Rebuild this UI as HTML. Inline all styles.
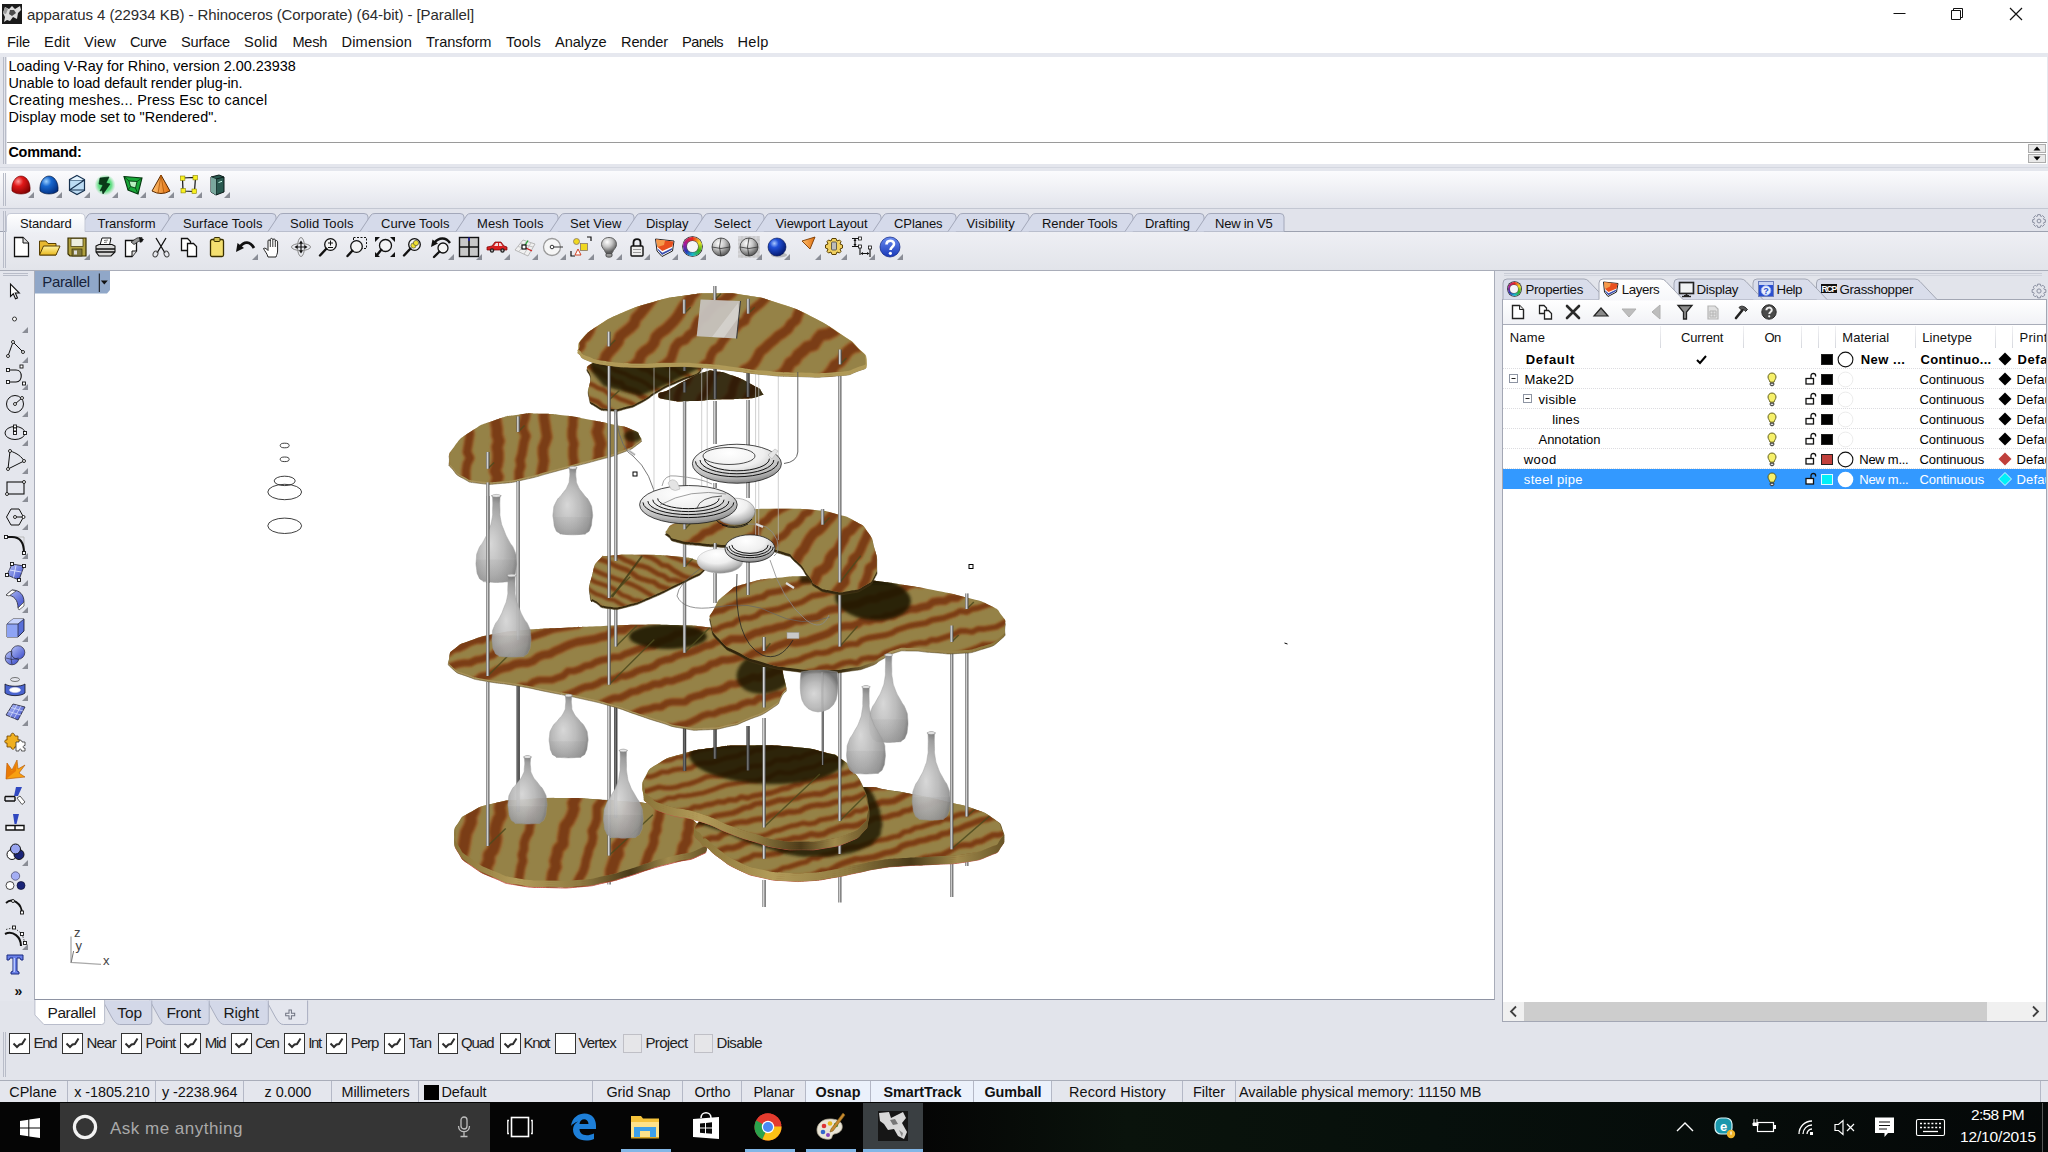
<!DOCTYPE html>
<html><head><meta charset="utf-8"><title>Rhino</title>
<style>
html,body{margin:0;padding:0;}
body{width:2048px;height:1152px;overflow:hidden;position:relative;background:#fff;font-family:"Liberation Sans",sans-serif;color:#000;}
.t{position:absolute;white-space:nowrap;}
.b{position:absolute;}
svg{position:absolute;overflow:visible;}
</style></head><body>
<div class="b" style="left:0px;top:53px;width:2048px;height:1050px;background:#e2e4eb;"></div>
<svg style="left:2px;top:4px" width="20" height="20" viewBox="0 0 20 20"><rect width="20" height="20" fill="#1a1a1a"/><path d="M1 9L3 3L7 5L10 2L13 5L18 2L19 6L16 9L15 15L11 13L8 17L5 16L2 18L3 13Z" fill="#dcdcdc"/><path d="M8 6L12 6L14 9L10 12L7 10Z" fill="#4a4a4a"/><path d="M1 9L3 3L6 5L4 10Z" fill="#9a9a9a"/></svg>
<div class="t" style="left:27.0px;top:6.48px;font-size:15.00px;line-height:17.23px;letter-spacing:-0.082px;color:#2c2c2c;">apparatus 4 (22934 KB) - Rhinoceros (Corporate) (64-bit) - [Parallel]</div>
<svg style="left:1880px;top:0" width="168" height="28"><path d="M13.5 13.5H25.5" stroke="#111" stroke-width="1" fill="none"/><path d="M71.5 10.5h9v9h-9z M73.5 10.5v-2h9v9h-2" stroke="#111" stroke-width="1" fill="none"/><path d="M130 8l12 12M142 8l-12 12" stroke="#111" stroke-width="1.2" fill="none"/></svg>
<div class="t" style="left:7.0px;top:33.85px;font-size:14.60px;line-height:16.78px;letter-spacing:-0.131px;color:#111;">File</div>
<div class="t" style="left:44.0px;top:33.85px;font-size:14.60px;line-height:16.78px;letter-spacing:0.211px;color:#111;">Edit</div>
<div class="t" style="left:84.0px;top:33.85px;font-size:14.60px;line-height:16.78px;letter-spacing:0.155px;color:#111;">View</div>
<div class="t" style="left:130.0px;top:33.85px;font-size:14.60px;line-height:16.78px;letter-spacing:-0.489px;color:#111;">Curve</div>
<div class="t" style="left:181.0px;top:33.85px;font-size:14.60px;line-height:16.78px;letter-spacing:-0.188px;color:#111;">Surface</div>
<div class="t" style="left:244.0px;top:33.85px;font-size:14.60px;line-height:16.78px;letter-spacing:0.207px;color:#111;">Solid</div>
<div class="t" style="left:292.5px;top:33.85px;font-size:14.60px;line-height:16.78px;letter-spacing:-0.300px;color:#111;">Mesh</div>
<div class="t" style="left:341.5px;top:33.85px;font-size:14.60px;line-height:16.78px;letter-spacing:0.170px;color:#111;">Dimension</div>
<div class="t" style="left:426.0px;top:33.85px;font-size:14.60px;line-height:16.78px;letter-spacing:-0.053px;color:#111;">Transform</div>
<div class="t" style="left:506.0px;top:33.85px;font-size:14.60px;line-height:16.78px;letter-spacing:0.184px;color:#111;">Tools</div>
<div class="t" style="left:555.0px;top:33.85px;font-size:14.60px;line-height:16.78px;letter-spacing:-0.063px;color:#111;">Analyze</div>
<div class="t" style="left:621.0px;top:33.85px;font-size:14.60px;line-height:16.78px;letter-spacing:-0.147px;color:#111;">Render</div>
<div class="t" style="left:682.0px;top:33.85px;font-size:14.60px;line-height:16.78px;letter-spacing:-0.607px;color:#111;">Panels</div>
<div class="t" style="left:737.5px;top:33.85px;font-size:14.60px;line-height:16.78px;letter-spacing:0.244px;color:#111;">Help</div>
<div class="b" style="left:0px;top:53px;width:2048px;height:4px;background:#e6e8ef;"></div>
<div class="b" style="left:7px;top:57px;width:2040px;height:85px;background:#fff;"></div>
<div class="b" style="left:3px;top:57px;width:1px;height:108px;background:#b8bcc8;"></div>
<div class="b" style="left:5px;top:57px;width:1px;height:108px;background:#b8bcc8;"></div>
<div class="b" style="left:7px;top:142px;width:2040px;height:1px;background:#9a9a9a;"></div>
<div class="b" style="left:7px;top:143px;width:2040px;height:21px;background:#fff;"></div>
<div class="b" style="left:2047px;top:57px;width:1px;height:108px;background:#e6e8ef;"></div>
<div class="t" style="left:8.5px;top:58.04px;font-size:14.40px;line-height:16.55px;letter-spacing:0.003px;">Loading V-Ray for Rhino, version 2.00.23938</div>
<div class="t" style="left:8.5px;top:75.04px;font-size:14.40px;line-height:16.55px;letter-spacing:-0.077px;">Unable to load default render plug-in.</div>
<div class="t" style="left:8.5px;top:92.04px;font-size:14.40px;line-height:16.55px;letter-spacing:0.203px;">Creating meshes... Press Esc to cancel</div>
<div class="t" style="left:8.5px;top:109.04px;font-size:14.40px;line-height:16.55px;letter-spacing:0.035px;">Display mode set to "Rendered".</div>
<div class="t" style="left:8.5px;top:144.04px;font-size:14.40px;line-height:16.55px;letter-spacing:-0.275px;font-weight:bold;">Command:</div>
<svg style="left:2028px;top:143px" width="18" height="21"><rect x="0.5" y="1.5" width="17" height="8" fill="#e9e9e9" stroke="#adadad"/><rect x="0.5" y="11.5" width="17" height="8" fill="#e9e9e9" stroke="#adadad"/><path d="M5.500 7.500h7l-3.500-4z M5.500 13.500h7l-3.500 4z" fill="#000"/></svg>
<div class="b" style="left:0px;top:164px;width:2048px;height:7px;background:#e4e6ed;"></div>
<div class="b" style="left:0px;top:167px;width:2048px;height:1px;background:#d4d7e0;"></div>
<div class="b" style="left:0px;top:171px;width:2048px;height:37px;background:linear-gradient(#fbfbfd,#e3e5ec);"></div>
<div class="b" style="left:3px;top:173px;width:1px;height:33px;background:#b8bcc8;"></div>
<div class="b" style="left:5px;top:173px;width:1px;height:33px;background:#b8bcc8;"></div>
<div class="b" style="left:0px;top:208px;width:2048px;height:1px;background:#c3c7d2;"></div>
<div class="b" style="left:0px;top:209px;width:2048px;height:23px;background:#e1e3eb;"></div>
<div class="b" style="left:0px;top:231px;width:2048px;height:1px;background:#9da2b0;"></div>
<div class="b" style="left:0px;top:232px;width:2048px;height:38px;background:linear-gradient(#eeeff4,#e2e4ea);"></div>
<div class="b" style="left:0px;top:270px;width:2048px;height:1px;background:#a9adb9;"></div>
<div class="b" style="left:3px;top:211px;width:1px;height:57px;background:#b8bcc8;"></div>
<div class="b" style="left:5px;top:211px;width:1px;height:57px;background:#b8bcc8;"></div>
<svg style="left:0;top:209px" width="1300" height="24"><path d="M77 22.5 L88 6 Q89 4.5 92 4.5 L165 4.5 Q169 4.5 169 8 L169 22.5" fill="#d5daea" stroke="#a3a8ba" stroke-width="1"/><path d="M161 22.5 L172 6 Q173 4.5 176 4.5 L272 4.5 Q276 4.5 276 8 L276 22.5" fill="#d5daea" stroke="#a3a8ba" stroke-width="1"/><path d="M268 22.5 L279 6 Q280 4.5 283 4.5 L364 4.5 Q368 4.5 368 8 L368 22.5" fill="#d5daea" stroke="#a3a8ba" stroke-width="1"/><path d="M360 22.5 L371 6 Q372 4.5 375 4.5 L460 4.5 Q464 4.5 464 8 L464 22.5" fill="#d5daea" stroke="#a3a8ba" stroke-width="1"/><path d="M456 22.5 L467 6 Q468 4.5 471 4.5 L554 4.5 Q558 4.5 558 8 L558 22.5" fill="#d5daea" stroke="#a3a8ba" stroke-width="1"/><path d="M550 22.5 L561 6 Q562 4.5 565 4.5 L630 4.5 Q634 4.5 634 8 L634 22.5" fill="#d5daea" stroke="#a3a8ba" stroke-width="1"/><path d="M626 22.5 L637 6 Q638 4.5 641 4.5 L698 4.5 Q702 4.5 702 8 L702 22.5" fill="#d5daea" stroke="#a3a8ba" stroke-width="1"/><path d="M694 22.5 L705 6 Q706 4.5 709 4.5 L760 4.5 Q764 4.5 764 8 L764 22.5" fill="#d5daea" stroke="#a3a8ba" stroke-width="1"/><path d="M756 22.5 L767 6 Q768 4.5 771 4.5 L877 4.5 Q881 4.5 881 8 L881 22.5" fill="#d5daea" stroke="#a3a8ba" stroke-width="1"/><path d="M873 22.5 L884 6 Q885 4.5 888 4.5 L952 4.5 Q956 4.5 956 8 L956 22.5" fill="#d5daea" stroke="#a3a8ba" stroke-width="1"/><path d="M948 22.5 L959 6 Q960 4.5 963 4.5 L1025 4.5 Q1029 4.5 1029 8 L1029 22.5" fill="#d5daea" stroke="#a3a8ba" stroke-width="1"/><path d="M1021 22.5 L1032 6 Q1033 4.5 1036 4.5 L1129 4.5 Q1133 4.5 1133 8 L1133 22.5" fill="#d5daea" stroke="#a3a8ba" stroke-width="1"/><path d="M1125 22.5 L1136 6 Q1137 4.5 1140 4.5 L1200 4.5 Q1204 4.5 1204 8 L1204 22.5" fill="#d5daea" stroke="#a3a8ba" stroke-width="1"/><path d="M1196 22.5 L1207 6 Q1208 4.5 1211 4.5 L1280 4.5 Q1284 4.5 1284 8 L1284 22.5" fill="#d5daea" stroke="#a3a8ba" stroke-width="1"/><defs><linearGradient id="tg" x1="0" y1="0" x2="0" y2="1"><stop offset="0" stop-color="#fff"/><stop offset="1" stop-color="#eef0f5"/></linearGradient></defs><path d="M6.5 23.5 L6.5 9 Q6.5 4.5 11 4.5 L80.5 4.5 Q85 4.5 85 9 L85 23.5 Z" fill="url(#tg)" stroke="none"/><path d="M6.5 22.5 L6.5 9 Q6.5 4.5 11 4.5 L80.5 4.5 Q85 4.5 85 9 L85 22.5" fill="none" stroke="#c5c9d6"/></svg>
<div class="t" style="left:20.0px;top:217.13px;font-size:13.00px;line-height:14.94px;letter-spacing:-0.157px;color:#111;">Standard</div>
<div class="t" style="left:97.5px;top:217.13px;font-size:13.00px;line-height:14.94px;letter-spacing:-0.083px;color:#111;">Transform</div>
<div class="t" style="left:183.0px;top:217.13px;font-size:13.00px;line-height:14.94px;letter-spacing:0.075px;color:#111;">Surface Tools</div>
<div class="t" style="left:290.0px;top:217.13px;font-size:13.00px;line-height:14.94px;letter-spacing:0.079px;color:#111;">Solid Tools</div>
<div class="t" style="left:381.0px;top:217.13px;font-size:13.00px;line-height:14.94px;letter-spacing:0.009px;color:#111;">Curve Tools</div>
<div class="t" style="left:477.0px;top:217.13px;font-size:13.00px;line-height:14.94px;letter-spacing:0.099px;color:#111;">Mesh Tools</div>
<div class="t" style="left:570.0px;top:217.13px;font-size:13.00px;line-height:14.94px;letter-spacing:0.054px;color:#111;">Set View</div>
<div class="t" style="left:646.0px;top:217.13px;font-size:13.00px;line-height:14.94px;letter-spacing:-0.018px;color:#111;">Display</div>
<div class="t" style="left:714.0px;top:217.13px;font-size:13.00px;line-height:14.94px;letter-spacing:0.145px;color:#111;">Select</div>
<div class="t" style="left:775.5px;top:217.13px;font-size:13.00px;line-height:14.94px;letter-spacing:-0.065px;color:#111;">Viewport Layout</div>
<div class="t" style="left:894.0px;top:217.13px;font-size:13.00px;line-height:14.94px;letter-spacing:-0.091px;color:#111;">CPlanes</div>
<div class="t" style="left:966.5px;top:217.13px;font-size:13.00px;line-height:14.94px;letter-spacing:0.178px;color:#111;">Visibility</div>
<div class="t" style="left:1042.0px;top:217.13px;font-size:13.00px;line-height:14.94px;letter-spacing:-0.071px;color:#111;">Render Tools</div>
<div class="t" style="left:1145.0px;top:217.13px;font-size:13.00px;line-height:14.94px;letter-spacing:-0.065px;color:#111;">Drafting</div>
<div class="t" style="left:1215.0px;top:217.13px;font-size:13.00px;line-height:14.94px;letter-spacing:-0.194px;color:#111;">New in V5</div>
<svg style="left:2030.5px;top:212.5px" width="16" height="16" viewBox="0 0 16 16"><path d="M12.84 6.50L14.37 6.71L14.37 9.29L12.84 9.50L12.48 10.37L13.42 11.59L11.59 13.42L10.37 12.48L9.50 12.84L9.29 14.37L6.71 14.37L6.50 12.84L5.63 12.48L4.41 13.42L2.58 11.59L3.52 10.37L3.16 9.50L1.63 9.29L1.63 6.71L3.16 6.50L3.52 5.63L2.58 4.41L4.41 2.58L5.63 3.52L6.50 3.16L6.71 1.63L9.29 1.63L9.50 3.16L10.37 3.52L11.59 2.58L13.42 4.41L12.48 5.63Z" fill="none" stroke="#8a8fa0" stroke-width="1" stroke-linejoin="round"/><circle cx="8" cy="8" r="1.9" fill="none" stroke="#8a8fa0" stroke-width="1"/></svg>
<div class="b" style="left:0px;top:271px;width:34px;height:730px;background:#e4e6ed;"></div>
<div class="b" style="left:3px;top:273px;width:25px;height:1px;background:#b8bcc8;"></div>
<div class="b" style="left:3px;top:275px;width:25px;height:1px;background:#b8bcc8;"></div>
<div class="b" style="left:34px;top:271px;width:1461px;height:729px;background:#fff;border-left:1px solid #a9adb9;border-right:1px solid #a9adb9;border-bottom:1px solid #8e93a3;box-sizing:border-box;"></div>
<svg style="left:35px;top:271px" width="76" height="23"><path d="M0 0H75V19L72 22.600H0Z" fill="#90a7c8"/><path d="M64.300 2.500V21" stroke="#111" stroke-width="1"/><path d="M65.800 9.500h7l-3.500 4z" fill="#111"/></svg>
<div class="t" style="left:42.2px;top:272.79px;font-size:15.00px;line-height:17.23px;letter-spacing:-0.303px;color:#16223a;">Parallel</div>
<svg width="0" height="0" style="left:0;top:0"><defs>
<radialGradient id="gR" cx=".35" cy=".3" r=".8"><stop offset="0" stop-color="#ff9a9a"/><stop offset=".35" stop-color="#e01818"/><stop offset="1" stop-color="#7a0000"/></radialGradient>
<radialGradient id="gB" cx=".35" cy=".3" r=".8"><stop offset="0" stop-color="#9ad0ff"/><stop offset=".35" stop-color="#1868d0"/><stop offset="1" stop-color="#002a7a"/></radialGradient>
<radialGradient id="gG" cx=".38" cy=".3" r=".75"><stop offset="0" stop-color="#fff"/><stop offset=".45" stop-color="#c4c4c4"/><stop offset="1" stop-color="#4a4a4a"/></radialGradient>
<radialGradient id="gBl" cx=".35" cy=".3" r=".8"><stop offset="0" stop-color="#a8c8ff"/><stop offset=".3" stop-color="#2050d8"/><stop offset="1" stop-color="#001060"/></radialGradient>
<radialGradient id="gGl" cx=".5" cy=".5" r=".5"><stop offset="0" stop-color="#30e060"/><stop offset=".6" stop-color="#40d868" stop-opacity=".8"/><stop offset="1" stop-color="#60e080" stop-opacity="0"/></radialGradient>
<linearGradient id="gY" x1="0" y1="0" x2="0" y2="1"><stop offset="0" stop-color="#fff3a0"/><stop offset="1" stop-color="#e8b820"/></linearGradient>
<linearGradient id="gO" x1="0" y1="0" x2="1" y2="0"><stop offset="0" stop-color="#ffc070"/><stop offset="1" stop-color="#e07010"/></linearGradient>
<linearGradient id="gS" x1="0" y1="0" x2="1" y2="1"><stop offset="0" stop-color="#b8c4f8"/><stop offset="1" stop-color="#3848c8"/></linearGradient>
<linearGradient id="gQ" x1="0" y1="0" x2="0" y2="1"><stop offset="0" stop-color="#6a8cf0"/><stop offset="1" stop-color="#1838b8"/></linearGradient>
</defs></svg>
<svg style="left:10px;top:174px" width="22" height="22" viewBox="0 0 22 22"><path d="M2 17C1 8 6 2 11 2C16 2 21 8 20 17C16 21 6 21 2 17Z" fill="url(#gR)" stroke="#600" stroke-width=".6"/></svg>
<svg style="left:28px;top:192px" width="6" height="6"><path d="M6 0V6H0Z" fill="#8a8d96"/></svg>
<svg style="left:38px;top:174px" width="22" height="22" viewBox="0 0 22 22"><path d="M2 17C1 8 6 2 11 2C16 2 21 8 20 17C16 21 6 21 2 17Z" fill="url(#gB)" stroke="#013" stroke-width=".6"/></svg>
<svg style="left:56px;top:192px" width="6" height="6"><path d="M6 0V6H0Z" fill="#8a8d96"/></svg>
<svg style="left:66px;top:174px" width="22" height="22" viewBox="0 0 22 22"><path d="M11 1.500L18.500 5.500V16.500L11 20.500L3.500 16.500V5.500Z" fill="#bcdcf4" stroke="#16304e" stroke-width="1.200"/><path d="M3.500 6H18.500M3.500 16H18.500M3.500 16L18.500 6" fill="none" stroke="#16304e" stroke-width="1.100"/><path d="M4.500 6L11 2.500L17.500 6Z" fill="#e4f2fc"/></svg>
<svg style="left:84px;top:192px" width="6" height="6"><path d="M6 0V6H0Z" fill="#8a8d96"/></svg>
<svg style="left:94px;top:174px" width="22" height="22" viewBox="0 0 22 22"><circle cx="11" cy="11" r="10.500" fill="url(#gGl)"/><path d="M6 4L15 3L12 9L16 10L9 20L8 16L6 17L9 11L5 10Z" fill="#0a3a18" stroke="#021" stroke-width=".6"/></svg>
<svg style="left:112px;top:192px" width="6" height="6"><path d="M6 0V6H0Z" fill="#8a8d96"/></svg>
<svg style="left:122px;top:174px" width="22" height="22" viewBox="0 0 22 22"><path d="M2 2.500L20 4L16 20L6 16Z" fill="#18a838" stroke="#053a10" stroke-width="1.100"/><path d="M7 7L15 7.500L13.500 14L8.500 12.500Z" fill="#b8f0c0" stroke="#053a10" stroke-width=".9"/><path d="M2 2.500L7 7M20 4L15 7.500M16 20L13.500 14M6 16L8.500 12.500" stroke="#053a10" stroke-width=".8"/></svg>
<svg style="left:140px;top:192px" width="6" height="6"><path d="M6 0V6H0Z" fill="#8a8d96"/></svg>
<svg style="left:150px;top:174px" width="22" height="22" viewBox="0 0 22 22"><path d="M11 1L20 17Q11 22 2 17Z" fill="url(#gO)" stroke="#5a2a00" stroke-width="1"/><path d="M11 1L8 19.500M11 1L14 19.500" stroke="#a85000" stroke-width=".7"/></svg>
<svg style="left:168px;top:192px" width="6" height="6"><path d="M6 0V6H0Z" fill="#8a8d96"/></svg>
<svg style="left:178px;top:174px" width="22" height="22" viewBox="0 0 22 22"><path d="M4.500 4L17.500 3.500L16.500 17.500L5 17Z" fill="none" stroke="#111" stroke-width="1.200"/><g fill="#f8f020" stroke="#8a8400" stroke-width=".6"><rect x="2.500" y="2" width="4.400" height="4.400"/><rect x="15" y="1.500" width="4.400" height="4.400"/><rect x="14" y="15" width="4.400" height="4.400"/><rect x="3" y="14.500" width="4.400" height="4.400"/></g></svg>
<svg style="left:196px;top:192px" width="6" height="6"><path d="M6 0V6H0Z" fill="#8a8d96"/></svg>
<svg style="left:205.5px;top:174px" width="22" height="22" viewBox="0 0 22 22"><path d="M5 3L13 1L18 3V18L10 21L5 18Z" fill="#2a5a50" stroke="#0a1a18" stroke-width="1"/><path d="M5 3L10 5V21M10 5L18 3" fill="none" stroke="#0a1a18" stroke-width=".9"/><path d="M5 3L10 5V21L5 18Z" fill="#7aa89e"/><path d="M12.500 8.500L16 7.300" stroke="#cfe" stroke-width="1"/></svg>
<svg style="left:223.5px;top:192px" width="6" height="6"><path d="M6 0V6H0Z" fill="#8a8d96"/></svg>
<svg style="left:9.5px;top:236px" width="22" height="22" viewBox="0 0 22 22"><path d="M4.500 1.500H13L18.500 7V20.500H4.500Z" fill="#fff" stroke="#111" stroke-width="1.300"/><path d="M13 1.500V7H18.500" fill="#ddd" stroke="#111" stroke-width="1"/></svg>
<svg style="left:37.5px;top:236px" width="22" height="22" viewBox="0 0 22 22"><path d="M1.500 5H8L10 7.500H18V19H1.500Z" fill="#e8b830" stroke="#5a4000" stroke-width="1"/><path d="M1.500 19L5.500 10H22L18 19Z" fill="url(#gY)" stroke="#5a4000" stroke-width="1"/></svg>
<svg style="left:65.5px;top:236px" width="22" height="22" viewBox="0 0 22 22"><path d="M2 2H20V20H4L2 18Z" fill="#b0a040" stroke="#3a3000" stroke-width="1.200"/><rect x="5" y="2.500" width="12" height="8" fill="#ededdd" stroke="#3a3000" stroke-width=".7"/><rect x="6" y="13" width="10" height="7" fill="#807840" stroke="#3a3000" stroke-width=".7"/><rect x="8" y="14.500" width="3" height="4" fill="#ddd"/></svg>
<svg style="left:83.5px;top:254px" width="6" height="6"><path d="M6 0V6H0Z" fill="#8a8d96"/></svg>
<svg style="left:93.5px;top:236px" width="22" height="22" viewBox="0 0 22 22"><path d="M6 9L8 2H17L15.500 9Z" fill="#fff" stroke="#111" stroke-width="1"/><path d="M2 10L5 8.500H18L21 10V16L17 20H5L2 16Z" fill="#d8d8d8" stroke="#111" stroke-width="1.100"/><path d="M2 13H21M2 16H21" stroke="#111" stroke-width="1.300"/><path d="M10 4.500L14 4M10 6.500L13 6" stroke="#555" stroke-width=".8"/></svg>
<svg style="left:122px;top:236px" width="22" height="22" viewBox="0 0 22 22"><path d="M3.500 4.500H14.500V15L10 20.500H3.500Z" fill="#fff" stroke="#111" stroke-width="1.300"/><path d="M14.500 15H10V20.500" fill="#ddd" stroke="#111" stroke-width="1"/><path d="M9 6L15 2L20 1.500V6L17 5L12 8.500Z" fill="#999" stroke="#222" stroke-width=".8"/><path d="M17 1L22 3.500L18 7Z" fill="#111"/></svg>
<svg style="left:150px;top:236px" width="22" height="22" viewBox="0 0 22 22"><path d="M6 2L15 17M16 2L7 17" stroke="#111" stroke-width="1.300"/><ellipse cx="5.500" cy="18" rx="2.300" ry="3" fill="none" stroke="#444" stroke-width="1" transform="rotate(25 5.500 18)"/><ellipse cx="16.500" cy="18" rx="2.300" ry="3" fill="none" stroke="#444" stroke-width="1" transform="rotate(-25 16.500 18)"/></svg>
<svg style="left:178px;top:236px" width="22" height="22" viewBox="0 0 22 22"><path d="M3.500 2.500H9.500L12.500 5.500V14.500H3.500Z" fill="#fff" stroke="#111" stroke-width="1.300"/><path d="M9.500 7.500H15.500L18.500 10.500V20.500H9.500Z" fill="#fff" stroke="#111" stroke-width="1.300"/></svg>
<svg style="left:206px;top:236px" width="22" height="22" viewBox="0 0 22 22"><rect x="4.500" y="3.500" width="13" height="17" rx="1.500" fill="#f4e070" stroke="#3a3000" stroke-width="1.300"/><rect x="8" y="1.500" width="6" height="4" rx="1" fill="#d0c050" stroke="#3a3000" stroke-width="1"/></svg>
<svg style="left:234px;top:236px" width="22" height="22" viewBox="0 0 22 22"><path d="M2 16L3.500 7L10 12Z" fill="#111"/><path d="M6 11C10 5 16 5 20 12" fill="none" stroke="#111" stroke-width="2.800"/></svg>
<svg style="left:252px;top:254px" width="6" height="6"><path d="M6 0V6H0Z" fill="#8a8d96"/></svg>
<svg style="left:261.5px;top:236px" width="22" height="22" viewBox="0 0 22 22"><path d="M6 21C5 17 2.500 15 1.500 12.500C3 11.500 5 13 6 14.500V5C6 3.500 8 3.500 8.300 5V3.500C8.500 2 10.500 2 10.800 3.500V4C11 2.500 13 2.500 13.300 4V5.500C13.500 4 15.500 4.200 15.600 5.800V15C15.500 18 14.500 19 14 21Z" fill="#fff" stroke="#222" stroke-width="1"/><path d="M8.300 5V11M10.800 4V11M13.300 5.500V11" stroke="#222" stroke-width=".9"/></svg>
<svg style="left:290px;top:236px" width="22" height="22" viewBox="0 0 22 22"><ellipse cx="11" cy="11" rx="9.500" ry="3.500" fill="none" stroke="#888" stroke-width="1"/><ellipse cx="11" cy="11" rx="3.500" ry="9.500" fill="none" stroke="#888" stroke-width="1"/><path d="M11 6V16M6 11H16" stroke="#111" stroke-width="1.200"/><path d="M11 4.500L9 7.500H13ZM11 17.500L9 14.500H13ZM4.500 11L7.500 9V13ZM17.500 11L14.500 9V13Z" fill="#111"/></svg>
<svg style="left:318px;top:236px" width="22" height="22" viewBox="0 0 22 22"><circle cx="12.500" cy="8.500" r="5.800" fill="#f4f4f4" stroke="#111" stroke-width="1.300"/><path d="M8.300 12.800L2 19.500" stroke="#111" stroke-width="2.400" stroke-linecap="round"/><path d="M10 7H15M12.500 4.500V9.500M10 11.500H15" stroke="#111" stroke-width="1"/></svg>
<svg style="left:346px;top:236px" width="22" height="22" viewBox="0 0 22 22"><rect x="7.500" y="1.500" width="13" height="11" fill="none" stroke="#111" stroke-width="1" stroke-dasharray="2 1.500"/><circle cx="10.500" cy="10.500" r="5.800" fill="#f4f4f4" stroke="#111" stroke-width="1.300"/><path d="M6.300 14.800L1.500 20" stroke="#111" stroke-width="2.400" stroke-linecap="round"/></svg>
<svg style="left:374px;top:236px" width="22" height="22" viewBox="0 0 22 22"><circle cx="11.500" cy="9.500" r="6" fill="#f4f4f4" stroke="#111" stroke-width="1.300"/><path d="M7.300 13.800L3 19" stroke="#111" stroke-width="2.400" stroke-linecap="round"/><path d="M1 1H6L1 6ZM21 1V6L16 1ZM1 21V16L6 21ZM21 21H16L21 16Z" fill="#111"/></svg>
<svg style="left:402px;top:236px" width="22" height="22" viewBox="0 0 22 22"><circle cx="12.500" cy="8.500" r="5.800" fill="#f4f4f4" stroke="#111" stroke-width="1.300"/><path d="M8.300 12.800L2 19.500" stroke="#111" stroke-width="2.400" stroke-linecap="round"/><circle cx="11.500" cy="9.500" r="2.600" fill="#f0e030" stroke="#554" stroke-width=".7"/><circle cx="14" cy="7" r="2.600" fill="#f0e030" stroke="#554" stroke-width=".7"/></svg>
<svg style="left:430px;top:236px" width="22" height="22" viewBox="0 0 22 22"><circle cx="13" cy="12" r="5" fill="#f4f4f4" stroke="#111" stroke-width="1.300"/><path d="M9.300 15.800L4 21" stroke="#111" stroke-width="2.300" stroke-linecap="round"/><path d="M1 11L2.500 3.500L8 7.500Z" fill="#111"/><path d="M4.500 6.500C9 1 16 1 20 7" fill="none" stroke="#111" stroke-width="2.400"/></svg>
<svg style="left:448px;top:254px" width="6" height="6"><path d="M6 0V6H0Z" fill="#8a8d96"/></svg>
<svg style="left:458px;top:236px" width="22" height="22" viewBox="0 0 22 22"><rect x="1.500" y="1.500" width="19" height="19" fill="#c8c8c8" stroke="#111" stroke-width="1.400"/><path d="M11 1.500V20.500M1.500 11H20.500" stroke="#111" stroke-width="1.600"/><path d="M11 1.500V5" stroke="#22a" stroke-width="1.600"/></svg>
<svg style="left:476px;top:254px" width="6" height="6"><path d="M6 0V6H0Z" fill="#8a8d96"/></svg>
<svg style="left:486px;top:236px" width="22" height="22" viewBox="0 0 22 22"><path d="M1 14V11L6 10L9 6H15L18 10L21 11V14Z" fill="#d82020" stroke="#700" stroke-width=".7"/><path d="M8 10L10 7H12V10ZM13 7H14.500L16.500 10H13Z" fill="#f4dada"/><circle cx="6" cy="14.500" r="2.200" fill="#222"/><circle cx="16.500" cy="14.500" r="2.200" fill="#222"/><circle cx="6" cy="14.500" r=".9" fill="#bbb"/><circle cx="16.500" cy="14.500" r=".9" fill="#bbb"/></svg>
<svg style="left:504px;top:254px" width="6" height="6"><path d="M6 0V6H0Z" fill="#8a8d96"/></svg>
<svg style="left:514px;top:236px" width="22" height="22" viewBox="0 0 22 22"><path d="M1 14L9 4L21 8L14 20Z" fill="#f0f0f0" stroke="#aaa" stroke-width=".8"/><path d="M4 10.500L17 14M6.500 7.500L19 11M5 15.500L12 6M10 18L17 7" stroke="#b8b8b8" stroke-width=".8"/><path d="M10 11L18 15" stroke="#d02020" stroke-width="1.300"/><path d="M10 11L14 4.500" stroke="#20a030" stroke-width="1.300"/><rect x="8" y="9" width="4" height="4" fill="#fff" stroke="#111" stroke-width="1.200"/></svg>
<svg style="left:532px;top:254px" width="6" height="6"><path d="M6 0V6H0Z" fill="#8a8d96"/></svg>
<svg style="left:542px;top:236px" width="22" height="22" viewBox="0 0 22 22"><circle cx="10" cy="11" r="8.500" fill="#f6f6f6" stroke="#9a9a9a" stroke-width="1.300"/><path d="M10 11H21" stroke="#555" stroke-width="1.200"/><circle cx="10" cy="11" r="1.800" fill="#fff" stroke="#333" stroke-width="1"/></svg>
<svg style="left:560px;top:254px" width="6" height="6"><path d="M6 0V6H0Z" fill="#8a8d96"/></svg>
<svg style="left:570px;top:236px" width="22" height="22" viewBox="0 0 22 22"><path d="M1 15V20H5M17 1H21V5" fill="none" stroke="#111" stroke-width="1.200"/><circle cx="6.500" cy="5.500" r="3" fill="#f0d820" stroke="#876" stroke-width=".8"/><rect x="10.500" y="7.500" width="7" height="7" fill="#f0d820" stroke="#876" stroke-width=".8"/><path d="M8 13L11 19H5Z" fill="#fff" stroke="#d04020" stroke-width="1"/></svg>
<svg style="left:588px;top:254px" width="6" height="6"><path d="M6 0V6H0Z" fill="#8a8d96"/></svg>
<svg style="left:598px;top:236px" width="22" height="22" viewBox="0 0 22 22"><path d="M11 1.500C6 1.500 3.500 5 3.500 8.500C3.500 12 6.500 13 7.500 16.500H14.500C15.500 13 18.500 12 18.500 8.500C18.500 5 16 1.500 11 1.500Z" fill="url(#gG)" stroke="#555" stroke-width=".9"/><path d="M8 17.500H14V20C14 21.500 8 21.500 8 20Z" fill="#999" stroke="#333" stroke-width=".8"/></svg>
<svg style="left:616px;top:254px" width="6" height="6"><path d="M6 0V6H0Z" fill="#8a8d96"/></svg>
<svg style="left:626px;top:236px" width="22" height="22" viewBox="0 0 22 22"><rect x="5" y="10" width="12" height="10" rx="1" fill="#eee" stroke="#111" stroke-width="1.400"/><path d="M7.500 10V6.500C7.500 2 14.500 2 14.500 6.500V10" fill="none" stroke="#111" stroke-width="1.800"/><path d="M7 13.500H15M7 16.500H15" stroke="#999" stroke-width="1"/></svg>
<svg style="left:644px;top:254px" width="6" height="6"><path d="M6 0V6H0Z" fill="#8a8d96"/></svg>
<svg style="left:654px;top:236px" width="22" height="22" viewBox="0 0 22 22"><path d="M1.500 3L20 5L18.500 15L8 20.500L3 15Z" fill="#fff" stroke="#222" stroke-width="1"/><path d="M2.200 3.500L19.400 5.500L18.400 10.500L8.300 15L3.500 11Z" fill="#e8501e"/><path d="M2.200 3.500L11 4.500L10 9L3.500 11Z" fill="#f59a4a"/><path d="M3.800 14L8 19L17.800 14L18.200 12L8.400 16.800L3.500 12.500Z" fill="#3a4fae"/></svg>
<svg style="left:672px;top:254px" width="6" height="6"><path d="M6 0V6H0Z" fill="#8a8d96"/></svg>
<svg style="left:682px;top:236px" width="22" height="22" viewBox="0 0 22 22"></svg>
<svg style="left:700px;top:254px" width="6" height="6"><path d="M6 0V6H0Z" fill="#8a8d96"/></svg>
<svg style="left:710px;top:236px" width="22" height="22" viewBox="0 0 22 22"><circle cx="11" cy="11" r="9" fill="url(#gG)" stroke="#333" stroke-width=".8"/><path d="M2 11Q11 14 20 11M11 2Q8 11 11 20" fill="none" stroke="#333" stroke-width=".8"/></svg>
<svg style="left:738px;top:236px" width="22" height="22" viewBox="0 0 22 22"><rect x="0" y="0" width="22" height="22" fill="#d4d4d8"/><path d="M0 4H22M0 8H22M0 12H22M0 16H22M0 20H22M4 0V22M8 0V22M12 0V22M16 0V22M20 0V22" stroke="#bbb" stroke-width=".6"/><circle cx="11" cy="11" r="9" fill="url(#gG)" stroke="#333" stroke-width=".8"/><path d="M2 11Q11 14 20 11M11 2Q8 11 11 20" fill="none" stroke="#333" stroke-width=".8"/></svg>
<svg style="left:756px;top:254px" width="6" height="6"><path d="M6 0V6H0Z" fill="#8a8d96"/></svg>
<svg style="left:766px;top:236px" width="22" height="22" viewBox="0 0 22 22"><ellipse cx="13" cy="19" rx="8" ry="2.500" fill="#999" opacity=".6"/><circle cx="11" cy="11" r="9" fill="url(#gBl)" stroke="#001050" stroke-width=".6"/></svg>
<svg style="left:784px;top:254px" width="6" height="6"><path d="M6 0V6H0Z" fill="#8a8d96"/></svg>
<svg style="left:797px;top:236px" width="22" height="22" viewBox="0 0 22 22"><path d="M5 5L18 1L13 13Z" fill="url(#gO)" stroke="#7a3a00" stroke-width=".9"/></svg>
<svg style="left:815px;top:254px" width="6" height="6"><path d="M6 0V6H0Z" fill="#8a8d96"/></svg>
<svg style="left:823px;top:236px" width="22" height="22" viewBox="0 0 22 22"><path d="M11 2.500L13 2.500L14 5L16.500 4L18 5.500L17 8L19.500 9V12L17 13L18 15.500L16.500 17L14 16L13 18.500H9L8 16L5.500 17L4 15.500L5 13L2.500 12V9L5 8L4 5.500L5.500 4L8 5L9 2.500Z" fill="#f0d060" stroke="#5a4000" stroke-width="1"/><rect x="8.500" y="6" width="5" height="8" rx="1" fill="#bbb" stroke="#444" stroke-width=".8"/></svg>
<svg style="left:841px;top:254px" width="6" height="6"><path d="M6 0V6H0Z" fill="#8a8d96"/></svg>
<svg style="left:851px;top:236px" width="22" height="22" viewBox="0 0 22 22"><path d="M1 2.500H9M1 10.500H9M4 3.500V9.500M9 10.500V19M19 12V21M10.500 17.500H17.500" fill="none" stroke="#111" stroke-width="1.100"/><path d="M4 2.500L2.500 5H5.500ZM4 10.500L2.500 8H5.500ZM9.500 17.500L12 16V19ZM18.500 17.500L16 16V19Z" fill="#111"/><rect x="7.500" y="1" width="3" height="3" fill="#fff" stroke="#111" stroke-width=".8"/><rect x="7.500" y="9" width="3" height="3" fill="#fff" stroke="#111" stroke-width=".8"/><rect x="17.500" y="10" width="3" height="3" fill="#fff" stroke="#111" stroke-width=".8"/></svg>
<svg style="left:869px;top:254px" width="6" height="6"><path d="M6 0V6H0Z" fill="#8a8d96"/></svg>
<svg style="left:879px;top:236px" width="22" height="22" viewBox="0 0 22 22"><circle cx="11" cy="11" r="10" fill="url(#gQ)" stroke="#0a2080" stroke-width=".7"/><path d="M7.500 8.500C7.500 3.500 15 3.500 15 8C15 11 11.500 11 11.500 14" fill="none" stroke="#fff" stroke-width="2.600"/><circle cx="11.400" cy="17.300" r="1.600" fill="#fff"/></svg>
<svg style="left:897px;top:254px" width="6" height="6"><path d="M6 0V6H0Z" fill="#8a8d96"/></svg>
<svg style="left:4px;top:280px" width="22" height="22" viewBox="0 0 22 22"><path d="M6.500 4V16.500L9.300 13.800L11.500 18.800L13.500 18L11.300 13H15.300Z" fill="#fff" stroke="#111" stroke-width="1.100"/></svg>
<svg style="left:4px;top:308px" width="22" height="22" viewBox="0 0 22 22"><circle cx="10.500" cy="11" r="2" fill="#fff" stroke="#333" stroke-width="1"/></svg>
<svg style="left:22px;top:327px" width="6" height="6"><path d="M6 0V6H0Z" fill="#8a8d96"/></svg>
<svg style="left:4px;top:337.5px" width="22" height="22" viewBox="0 0 22 22"><path d="M4 18L9 4L19 14" fill="none" stroke="#111" stroke-width="1"/><circle cx="4" cy="18" r="1.500" fill="#fff" stroke="#111" stroke-width=".9"/><circle cx="9" cy="4" r="1.500" fill="#fff" stroke="#111" stroke-width=".9"/><circle cx="19" cy="14" r="1.500" fill="#fff" stroke="#111" stroke-width=".9"/></svg>
<svg style="left:22px;top:356.5px" width="6" height="6"><path d="M6 0V6H0Z" fill="#8a8d96"/></svg>
<svg style="left:4px;top:365px" width="22" height="22" viewBox="0 0 22 22"><path d="M4 5H12C19 5 19 17 12 17H4" fill="none" stroke="#111" stroke-width="1.100"/><rect x="2.5" y="3.5" width="3" height="3" fill="#fff" stroke="#111" stroke-width=".9"/><rect x="2.5" y="15.5" width="3" height="3" fill="#fff" stroke="#111" stroke-width=".9"/><rect x="16" y="0" width="3" height="3" fill="#fff" stroke="#111" stroke-width=".9"/><rect x="18.5" y="17" width="3" height="3" fill="#fff" stroke="#111" stroke-width=".9"/></svg>
<svg style="left:22px;top:384px" width="6" height="6"><path d="M6 0V6H0Z" fill="#8a8d96"/></svg>
<svg style="left:4px;top:392px" width="22" height="22" viewBox="0 0 22 22"><circle cx="11" cy="12" r="8.500" fill="none" stroke="#111" stroke-width="1"/><path d="M11 12L18 6" stroke="#111" stroke-width="1"/><circle cx="11" cy="12" r="1.500" fill="#fff" stroke="#111" stroke-width=".9"/><circle cx="18" cy="6" r="1.500" fill="#fff" stroke="#111" stroke-width=".9"/></svg>
<svg style="left:22px;top:411px" width="6" height="6"><path d="M6 0V6H0Z" fill="#8a8d96"/></svg>
<svg style="left:4px;top:420.5px" width="22" height="22" viewBox="0 0 22 22"><ellipse cx="11" cy="12" rx="10" ry="6.500" fill="none" stroke="#111" stroke-width="1"/><rect x="9.5" y="4" width="3" height="3" fill="#fff" stroke="#111" stroke-width=".9"/><rect x="9.5" y="10.5" width="3" height="3" fill="#fff" stroke="#111" stroke-width=".9"/><rect x="19.5" y="10.5" width="3" height="3" fill="#fff" stroke="#111" stroke-width=".9"/><rect x="9.5" y="7" width="3" height="3" fill="#fff" stroke="#111" stroke-width=".9"/></svg>
<svg style="left:22px;top:439.5px" width="6" height="6"><path d="M6 0V6H0Z" fill="#8a8d96"/></svg>
<svg style="left:4px;top:448.5px" width="22" height="22" viewBox="0 0 22 22"><path d="M4 20L6 2C13 4 18 8 20 12Z" fill="none" stroke="#111" stroke-width="1"/><circle cx="4" cy="20" r="1.500" fill="#fff" stroke="#111" stroke-width=".9"/><circle cx="6" cy="2" r="1.500" fill="#fff" stroke="#111" stroke-width=".9"/><circle cx="20" cy="12" r="1.500" fill="#fff" stroke="#111" stroke-width=".9"/></svg>
<svg style="left:22px;top:467.5px" width="6" height="6"><path d="M6 0V6H0Z" fill="#8a8d96"/></svg>
<svg style="left:4px;top:477px" width="22" height="22" viewBox="0 0 22 22"><rect x="3" y="5" width="17" height="12" fill="none" stroke="#111" stroke-width="1.100"/><circle cx="3" cy="17" r="1.500" fill="#fff" stroke="#111" stroke-width=".9"/><circle cx="20" cy="5" r="1.500" fill="#fff" stroke="#111" stroke-width=".9"/></svg>
<svg style="left:22px;top:496px" width="6" height="6"><path d="M6 0V6H0Z" fill="#8a8d96"/></svg>
<svg style="left:4px;top:505px" width="22" height="22" viewBox="0 0 22 22"><path d="M7 4H15L19.500 12L15 20H7L2.500 12Z" fill="none" stroke="#111" stroke-width="1"/><path d="M11 12H19.500" stroke="#111" stroke-width="1"/><circle cx="11" cy="12" r="1.500" fill="#fff" stroke="#111" stroke-width=".9"/><circle cx="19.5" cy="12" r="1.500" fill="#fff" stroke="#111" stroke-width=".9"/></svg>
<svg style="left:22px;top:524px" width="6" height="6"><path d="M6 0V6H0Z" fill="#8a8d96"/></svg>
<svg style="left:4px;top:533.5px" width="22" height="22" viewBox="0 0 22 22"><path d="M12 3H20V20" fill="none" stroke="#bbb" stroke-width="1"/><path d="M2 3H8C16 3 20 8 20 19" fill="none" stroke="#111" stroke-width="2"/><rect x="0.5" y="1.5" width="3" height="3" fill="#fff" stroke="#111" stroke-width=".9"/><rect x="18.5" y="17.5" width="3" height="3" fill="#fff" stroke="#111" stroke-width=".9"/></svg>
<svg style="left:22px;top:552.5px" width="6" height="6"><path d="M6 0V6H0Z" fill="#8a8d96"/></svg>
<svg style="left:4px;top:561px" width="22" height="22" viewBox="0 0 22 22"><path d="M3 14L8 3L20 5L15 19Z" fill="url(#gS)" stroke="#223" stroke-width=".8"/><path d="M5.500 9L17.500 11M12 4.500L9.500 16.500" stroke="#e8ecff" stroke-width=".8"/><rect x="1.5" y="12.5" width="3" height="3" fill="#fff" stroke="#111" stroke-width=".9"/><rect x="6.5" y="1.5" width="3" height="3" fill="#fff" stroke="#111" stroke-width=".9"/><rect x="18.5" y="3.5" width="3" height="3" fill="#fff" stroke="#111" stroke-width=".9"/><rect x="13.5" y="17.5" width="3" height="3" fill="#fff" stroke="#111" stroke-width=".9"/></svg>
<svg style="left:22px;top:580px" width="6" height="6"><path d="M6 0V6H0Z" fill="#8a8d96"/></svg>
<svg style="left:4px;top:588px" width="22" height="22" viewBox="0 0 22 22"><path d="M2 7L8 2C16 2 20 7 20 14L14 20C14 12 10 7 2 7Z" fill="url(#gS)" stroke="#223" stroke-width=".8"/><path d="M2 7L8 2L12 3L5 8ZM14 20L20 14V18L15 22Z" fill="#fff" stroke="#444" stroke-width=".7"/></svg>
<svg style="left:22px;top:607px" width="6" height="6"><path d="M6 0V6H0Z" fill="#8a8d96"/></svg>
<svg style="left:4px;top:617px" width="22" height="22" viewBox="0 0 22 22"><path d="M3 7L9 2H20V14L14 20H3Z" fill="#5a70d8" stroke="#112" stroke-width=".8"/><path d="M3 7H14V20H3Z" fill="#8ea4f4"/><path d="M3 7L9 2H20L14 7Z" fill="#c8d4fc"/><path d="M3 7H14V20M14 7L20 2" fill="none" stroke="#223" stroke-width=".7"/></svg>
<svg style="left:22px;top:636px" width="6" height="6"><path d="M6 0V6H0Z" fill="#8a8d96"/></svg>
<svg style="left:4px;top:643.5px" width="22" height="22" viewBox="0 0 22 22"><circle cx="8" cy="14" r="6.800" fill="url(#gS)" stroke="#223" stroke-width=".7"/><circle cx="14" cy="8.500" r="6.800" fill="url(#gS)" stroke="#223" stroke-width=".7"/><path d="M2 14Q8 17 14.500 14M8 7.500Q6 14 8 20.500" fill="none" stroke="#223" stroke-width=".6"/></svg>
<svg style="left:22px;top:662.5px" width="6" height="6"><path d="M6 0V6H0Z" fill="#8a8d96"/></svg>
<svg style="left:4px;top:675.5px" width="22" height="22" viewBox="0 0 22 22"><ellipse cx="11" cy="3.500" rx="4.500" ry="2" fill="none" stroke="#555" stroke-width=".8"/><path d="M1 8C5 11 17 11 21 8V17C17 20.500 5 20.500 1 17Z" fill="#4a64d0" stroke="#112" stroke-width=".8"/><ellipse cx="11" cy="14" rx="5.500" ry="2.600" fill="#fff" stroke="#dde" stroke-width=".6"/></svg>
<svg style="left:22px;top:694.5px" width="6" height="6"><path d="M6 0V6H0Z" fill="#8a8d96"/></svg>
<svg style="left:4px;top:701px" width="22" height="22" viewBox="0 0 22 22"><path d="M2 14L9 3L21 6L14 19Z" fill="url(#gS)" stroke="#223" stroke-width=".8"/><path d="M4.500 10.500L17 14M7 6.500L19 10M6 16L13 4M10 17.500L17 5" stroke="#dfe6ff" stroke-width=".7"/></svg>
<svg style="left:22px;top:720px" width="6" height="6"><path d="M6 0V6H0Z" fill="#8a8d96"/></svg>
<svg style="left:4px;top:730px" width="22" height="22" viewBox="0 0 22 22"><path d="M3 6H7C6 3 10 2 10.500 5L11 6H14V10C17 8.500 18 13 14.500 13L14 17H10.500C11 20 7 20 7 17H3V13C0 14 0 9 3 10Z" fill="#f0b020" stroke="#6a4000" stroke-width=".8"/><path d="M12 12H15C14.500 9.500 18 9.500 18 12H21V15.500C18.500 15 18.500 19 21 18V21H17.500C18 18.500 14.500 18.500 15 21H12Z" fill="#fff" stroke="#333" stroke-width=".8"/></svg>
<svg style="left:4px;top:759px" width="22" height="22" viewBox="0 0 22 22"><path d="M2 20L3 4L8 11L13 1L14 10L21 6L15 14L21 18Z" fill="#f8a010" stroke="#b05000" stroke-width=".6"/><path d="M2 20L3 4L8 12L13 3L12 12Z" fill="#e06000" opacity=".6"/></svg>
<svg style="left:4px;top:785px" width="22" height="22" viewBox="0 0 22 22"><path d="M1 11.500H11M1 16H11M1 11.500V16M11 11.500V16" fill="none" stroke="#111" stroke-width="1.400"/><path d="M12 2H18L14 11H10Z" fill="#3048c0"/><path d="M13 13L16 11L21 17L18 19.500Z" fill="#fff" stroke="#333" stroke-width=".8"/></svg>
<svg style="left:4px;top:812px" width="22" height="22" viewBox="0 0 22 22"><path d="M2 13.500H20V18H2Z" fill="#fff" stroke="#111" stroke-width="1.400"/><path d="M11 13V18" stroke="#111" stroke-width="1.400"/><path d="M9 2H15L12.500 12H10.500Z" fill="#3048c0"/></svg>
<svg style="left:4px;top:841px" width="22" height="22" viewBox="0 0 22 22"><circle cx="8" cy="13.500" r="5" fill="#fff" stroke="#111" stroke-width="1"/><circle cx="15" cy="13.500" r="5" fill="#1a2478" stroke="#111" stroke-width="1"/><circle cx="11.500" cy="8" r="5" fill="#98a4f0" stroke="#111" stroke-width="1"/></svg>
<svg style="left:22px;top:860px" width="6" height="6"><path d="M6 0V6H0Z" fill="#8a8d96"/></svg>
<svg style="left:4px;top:870px" width="22" height="22" viewBox="0 0 22 22"><circle cx="6" cy="15.500" r="4" fill="#fff" stroke="#333" stroke-width=".9"/><circle cx="17" cy="15.500" r="4" fill="#1a2478" stroke="#113" stroke-width=".7"/><circle cx="11.500" cy="6" r="4.200" fill="#a4aef4" stroke="#446" stroke-width=".7"/></svg>
<svg style="left:4px;top:895px" width="22" height="22" viewBox="0 0 22 22"><path d="M2 8C8 2 18 8 18 19" fill="none" stroke="#111" stroke-width="1.800"/><circle cx="9" cy="6" r="1.500" fill="#fff" stroke="#111" stroke-width=".9"/><rect x="16.5" y="16" width="3" height="3" fill="#fff" stroke="#111" stroke-width=".9"/></svg>
<svg style="left:4px;top:924.5px" width="22" height="22" viewBox="0 0 22 22"><path d="M1 9C9 5 17 12 17 21" fill="none" stroke="#111" stroke-width="2"/><path d="M2 4.500L10 2.500L18 9L21 18" fill="none" stroke="#333" stroke-width=".9" stroke-dasharray="1.500 1.500"/><rect x="8.5" y="1" width="3" height="3" fill="#fff" stroke="#111" stroke-width=".9"/><rect x="16.5" y="7.5" width="3" height="3" fill="#fff" stroke="#111" stroke-width=".9"/><rect x="19.5" y="16.5" width="3" height="3" fill="#fff" stroke="#111" stroke-width=".9"/></svg>
<svg style="left:22px;top:943.5px" width="6" height="6"><path d="M6 0V6H0Z" fill="#8a8d96"/></svg>
<svg style="left:4px;top:953px" width="22" height="22" viewBox="0 0 22 22"><path d="M3 2H19V7H17L16 5H13V18L15 19V21H7V19L9 18V5H6L5 7H3Z" fill="#6a80e8" stroke="#1a2a80" stroke-width="1"/><path d="M9.500 5H11V19H9.500Z" fill="#b8c8ff"/></svg>
<div class="t" style="left:14.5px;top:983.41px;font-size:14.00px;line-height:16.09px;font-weight:bold;color:#111;">»</div>
<div class="b" style="left:683.2px;top:237.2px;width:18.4px;height:18.4px;border-radius:50%;background:conic-gradient(#e8281e,#f0e020 17%,#38b018 33%,#18b8c8 50%,#2838b8 64%,#a018a0 80%,#e8281e);box-shadow:0 0 0 .8px #2a2a2a;"></div><div class="b" style="left:687.2px;top:241.2px;width:10.4px;height:10.4px;border-radius:50%;background:#f6f6f8;box-shadow:0 0 0 .6px #555;"></div>
<svg style="left:35px;top:271px;overflow:hidden" width="1459" height="727" viewBox="35 271 1459 727"><defs><filter id="bl" x="-5%" y="-5%" width="110%" height="110%"><feGaussianBlur stdDeviation="0.9"/></filter><filter id="bs" x="-20%" y="-20%" width="140%" height="140%"><feGaussianBlur stdDeviation="1.5"/></filter><linearGradient id="pole" x1="0" y1="0" x2="1" y2="0"><stop offset="0" stop-color="#5e5e5e"/><stop offset=".36" stop-color="#dcdcdc"/><stop offset=".66" stop-color="#989898"/><stop offset="1" stop-color="#3e3e3e"/></linearGradient><linearGradient id="poled" x1="0" y1="0" x2="1" y2="0"><stop offset="0" stop-color="#333"/><stop offset=".4" stop-color="#777"/><stop offset="1" stop-color="#222"/></linearGradient><radialGradient id="vase" cx=".42" cy=".64" r=".66" fx=".36" fy=".56"><stop offset="0" stop-color="#d6d6d6"/><stop offset=".45" stop-color="#b8b8b8"/><stop offset=".8" stop-color="#999"/><stop offset="1" stop-color="#6c6c6c"/></radialGradient><linearGradient id="vsh" x1="0" y1="0" x2="0" y2="1"><stop offset="0" stop-color="#fff" stop-opacity="0"/><stop offset=".72" stop-color="#fff" stop-opacity="0"/><stop offset=".745" stop-color="#777" stop-opacity=".1"/><stop offset="1" stop-color="#555" stop-opacity=".2"/></linearGradient><radialGradient id="ufo" cx=".42" cy=".22" r=".85"><stop offset="0" stop-color="#ffffff"/><stop offset=".45" stop-color="#efefef"/><stop offset=".75" stop-color="#bababa"/><stop offset="1" stop-color="#6e6e6e"/></radialGradient><linearGradient id="side" x1="0" y1="0" x2="1" y2="0"><stop offset="0" stop-color="#8a7438"/><stop offset=".25" stop-color="#b39c5a"/><stop offset=".5" stop-color="#8f7a40"/><stop offset=".7" stop-color="#4a3a18"/><stop offset=".85" stop-color="#a08a4c"/><stop offset="1" stop-color="#6a5628"/></linearGradient><linearGradient id="sideG" x1="0" y1="0" x2="1" y2="0"><stop offset="0" stop-color="#2e220b"/><stop offset=".45" stop-color="#3a2c10"/><stop offset=".6" stop-color="#a8925a"/><stop offset="1" stop-color="#8a7438"/></linearGradient><clipPath id="cA"><path d="M579.5 347.2C580.5 342.8 576.9 345.1 583.4 337.8C589.9 330.5 586.0 333.6 599.0 325.3C612.0 317.0 604.2 320.6 622.5 312.8C640.8 305.0 633.0 307.6 653.8 301.9C674.6 296.2 664.2 298.5 685.0 295.6C705.8 292.7 695.5 293.3 716.3 293.3C737.1 293.3 726.7 292.2 747.5 295.6C768.3 299.0 758.0 296.6 778.8 303.4C799.6 310.2 789.2 305.5 810.0 315.9C830.8 326.3 825.7 324.3 841.3 334.7C856.9 345.1 848.8 338.9 856.9 347.2C865.0 355.5 865.5 352.9 865.5 359.7C865.5 366.5 867.6 363.3 856.9 367.5C846.2 371.7 854.2 370.5 833.4 372.2C812.6 373.9 817.8 373.0 794.4 372.5C771.0 372.0 783.9 372.5 763.1 370.6C742.3 368.7 752.7 369.0 731.9 366.7C711.1 364.4 721.4 364.9 700.6 363.6C679.8 362.3 690.2 362.8 669.4 362.8C648.6 362.8 658.9 364.1 638.1 363.6C617.3 363.1 623.6 363.6 606.9 361.3C590.2 359.0 597.0 360.0 588.1 356.6C579.2 353.2 583.2 354.2 580.3 351.1C577.4 348.0 578.5 351.6 579.5 347.2Z"/></clipPath><clipPath id="cB"><path d="M595.0 362.0C578.5 369.3 592.5 368.8 590.5 380.0C588.5 391.2 587.2 387.3 589.0 395.6C590.8 403.9 589.0 400.5 596.0 405.0C603.0 409.5 600.1 408.3 610.0 409.0C619.9 409.7 615.3 409.7 625.6 407.0C635.9 404.3 629.5 407.0 641.0 401.0C652.5 395.0 647.4 396.0 660.0 389.0C672.6 382.0 665.3 386.4 678.8 380.0C692.3 373.6 696.9 376.5 700.6 369.8C704.3 363.1 710.2 363.9 690.0 360.0C669.8 356.1 671.7 357.3 640.0 358.0C608.3 358.7 611.5 354.7 595.0 362.0Z"/></clipPath><clipPath id="cC"><path d="M658.4 394.8C658.4 398.4 657.9 398.2 669.4 400.3C680.9 402.4 677.2 401.3 692.8 401.0C708.4 400.7 700.7 400.2 716.3 399.5C731.9 398.8 725.7 399.8 739.7 398.8C753.7 397.8 751.1 398.8 758.4 396.4C765.7 394.0 763.7 395.6 761.6 391.7C759.5 387.8 762.1 390.2 752.2 384.7C742.3 379.2 743.9 379.7 731.9 375.3C719.9 370.9 725.7 372.4 716.3 371.4C706.9 370.4 714.2 369.1 703.8 372.2C693.4 375.3 696.5 375.1 685.0 380.8C673.5 386.5 678.3 384.7 669.4 389.4C660.5 394.1 658.4 391.2 658.4 394.8Z"/></clipPath><clipPath id="cD"><path d="M449.4 459.4C449.9 452.6 446.7 456.3 454.0 446.9C461.3 437.5 457.7 440.2 471.3 431.3C484.9 422.4 479.1 425.8 494.7 420.3C510.3 414.8 502.5 417.0 518.1 414.8C533.7 412.6 526.0 413.5 541.6 413.8C557.2 414.1 549.4 413.7 565.0 415.6C580.6 417.5 572.8 416.6 588.4 419.5C604.0 422.4 597.8 421.1 611.9 424.2C626.0 427.3 621.3 425.0 630.6 428.9C639.9 432.8 637.6 431.2 639.7 435.9C641.8 440.6 643.6 437.8 636.9 443.0C630.2 448.2 633.2 446.4 619.7 451.6C606.2 456.8 611.9 454.2 596.3 458.6C580.7 463.0 588.4 460.6 572.8 464.8C557.2 469.0 565.0 466.9 549.4 471.1C533.8 475.3 541.5 473.9 525.9 477.3C510.3 480.7 518.1 480.0 502.5 481.3C486.9 482.6 492.0 482.9 479.0 481.3C466.0 479.7 472.2 481.3 463.4 476.6C454.6 471.9 457.2 472.9 452.5 467.2C447.8 461.5 448.9 466.2 449.4 459.4Z"/></clipPath><clipPath id="cE"><path d="M667.3 529.4C670.7 525.0 667.3 526.8 679.0 521.6C690.7 516.4 684.2 517.7 702.5 513.8C720.8 509.9 716.4 511.4 733.8 509.8C751.2 508.2 739.2 509.3 754.8 509.0C770.4 508.7 761.6 508.5 780.6 508.8C799.6 509.1 793.7 508.1 811.9 509.8C830.1 511.5 820.7 509.9 835.3 513.8C849.9 517.7 844.7 515.4 855.6 521.6C866.5 527.8 861.8 523.7 868.1 532.5C874.4 541.3 871.5 537.6 874.4 548.0C877.3 558.4 876.7 554.4 876.7 563.8C876.7 573.2 878.3 569.0 874.4 576.3C870.5 583.6 873.3 580.7 865.0 585.6C856.7 590.5 860.3 589.2 849.4 591.0C838.5 592.8 843.1 592.8 832.2 591.0C821.3 589.2 824.4 590.5 816.6 585.6C808.8 580.7 815.6 584.6 808.8 576.3C802.0 568.0 805.7 568.9 796.3 560.6C786.9 552.3 795.4 556.0 780.6 551.3C765.8 546.6 770.7 548.6 752.0 546.5C733.3 544.4 740.9 546.0 724.4 545.0C707.9 544.0 717.6 545.0 702.5 543.4C687.4 541.8 690.2 543.2 679.0 540.3C667.8 537.4 672.8 538.4 668.9 534.8C665.0 531.2 663.9 533.8 667.3 529.4Z"/></clipPath><clipPath id="cF"><path d="M590.0 593.4C588.7 584.5 589.2 586.0 592.3 574.7C595.4 563.4 592.9 565.8 599.4 559.4C605.9 553.0 597.4 557.1 611.9 555.5C626.4 553.9 622.2 554.4 643.0 554.7C663.8 555.0 656.6 554.5 674.4 556.3C692.2 558.1 686.9 556.9 696.3 560.0C705.7 563.1 700.4 561.9 702.5 565.5C704.6 569.1 706.7 566.7 702.5 570.8C698.3 574.9 699.4 572.9 690.0 577.8C680.6 582.7 687.4 579.3 674.4 585.6C661.4 591.9 666.6 590.1 651.0 596.6C635.4 603.1 641.6 601.6 627.5 605.0C613.4 608.4 619.2 607.9 608.8 606.7C598.4 605.5 602.6 605.7 596.3 601.3C590.0 596.9 591.3 602.3 590.0 593.4Z"/></clipPath><clipPath id="cG"><path d="M711.0 623.0C708.9 612.6 708.8 618.9 714.0 609.0C719.2 599.1 715.6 602.0 726.6 593.4C737.6 584.8 729.8 588.5 746.9 583.3C764.0 578.1 757.2 580.1 778.0 577.8C798.8 575.5 787.1 576.4 809.4 576.3C831.7 576.2 822.6 575.9 845.0 577.5C867.4 579.1 857.3 578.6 876.6 581.0C895.9 583.4 883.7 581.7 903.0 584.8C922.3 587.9 913.5 586.1 934.4 590.3C955.3 594.5 947.4 592.4 965.6 597.3C983.8 602.2 977.0 599.0 989.0 605.0C1001.0 611.0 996.4 608.2 1001.6 615.3C1006.8 622.4 1005.2 619.0 1004.7 626.3C1004.2 633.6 1007.8 630.4 1000.0 637.2C992.2 644.0 995.4 642.2 981.3 646.6C967.2 651.0 973.4 649.5 957.8 650.5C942.2 651.5 950.0 650.5 934.4 649.7C918.8 648.9 924.0 648.0 911.0 648.0C898.0 648.0 904.7 647.0 895.3 649.7C885.9 652.4 891.6 651.3 882.8 656.0C874.0 660.7 880.3 659.7 868.8 663.8C857.3 667.9 863.0 666.3 848.4 668.4C833.8 670.5 843.2 670.0 825.0 670.0C806.8 670.0 814.6 671.0 793.8 668.4C773.0 665.8 780.8 667.4 762.5 662.2C744.2 657.0 753.1 660.1 739.0 652.8C724.9 645.5 729.6 650.2 720.3 640.3C711.0 630.4 713.1 633.4 711.0 623.0Z"/></clipPath><clipPath id="cH"><path d="M449.4 657.5C450.4 651.2 448.3 653.7 455.6 648.0C462.9 642.3 458.3 645.0 471.3 640.3C484.3 635.6 476.5 637.4 494.7 634.0C512.9 630.6 502.5 632.1 525.9 630.0C549.3 627.9 541.5 629.0 565.0 627.8C588.5 626.6 572.9 627.3 596.3 626.3C619.7 625.3 609.3 625.1 635.3 624.7C661.3 624.3 651.0 624.2 674.4 625.0C697.8 625.8 683.7 624.0 705.6 627.0C727.5 630.0 718.5 626.3 740.0 634.0C761.5 641.7 755.2 634.9 770.0 650.0C784.8 665.1 780.6 664.4 784.4 679.4C788.2 694.4 786.0 685.6 781.3 695.0C776.6 704.4 781.8 699.7 770.3 707.5C758.8 715.3 760.7 712.7 746.9 718.4C733.1 724.1 742.8 721.4 729.0 724.5C715.2 727.6 721.2 727.2 705.6 727.8C690.0 728.4 697.8 728.9 682.2 726.3C666.6 723.7 674.4 724.7 658.8 720.0C643.2 715.3 650.9 717.4 635.3 712.2C619.7 707.0 630.1 709.6 611.9 704.4C593.7 699.2 601.4 701.3 580.6 696.6C559.8 691.9 570.3 694.5 549.4 690.3C528.5 686.1 538.8 687.6 518.0 684.0C497.2 680.4 503.6 682.5 486.9 679.4C470.2 676.3 479.5 678.9 468.0 674.7C456.5 670.5 458.7 672.6 452.5 666.9C446.3 661.2 448.4 663.8 449.4 657.5Z"/></clipPath><clipPath id="cI"><path d="M644.7 788.4C643.7 781.6 641.6 784.3 646.3 776.0C651.0 767.7 646.8 770.7 658.8 763.4C670.8 756.1 664.0 759.2 682.2 754.0C700.4 748.8 691.8 750.6 713.4 747.8C735.0 745.0 720.1 745.8 746.9 745.5C773.7 745.2 767.8 744.7 793.8 747.0C819.8 749.3 809.4 748.6 825.0 752.5C840.6 756.4 831.3 752.5 840.6 758.8C849.9 765.1 845.7 761.9 853.0 771.3C860.3 780.7 857.8 776.5 862.5 786.9C867.2 797.3 865.6 793.1 867.2 802.5C868.8 811.9 868.8 807.7 867.2 815.0C865.6 822.3 868.8 818.1 862.5 824.4C856.2 830.7 860.9 828.6 848.4 833.8C835.9 839.0 840.6 837.4 825.0 840.0C809.4 842.6 817.3 841.6 801.6 841.6C785.9 841.6 793.6 842.6 778.0 840.0C762.4 837.4 770.3 838.5 754.7 833.8C739.1 829.1 749.5 832.8 731.3 826.0C713.1 819.2 721.6 820.2 700.0 813.4C678.4 806.6 683.5 811.3 666.6 805.6C649.7 799.9 656.7 802.0 649.4 796.3C642.1 790.6 645.7 795.2 644.7 788.4Z"/></clipPath><clipPath id="cJ"><path d="M455.6 833.8C455.6 826.0 453.6 830.1 458.8 822.8C464.0 815.5 459.3 818.4 471.3 811.9C483.3 805.4 476.5 807.5 494.7 803.3C512.9 799.1 502.5 801.2 525.9 799.4C549.3 797.6 541.5 798.0 565.0 798.0C588.5 798.0 575.5 798.2 596.3 799.4C617.1 800.6 609.3 800.2 627.5 801.7C645.7 803.2 635.2 801.2 651.0 804.0C666.8 806.8 659.3 803.0 675.0 810.0C690.7 817.0 687.8 815.0 698.0 825.0C708.2 835.0 705.7 831.9 705.6 840.0C705.5 848.1 708.2 844.2 697.8 849.4C687.4 854.6 690.0 851.4 674.4 855.6C658.8 859.8 666.6 857.2 651.0 861.9C635.4 866.6 643.2 865.0 627.5 869.7C611.8 874.4 619.6 872.5 604.0 875.9C588.4 879.3 598.8 878.2 580.6 879.8C562.4 881.4 570.3 881.1 549.4 880.6C528.5 880.1 536.2 881.4 518.0 878.3C499.8 875.2 510.3 877.8 494.7 871.3C479.1 864.8 483.3 867.1 471.3 858.8C459.3 850.5 464.0 854.6 458.8 846.3C453.6 838.0 455.6 841.6 455.6 833.8Z"/></clipPath><clipPath id="cK"><path d="M702.0 836.0C699.1 830.0 689.7 831.3 699.0 822.0C708.3 812.7 703.0 815.3 730.0 808.0C757.0 800.7 746.7 806.0 780.0 800.0C813.3 794.0 802.0 794.3 830.0 790.0C858.0 785.7 844.8 787.0 864.0 787.0C883.2 787.0 869.2 787.2 887.5 790.0C905.8 792.8 898.0 791.3 918.8 795.5C939.6 799.7 931.8 798.1 950.0 802.5C968.2 806.9 959.3 803.6 973.4 808.8C987.5 814.0 982.8 811.3 992.2 818.0C1001.6 824.7 999.0 821.7 1001.6 829.0C1004.2 836.3 1004.2 833.7 1000.0 840.0C995.8 846.3 1000.5 843.1 989.0 847.8C977.5 852.5 983.8 851.1 965.6 854.0C947.4 856.9 955.3 855.1 934.4 856.4C913.5 857.7 921.2 856.7 903.0 858.0C884.8 859.3 895.3 858.0 879.7 860.3C864.1 862.6 871.9 861.9 856.3 865.0C840.7 868.1 848.4 867.1 832.8 869.7C817.2 872.3 825.0 871.8 809.4 872.8C793.8 873.8 801.6 873.8 786.0 872.8C770.4 871.8 778.2 873.3 762.5 869.7C746.8 866.1 753.6 868.7 739.0 861.9C724.4 855.1 729.2 856.7 718.8 849.4C708.4 842.1 713.4 844.5 707.8 840.0C702.2 835.5 704.9 842.0 702.0 836.0Z"/></clipPath></defs><rect x="607.4" y="879.0" width="3.3" height="5.5" fill="url(#pole)"/><rect x="838.1" y="876.0" width="3.3" height="26.5" fill="url(#pole)"/><rect x="762.4" y="880.0" width="3.3" height="27.0" fill="url(#pole)"/><rect x="950.0" y="864.0" width="3.3" height="33.0" fill="url(#pole)"/><rect x="965.1" y="858.0" width="3.3" height="8.0" fill="url(#pole)"/><path d="M455.6 833.8C455.6 826.0 453.6 830.1 458.8 822.8C464.0 815.5 459.3 818.4 471.3 811.9C483.3 805.4 476.5 807.5 494.7 803.3C512.9 799.1 502.5 801.2 525.9 799.4C549.3 797.6 541.5 798.0 565.0 798.0C588.5 798.0 575.5 798.2 596.3 799.4C617.1 800.6 609.3 800.2 627.5 801.7C645.7 803.2 635.2 801.2 651.0 804.0C666.8 806.8 659.3 803.0 675.0 810.0C690.7 817.0 687.8 815.0 698.0 825.0C708.2 835.0 705.7 831.9 705.6 840.0C705.5 848.1 708.2 844.2 697.8 849.4C687.4 854.6 690.0 851.4 674.4 855.6C658.8 859.8 666.6 857.2 651.0 861.9C635.4 866.6 643.2 865.0 627.5 869.7C611.8 874.4 619.6 872.5 604.0 875.9C588.4 879.3 598.8 878.2 580.6 879.8C562.4 881.4 570.3 881.1 549.4 880.6C528.5 880.1 536.2 881.4 518.0 878.3C499.8 875.2 510.3 877.8 494.7 871.3C479.1 864.8 483.3 867.1 471.3 858.8C459.3 850.5 464.0 854.6 458.8 846.3C453.6 838.0 455.6 841.6 455.6 833.8Z" transform="translate(0,7)" fill="url(#side)" stroke="#c8504a" stroke-width="0.9"/><g clip-path="url(#cJ)" transform="translate(0,7)"><g filter="url(#bl)" opacity=".75"><g fill="none" stroke-linejoin="round" stroke="#a26a32"><path d="M455 886L457 880L459 874L457 868L461 862L461 856L463 851L464 845L465 839L466 833L469 827L471 822L471 816L474 810L474 804L477 798L478 792" stroke-width="14.5"/><path d="M481 890L483 885L484 879L486 873L486 867L489 861L489 855L493 850L495 844L496 838L495 832L496 826L498 820L501 815L500 808L501 802L506 797L505 791" stroke-width="14.6"/><path d="M514 890L517 885L519 879L520 873L521 867L523 861L522 855L524 849L524 843L526 837L529 832L530 826L531 820L531 814L536 809L538 803L540 797L542 791" stroke-width="10.6"/><path d="M550 890L552 885L552 879L553 873L556 867L555 861L557 855L558 849L563 844L563 838L564 832L565 826L569 821L572 815L574 809L573 803L576 798L577 792" stroke-width="13.6"/><path d="M577 889L577 883L580 877L583 872L585 866L586 860L588 854L589 849L592 843L593 837L592 831L595 825L597 819L597 813L597 807L601 802L604 796L607 791" stroke-width="10.7"/><path d="M607 888L610 883L611 877L611 871L613 865L615 859L618 854L617 847L621 842L624 836L626 831L626 825L629 819L629 813L632 807L634 802L633 795L634 789" stroke-width="14.5"/><path d="M640 888L640 882L641 876L644 870L645 865L647 859L649 853L652 848L654 842L654 836L657 830L657 824L659 818L660 812L662 807L666 801L669 796L670 790" stroke-width="11.0"/><path d="M671 887L674 882L678 876L678 870L678 864L680 859L682 853L683 847L687 841L687 835L689 830L689 824L691 818L691 812L695 806L699 801L701 795L700 789" stroke-width="12.7"/><path d="M705 887L706 881L710 876L711 870L714 864L714 858L714 852" stroke-width="14.7"/></g><g fill="none" stroke-linejoin="round" stroke="#8d5020"><path d="M455 886L457 880L459 874L457 868L461 862L461 856L463 851L464 845L465 839L466 833L469 827L471 822L471 816L474 810L474 804L477 798L478 792" stroke-width="12.4"/><path d="M481 890L483 885L484 879L486 873L486 867L489 861L489 855L493 850L495 844L496 838L495 832L496 826L498 820L501 815L500 808L501 802L506 797L505 791" stroke-width="12.4"/><path d="M514 890L517 885L519 879L520 873L521 867L523 861L522 855L524 849L524 843L526 837L529 832L530 826L531 820L531 814L536 809L538 803L540 797L542 791" stroke-width="9.1"/><path d="M550 890L552 885L552 879L553 873L556 867L555 861L557 855L558 849L563 844L563 838L564 832L565 826L569 821L572 815L574 809L573 803L576 798L577 792" stroke-width="11.6"/><path d="M577 889L577 883L580 877L583 872L585 866L586 860L588 854L589 849L592 843L593 837L592 831L595 825L597 819L597 813L597 807L601 802L604 796L607 791" stroke-width="9.1"/><path d="M607 888L610 883L611 877L611 871L613 865L615 859L618 854L617 847L621 842L624 836L626 831L626 825L629 819L629 813L632 807L634 802L633 795L634 789" stroke-width="12.4"/><path d="M640 888L640 882L641 876L644 870L645 865L647 859L649 853L652 848L654 842L654 836L657 830L657 824L659 818L660 812L662 807L666 801L669 796L670 790" stroke-width="9.4"/><path d="M671 887L674 882L678 876L678 870L678 864L680 859L682 853L683 847L687 841L687 835L689 830L689 824L691 818L691 812L695 806L699 801L701 795L700 789" stroke-width="10.8"/><path d="M705 887L706 881L710 876L711 870L714 864L714 858L714 852" stroke-width="12.5"/></g><g fill="none" stroke-linejoin="round" stroke="#7a3e14"><path d="M455 886L457 880L459 874L457 868L461 862L461 856L463 851L464 845L465 839L466 833L469 827L471 822L471 816L474 810L474 804L477 798L478 792" stroke-width="10.2"/><path d="M481 890L483 885L484 879L486 873L486 867L489 861L489 855L493 850L495 844L496 838L495 832L496 826L498 820L501 815L500 808L501 802L506 797L505 791" stroke-width="10.2"/><path d="M514 890L517 885L519 879L520 873L521 867L523 861L522 855L524 849L524 843L526 837L529 832L530 826L531 820L531 814L536 809L538 803L540 797L542 791" stroke-width="7.4"/><path d="M550 890L552 885L552 879L553 873L556 867L555 861L557 855L558 849L563 844L563 838L564 832L565 826L569 821L572 815L574 809L573 803L576 798L577 792" stroke-width="9.5"/><path d="M577 889L577 883L580 877L583 872L585 866L586 860L588 854L589 849L592 843L593 837L592 831L595 825L597 819L597 813L597 807L601 802L604 796L607 791" stroke-width="7.5"/><path d="M607 888L610 883L611 877L611 871L613 865L615 859L618 854L617 847L621 842L624 836L626 831L626 825L629 819L629 813L632 807L634 802L633 795L634 789" stroke-width="10.1"/><path d="M640 888L640 882L641 876L644 870L645 865L647 859L649 853L652 848L654 842L654 836L657 830L657 824L659 818L660 812L662 807L666 801L669 796L670 790" stroke-width="7.7"/><path d="M671 887L674 882L678 876L678 870L678 864L680 859L682 853L683 847L687 841L687 835L689 830L689 824L691 818L691 812L695 806L699 801L701 795L700 789" stroke-width="8.8"/><path d="M705 887L706 881L710 876L711 870L714 864L714 858L714 852" stroke-width="10.3"/></g></g></g><path d="M455.6 833.8C455.6 826.0 453.6 830.1 458.8 822.8C464.0 815.5 459.3 818.4 471.3 811.9C483.3 805.4 476.5 807.5 494.7 803.3C512.9 799.1 502.5 801.2 525.9 799.4C549.3 797.6 541.5 798.0 565.0 798.0C588.5 798.0 575.5 798.2 596.3 799.4C617.1 800.6 609.3 800.2 627.5 801.7C645.7 803.2 635.2 801.2 651.0 804.0C666.8 806.8 659.3 803.0 675.0 810.0C690.7 817.0 687.8 815.0 698.0 825.0C708.2 835.0 705.7 831.9 705.6 840.0C705.5 848.1 708.2 844.2 697.8 849.4C687.4 854.6 690.0 851.4 674.4 855.6C658.8 859.8 666.6 857.2 651.0 861.9C635.4 866.6 643.2 865.0 627.5 869.7C611.8 874.4 619.6 872.5 604.0 875.9C588.4 879.3 598.8 878.2 580.6 879.8C562.4 881.4 570.3 881.1 549.4 880.6C528.5 880.1 536.2 881.4 518.0 878.3C499.8 875.2 510.3 877.8 494.7 871.3C479.1 864.8 483.3 867.1 471.3 858.8C459.3 850.5 464.0 854.6 458.8 846.3C453.6 838.0 455.6 841.6 455.6 833.8Z" transform="translate(0,1)" fill="none" stroke="url(#side)" stroke-width="2.2"/><path d="M455.6 833.8C455.6 826.0 453.6 830.1 458.8 822.8C464.0 815.5 459.3 818.4 471.3 811.9C483.3 805.4 476.5 807.5 494.7 803.3C512.9 799.1 502.5 801.2 525.9 799.4C549.3 797.6 541.5 798.0 565.0 798.0C588.5 798.0 575.5 798.2 596.3 799.4C617.1 800.6 609.3 800.2 627.5 801.7C645.7 803.2 635.2 801.2 651.0 804.0C666.8 806.8 659.3 803.0 675.0 810.0C690.7 817.0 687.8 815.0 698.0 825.0C708.2 835.0 705.7 831.9 705.6 840.0C705.5 848.1 708.2 844.2 697.8 849.4C687.4 854.6 690.0 851.4 674.4 855.6C658.8 859.8 666.6 857.2 651.0 861.9C635.4 866.6 643.2 865.0 627.5 869.7C611.8 874.4 619.6 872.5 604.0 875.9C588.4 879.3 598.8 878.2 580.6 879.8C562.4 881.4 570.3 881.1 549.4 880.6C528.5 880.1 536.2 881.4 518.0 878.3C499.8 875.2 510.3 877.8 494.7 871.3C479.1 864.8 483.3 867.1 471.3 858.8C459.3 850.5 464.0 854.6 458.8 846.3C453.6 838.0 455.6 841.6 455.6 833.8Z" transform="translate(0,3)" fill="none" stroke="url(#side)" stroke-width="2.2"/><path d="M455.6 833.8C455.6 826.0 453.6 830.1 458.8 822.8C464.0 815.5 459.3 818.4 471.3 811.9C483.3 805.4 476.5 807.5 494.7 803.3C512.9 799.1 502.5 801.2 525.9 799.4C549.3 797.6 541.5 798.0 565.0 798.0C588.5 798.0 575.5 798.2 596.3 799.4C617.1 800.6 609.3 800.2 627.5 801.7C645.7 803.2 635.2 801.2 651.0 804.0C666.8 806.8 659.3 803.0 675.0 810.0C690.7 817.0 687.8 815.0 698.0 825.0C708.2 835.0 705.7 831.9 705.6 840.0C705.5 848.1 708.2 844.2 697.8 849.4C687.4 854.6 690.0 851.4 674.4 855.6C658.8 859.8 666.6 857.2 651.0 861.9C635.4 866.6 643.2 865.0 627.5 869.7C611.8 874.4 619.6 872.5 604.0 875.9C588.4 879.3 598.8 878.2 580.6 879.8C562.4 881.4 570.3 881.1 549.4 880.6C528.5 880.1 536.2 881.4 518.0 878.3C499.8 875.2 510.3 877.8 494.7 871.3C479.1 864.8 483.3 867.1 471.3 858.8C459.3 850.5 464.0 854.6 458.8 846.3C453.6 838.0 455.6 841.6 455.6 833.8Z" transform="translate(0,5)" fill="none" stroke="url(#side)" stroke-width="2.2"/><path d="M455.6 833.8C455.6 826.0 453.6 830.1 458.8 822.8C464.0 815.5 459.3 818.4 471.3 811.9C483.3 805.4 476.5 807.5 494.7 803.3C512.9 799.1 502.5 801.2 525.9 799.4C549.3 797.6 541.5 798.0 565.0 798.0C588.5 798.0 575.5 798.2 596.3 799.4C617.1 800.6 609.3 800.2 627.5 801.7C645.7 803.2 635.2 801.2 651.0 804.0C666.8 806.8 659.3 803.0 675.0 810.0C690.7 817.0 687.8 815.0 698.0 825.0C708.2 835.0 705.7 831.9 705.6 840.0C705.5 848.1 708.2 844.2 697.8 849.4C687.4 854.6 690.0 851.4 674.4 855.6C658.8 859.8 666.6 857.2 651.0 861.9C635.4 866.6 643.2 865.0 627.5 869.7C611.8 874.4 619.6 872.5 604.0 875.9C588.4 879.3 598.8 878.2 580.6 879.8C562.4 881.4 570.3 881.1 549.4 880.6C528.5 880.1 536.2 881.4 518.0 878.3C499.8 875.2 510.3 877.8 494.7 871.3C479.1 864.8 483.3 867.1 471.3 858.8C459.3 850.5 464.0 854.6 458.8 846.3C453.6 838.0 455.6 841.6 455.6 833.8Z" fill="#958247"/><g clip-path="url(#cJ)"><g filter="url(#bl)"><g fill="none" stroke-linejoin="round" stroke="#a26a32"><path d="M455 886L457 880L459 874L457 868L461 862L461 856L463 851L464 845L465 839L466 833L469 827L471 822L471 816L474 810L474 804L477 798L478 792" stroke-width="14.5"/><path d="M481 890L483 885L484 879L486 873L486 867L489 861L489 855L493 850L495 844L496 838L495 832L496 826L498 820L501 815L500 808L501 802L506 797L505 791" stroke-width="14.6"/><path d="M514 890L517 885L519 879L520 873L521 867L523 861L522 855L524 849L524 843L526 837L529 832L530 826L531 820L531 814L536 809L538 803L540 797L542 791" stroke-width="10.6"/><path d="M550 890L552 885L552 879L553 873L556 867L555 861L557 855L558 849L563 844L563 838L564 832L565 826L569 821L572 815L574 809L573 803L576 798L577 792" stroke-width="13.6"/><path d="M577 889L577 883L580 877L583 872L585 866L586 860L588 854L589 849L592 843L593 837L592 831L595 825L597 819L597 813L597 807L601 802L604 796L607 791" stroke-width="10.7"/><path d="M607 888L610 883L611 877L611 871L613 865L615 859L618 854L617 847L621 842L624 836L626 831L626 825L629 819L629 813L632 807L634 802L633 795L634 789" stroke-width="14.5"/><path d="M640 888L640 882L641 876L644 870L645 865L647 859L649 853L652 848L654 842L654 836L657 830L657 824L659 818L660 812L662 807L666 801L669 796L670 790" stroke-width="11.0"/><path d="M671 887L674 882L678 876L678 870L678 864L680 859L682 853L683 847L687 841L687 835L689 830L689 824L691 818L691 812L695 806L699 801L701 795L700 789" stroke-width="12.7"/><path d="M705 887L706 881L710 876L711 870L714 864L714 858L714 852" stroke-width="14.7"/></g><g fill="none" stroke-linejoin="round" stroke="#8d5020"><path d="M455 886L457 880L459 874L457 868L461 862L461 856L463 851L464 845L465 839L466 833L469 827L471 822L471 816L474 810L474 804L477 798L478 792" stroke-width="12.4"/><path d="M481 890L483 885L484 879L486 873L486 867L489 861L489 855L493 850L495 844L496 838L495 832L496 826L498 820L501 815L500 808L501 802L506 797L505 791" stroke-width="12.4"/><path d="M514 890L517 885L519 879L520 873L521 867L523 861L522 855L524 849L524 843L526 837L529 832L530 826L531 820L531 814L536 809L538 803L540 797L542 791" stroke-width="9.1"/><path d="M550 890L552 885L552 879L553 873L556 867L555 861L557 855L558 849L563 844L563 838L564 832L565 826L569 821L572 815L574 809L573 803L576 798L577 792" stroke-width="11.6"/><path d="M577 889L577 883L580 877L583 872L585 866L586 860L588 854L589 849L592 843L593 837L592 831L595 825L597 819L597 813L597 807L601 802L604 796L607 791" stroke-width="9.1"/><path d="M607 888L610 883L611 877L611 871L613 865L615 859L618 854L617 847L621 842L624 836L626 831L626 825L629 819L629 813L632 807L634 802L633 795L634 789" stroke-width="12.4"/><path d="M640 888L640 882L641 876L644 870L645 865L647 859L649 853L652 848L654 842L654 836L657 830L657 824L659 818L660 812L662 807L666 801L669 796L670 790" stroke-width="9.4"/><path d="M671 887L674 882L678 876L678 870L678 864L680 859L682 853L683 847L687 841L687 835L689 830L689 824L691 818L691 812L695 806L699 801L701 795L700 789" stroke-width="10.8"/><path d="M705 887L706 881L710 876L711 870L714 864L714 858L714 852" stroke-width="12.5"/></g><g fill="none" stroke-linejoin="round" stroke="#7a3e14"><path d="M455 886L457 880L459 874L457 868L461 862L461 856L463 851L464 845L465 839L466 833L469 827L471 822L471 816L474 810L474 804L477 798L478 792" stroke-width="10.2"/><path d="M481 890L483 885L484 879L486 873L486 867L489 861L489 855L493 850L495 844L496 838L495 832L496 826L498 820L501 815L500 808L501 802L506 797L505 791" stroke-width="10.2"/><path d="M514 890L517 885L519 879L520 873L521 867L523 861L522 855L524 849L524 843L526 837L529 832L530 826L531 820L531 814L536 809L538 803L540 797L542 791" stroke-width="7.4"/><path d="M550 890L552 885L552 879L553 873L556 867L555 861L557 855L558 849L563 844L563 838L564 832L565 826L569 821L572 815L574 809L573 803L576 798L577 792" stroke-width="9.5"/><path d="M577 889L577 883L580 877L583 872L585 866L586 860L588 854L589 849L592 843L593 837L592 831L595 825L597 819L597 813L597 807L601 802L604 796L607 791" stroke-width="7.5"/><path d="M607 888L610 883L611 877L611 871L613 865L615 859L618 854L617 847L621 842L624 836L626 831L626 825L629 819L629 813L632 807L634 802L633 795L634 789" stroke-width="10.1"/><path d="M640 888L640 882L641 876L644 870L645 865L647 859L649 853L652 848L654 842L654 836L657 830L657 824L659 818L660 812L662 807L666 801L669 796L670 790" stroke-width="7.7"/><path d="M671 887L674 882L678 876L678 870L678 864L680 859L682 853L683 847L687 841L687 835L689 830L689 824L691 818L691 812L695 806L699 801L701 795L700 789" stroke-width="8.8"/><path d="M705 887L706 881L710 876L711 870L714 864L714 858L714 852" stroke-width="10.3"/></g></g><path d="M487.7 846.0L505.7 828.6" stroke="#4d4a1e" stroke-width="1.4" opacity=".85"/><path d="M609.0 855.6L652.9 814.7" stroke="#4d4a1e" stroke-width="1.4" opacity=".85"/></g><path d="M702.0 836.0C699.1 830.0 689.7 831.3 699.0 822.0C708.3 812.7 703.0 815.3 730.0 808.0C757.0 800.7 746.7 806.0 780.0 800.0C813.3 794.0 802.0 794.3 830.0 790.0C858.0 785.7 844.8 787.0 864.0 787.0C883.2 787.0 869.2 787.2 887.5 790.0C905.8 792.8 898.0 791.3 918.8 795.5C939.6 799.7 931.8 798.1 950.0 802.5C968.2 806.9 959.3 803.6 973.4 808.8C987.5 814.0 982.8 811.3 992.2 818.0C1001.6 824.7 999.0 821.7 1001.6 829.0C1004.2 836.3 1004.2 833.7 1000.0 840.0C995.8 846.3 1000.5 843.1 989.0 847.8C977.5 852.5 983.8 851.1 965.6 854.0C947.4 856.9 955.3 855.1 934.4 856.4C913.5 857.7 921.2 856.7 903.0 858.0C884.8 859.3 895.3 858.0 879.7 860.3C864.1 862.6 871.9 861.9 856.3 865.0C840.7 868.1 848.4 867.1 832.8 869.7C817.2 872.3 825.0 871.8 809.4 872.8C793.8 873.8 801.6 873.8 786.0 872.8C770.4 871.8 778.2 873.3 762.5 869.7C746.8 866.1 753.6 868.7 739.0 861.9C724.4 855.1 729.2 856.7 718.8 849.4C708.4 842.1 713.4 844.5 707.8 840.0C702.2 835.5 704.9 842.0 702.0 836.0Z" transform="translate(0,8)" fill="url(#side)" stroke="#c8504a" stroke-width="0.9"/><g clip-path="url(#cK)" transform="translate(0,8)"><g filter="url(#bl)" opacity=".75"><g fill="none" stroke-linejoin="round" stroke="#a26a32"><path d="M691 791L697 790L703 790L708 788L714 785L720 783L726 783L732 783L738 782L744 779L749 777" stroke-width="6.4"/><path d="M690 809L696 807L702 806L708 806L713 802L719 801L724 798L730 796L736 796L742 793L748 793L753 791L759 789L765 787L770 784L776 783L781 780L787 779L793 777" stroke-width="5.9"/><path d="M689 827L695 825L701 823L706 820L712 818L717 817L724 817L729 814L735 812L740 809L746 808L752 807L758 805L764 804L769 801L775 799L780 795L786 794L792 794L798 793L804 793L810 791L815 788L821 785L827 784L832 783L838 780L844 780L850 777" stroke-width="7.7"/><path d="M694 842L700 842L706 840L711 838L718 838L723 834L728 832L734 831L740 828L746 827L752 826L758 825L763 822L769 821L775 820L781 818L787 817L792 814L798 812L803 810L809 810L815 807L820 805L827 805L832 803L838 802L844 800L849 797L855 794L860 792L866 791L872 788L878 787L884 787L890 785L895 783L901 780L906 778L912 777L919 777" stroke-width="7.3"/><path d="M693 860L699 858L704 856L710 855L716 854L721 850L727 848L733 848L739 846L744 843L750 841L756 839L762 838L767 836L773 835L779 834L785 831L790 828L796 827L802 825L808 825L813 822L819 821L825 820L831 820L837 817L843 816L848 814L854 811L859 809L866 809L871 806L877 804L882 802L888 802L894 801L900 798L905 795L911 792L917 792L923 790L928 788L934 787L940 786L946 784L951 781L957 778" stroke-width="7.6"/><path d="M692 878L697 875L703 872L709 870L714 867L720 866L726 865L731 863L738 863L743 860L749 858L754 855L761 855L767 855L773 854L779 853L784 850L790 849L796 847L801 844L806 841L812 841L818 839L824 836L830 835L835 832L840 829L846 827L852 825L858 826L864 824L869 821L875 818L881 818L887 817L893 815L899 814L904 811L910 810L915 807L921 807L927 805L933 803L938 800L944 799L950 799L956 796L961 793L967 791L973 792L978 788L984 787L990 784L996 783L1001 781L1007 779" stroke-width="6.7"/><path d="M743 880L749 878L755 877L760 876L766 874L772 873L778 871L783 868L789 867L795 865L801 863L806 862L812 858L818 858L823 855L829 854L835 852L841 850L846 848L852 847L858 847L864 845L870 843L875 841L881 840L887 839L893 837L899 836L904 832L910 831L915 828L921 827L927 825L933 823L939 822L944 819L950 819L955 816L961 814L968 814L973 811L979 809L985 808L990 806L996 803L1001 801L1007 800" stroke-width="6.2"/><path d="M787 881L793 878L799 878L805 877L811 876L816 874L822 871L828 871L834 868L839 865L844 863L850 861L856 859L862 859L868 858L874 857L880 855L885 853L891 852L897 850L902 846L908 844L914 843L919 841L925 840L931 838L937 837L942 834L948 833L954 830L959 829L965 826L971 824L976 822L982 820L988 819L993 817L1000 817L1005 814L1011 812" stroke-width="7.2"/><path d="M856 880L862 880L868 879L874 877L880 875L885 874L891 873L897 870L902 867L908 866L913 863L919 860L924 858L931 857L936 856L942 855L948 852L953 849L958 846L964 845L971 845L976 842L982 841L987 838L993 835L999 835L1005 833L1011 832" stroke-width="7.1"/><path d="M894 882L900 881L906 881L912 879L918 878L924 876L929 874L935 872L941 872L947 870L952 867L958 866L963 862L969 860L975 858L980 856L986 855L992 854L998 853L1004 852L1009 848" stroke-width="6.5"/><path d="M963 882L969 880L974 876L980 875L985 873L992 872L997 870L1003 869L1009 867" stroke-width="7.1"/></g><g fill="none" stroke-linejoin="round" stroke="#8d5020"><path d="M691 791L697 790L703 790L708 788L714 785L720 783L726 783L732 783L738 782L744 779L749 777" stroke-width="5.5"/><path d="M690 809L696 807L702 806L708 806L713 802L719 801L724 798L730 796L736 796L742 793L748 793L753 791L759 789L765 787L770 784L776 783L781 780L787 779L793 777" stroke-width="5.1"/><path d="M689 827L695 825L701 823L706 820L712 818L717 817L724 817L729 814L735 812L740 809L746 808L752 807L758 805L764 804L769 801L775 799L780 795L786 794L792 794L798 793L804 793L810 791L815 788L821 785L827 784L832 783L838 780L844 780L850 777" stroke-width="6.6"/><path d="M694 842L700 842L706 840L711 838L718 838L723 834L728 832L734 831L740 828L746 827L752 826L758 825L763 822L769 821L775 820L781 818L787 817L792 814L798 812L803 810L809 810L815 807L820 805L827 805L832 803L838 802L844 800L849 797L855 794L860 792L866 791L872 788L878 787L884 787L890 785L895 783L901 780L906 778L912 777L919 777" stroke-width="6.2"/><path d="M693 860L699 858L704 856L710 855L716 854L721 850L727 848L733 848L739 846L744 843L750 841L756 839L762 838L767 836L773 835L779 834L785 831L790 828L796 827L802 825L808 825L813 822L819 821L825 820L831 820L837 817L843 816L848 814L854 811L859 809L866 809L871 806L877 804L882 802L888 802L894 801L900 798L905 795L911 792L917 792L923 790L928 788L934 787L940 786L946 784L951 781L957 778" stroke-width="6.5"/><path d="M692 878L697 875L703 872L709 870L714 867L720 866L726 865L731 863L738 863L743 860L749 858L754 855L761 855L767 855L773 854L779 853L784 850L790 849L796 847L801 844L806 841L812 841L818 839L824 836L830 835L835 832L840 829L846 827L852 825L858 826L864 824L869 821L875 818L881 818L887 817L893 815L899 814L904 811L910 810L915 807L921 807L927 805L933 803L938 800L944 799L950 799L956 796L961 793L967 791L973 792L978 788L984 787L990 784L996 783L1001 781L1007 779" stroke-width="5.7"/><path d="M743 880L749 878L755 877L760 876L766 874L772 873L778 871L783 868L789 867L795 865L801 863L806 862L812 858L818 858L823 855L829 854L835 852L841 850L846 848L852 847L858 847L864 845L870 843L875 841L881 840L887 839L893 837L899 836L904 832L910 831L915 828L921 827L927 825L933 823L939 822L944 819L950 819L955 816L961 814L968 814L973 811L979 809L985 808L990 806L996 803L1001 801L1007 800" stroke-width="5.3"/><path d="M787 881L793 878L799 878L805 877L811 876L816 874L822 871L828 871L834 868L839 865L844 863L850 861L856 859L862 859L868 858L874 857L880 855L885 853L891 852L897 850L902 846L908 844L914 843L919 841L925 840L931 838L937 837L942 834L948 833L954 830L959 829L965 826L971 824L976 822L982 820L988 819L993 817L1000 817L1005 814L1011 812" stroke-width="6.2"/><path d="M856 880L862 880L868 879L874 877L880 875L885 874L891 873L897 870L902 867L908 866L913 863L919 860L924 858L931 857L936 856L942 855L948 852L953 849L958 846L964 845L971 845L976 842L982 841L987 838L993 835L999 835L1005 833L1011 832" stroke-width="6.0"/><path d="M894 882L900 881L906 881L912 879L918 878L924 876L929 874L935 872L941 872L947 870L952 867L958 866L963 862L969 860L975 858L980 856L986 855L992 854L998 853L1004 852L1009 848" stroke-width="5.5"/><path d="M963 882L969 880L974 876L980 875L985 873L992 872L997 870L1003 869L1009 867" stroke-width="6.1"/></g><g fill="none" stroke-linejoin="round" stroke="#7a3e14"><path d="M691 791L697 790L703 790L708 788L714 785L720 783L726 783L732 783L738 782L744 779L749 777" stroke-width="4.5"/><path d="M690 809L696 807L702 806L708 806L713 802L719 801L724 798L730 796L736 796L742 793L748 793L753 791L759 789L765 787L770 784L776 783L781 780L787 779L793 777" stroke-width="4.1"/><path d="M689 827L695 825L701 823L706 820L712 818L717 817L724 817L729 814L735 812L740 809L746 808L752 807L758 805L764 804L769 801L775 799L780 795L786 794L792 794L798 793L804 793L810 791L815 788L821 785L827 784L832 783L838 780L844 780L850 777" stroke-width="5.4"/><path d="M694 842L700 842L706 840L711 838L718 838L723 834L728 832L734 831L740 828L746 827L752 826L758 825L763 822L769 821L775 820L781 818L787 817L792 814L798 812L803 810L809 810L815 807L820 805L827 805L832 803L838 802L844 800L849 797L855 794L860 792L866 791L872 788L878 787L884 787L890 785L895 783L901 780L906 778L912 777L919 777" stroke-width="5.1"/><path d="M693 860L699 858L704 856L710 855L716 854L721 850L727 848L733 848L739 846L744 843L750 841L756 839L762 838L767 836L773 835L779 834L785 831L790 828L796 827L802 825L808 825L813 822L819 821L825 820L831 820L837 817L843 816L848 814L854 811L859 809L866 809L871 806L877 804L882 802L888 802L894 801L900 798L905 795L911 792L917 792L923 790L928 788L934 787L940 786L946 784L951 781L957 778" stroke-width="5.3"/><path d="M692 878L697 875L703 872L709 870L714 867L720 866L726 865L731 863L738 863L743 860L749 858L754 855L761 855L767 855L773 854L779 853L784 850L790 849L796 847L801 844L806 841L812 841L818 839L824 836L830 835L835 832L840 829L846 827L852 825L858 826L864 824L869 821L875 818L881 818L887 817L893 815L899 814L904 811L910 810L915 807L921 807L927 805L933 803L938 800L944 799L950 799L956 796L961 793L967 791L973 792L978 788L984 787L990 784L996 783L1001 781L1007 779" stroke-width="4.7"/><path d="M743 880L749 878L755 877L760 876L766 874L772 873L778 871L783 868L789 867L795 865L801 863L806 862L812 858L818 858L823 855L829 854L835 852L841 850L846 848L852 847L858 847L864 845L870 843L875 841L881 840L887 839L893 837L899 836L904 832L910 831L915 828L921 827L927 825L933 823L939 822L944 819L950 819L955 816L961 814L968 814L973 811L979 809L985 808L990 806L996 803L1001 801L1007 800" stroke-width="4.3"/><path d="M787 881L793 878L799 878L805 877L811 876L816 874L822 871L828 871L834 868L839 865L844 863L850 861L856 859L862 859L868 858L874 857L880 855L885 853L891 852L897 850L902 846L908 844L914 843L919 841L925 840L931 838L937 837L942 834L948 833L954 830L959 829L965 826L971 824L976 822L982 820L988 819L993 817L1000 817L1005 814L1011 812" stroke-width="5.1"/><path d="M856 880L862 880L868 879L874 877L880 875L885 874L891 873L897 870L902 867L908 866L913 863L919 860L924 858L931 857L936 856L942 855L948 852L953 849L958 846L964 845L971 845L976 842L982 841L987 838L993 835L999 835L1005 833L1011 832" stroke-width="4.9"/><path d="M894 882L900 881L906 881L912 879L918 878L924 876L929 874L935 872L941 872L947 870L952 867L958 866L963 862L969 860L975 858L980 856L986 855L992 854L998 853L1004 852L1009 848" stroke-width="4.5"/><path d="M963 882L969 880L974 876L980 875L985 873L992 872L997 870L1003 869L1009 867" stroke-width="5.0"/></g></g></g><path d="M702.0 836.0C699.1 830.0 689.7 831.3 699.0 822.0C708.3 812.7 703.0 815.3 730.0 808.0C757.0 800.7 746.7 806.0 780.0 800.0C813.3 794.0 802.0 794.3 830.0 790.0C858.0 785.7 844.8 787.0 864.0 787.0C883.2 787.0 869.2 787.2 887.5 790.0C905.8 792.8 898.0 791.3 918.8 795.5C939.6 799.7 931.8 798.1 950.0 802.5C968.2 806.9 959.3 803.6 973.4 808.8C987.5 814.0 982.8 811.3 992.2 818.0C1001.6 824.7 999.0 821.7 1001.6 829.0C1004.2 836.3 1004.2 833.7 1000.0 840.0C995.8 846.3 1000.5 843.1 989.0 847.8C977.5 852.5 983.8 851.1 965.6 854.0C947.4 856.9 955.3 855.1 934.4 856.4C913.5 857.7 921.2 856.7 903.0 858.0C884.8 859.3 895.3 858.0 879.7 860.3C864.1 862.6 871.9 861.9 856.3 865.0C840.7 868.1 848.4 867.1 832.8 869.7C817.2 872.3 825.0 871.8 809.4 872.8C793.8 873.8 801.6 873.8 786.0 872.8C770.4 871.8 778.2 873.3 762.5 869.7C746.8 866.1 753.6 868.7 739.0 861.9C724.4 855.1 729.2 856.7 718.8 849.4C708.4 842.1 713.4 844.5 707.8 840.0C702.2 835.5 704.9 842.0 702.0 836.0Z" transform="translate(0,1)" fill="none" stroke="url(#side)" stroke-width="2.2"/><path d="M702.0 836.0C699.1 830.0 689.7 831.3 699.0 822.0C708.3 812.7 703.0 815.3 730.0 808.0C757.0 800.7 746.7 806.0 780.0 800.0C813.3 794.0 802.0 794.3 830.0 790.0C858.0 785.7 844.8 787.0 864.0 787.0C883.2 787.0 869.2 787.2 887.5 790.0C905.8 792.8 898.0 791.3 918.8 795.5C939.6 799.7 931.8 798.1 950.0 802.5C968.2 806.9 959.3 803.6 973.4 808.8C987.5 814.0 982.8 811.3 992.2 818.0C1001.6 824.7 999.0 821.7 1001.6 829.0C1004.2 836.3 1004.2 833.7 1000.0 840.0C995.8 846.3 1000.5 843.1 989.0 847.8C977.5 852.5 983.8 851.1 965.6 854.0C947.4 856.9 955.3 855.1 934.4 856.4C913.5 857.7 921.2 856.7 903.0 858.0C884.8 859.3 895.3 858.0 879.7 860.3C864.1 862.6 871.9 861.9 856.3 865.0C840.7 868.1 848.4 867.1 832.8 869.7C817.2 872.3 825.0 871.8 809.4 872.8C793.8 873.8 801.6 873.8 786.0 872.8C770.4 871.8 778.2 873.3 762.5 869.7C746.8 866.1 753.6 868.7 739.0 861.9C724.4 855.1 729.2 856.7 718.8 849.4C708.4 842.1 713.4 844.5 707.8 840.0C702.2 835.5 704.9 842.0 702.0 836.0Z" transform="translate(0,3)" fill="none" stroke="url(#side)" stroke-width="2.2"/><path d="M702.0 836.0C699.1 830.0 689.7 831.3 699.0 822.0C708.3 812.7 703.0 815.3 730.0 808.0C757.0 800.7 746.7 806.0 780.0 800.0C813.3 794.0 802.0 794.3 830.0 790.0C858.0 785.7 844.8 787.0 864.0 787.0C883.2 787.0 869.2 787.2 887.5 790.0C905.8 792.8 898.0 791.3 918.8 795.5C939.6 799.7 931.8 798.1 950.0 802.5C968.2 806.9 959.3 803.6 973.4 808.8C987.5 814.0 982.8 811.3 992.2 818.0C1001.6 824.7 999.0 821.7 1001.6 829.0C1004.2 836.3 1004.2 833.7 1000.0 840.0C995.8 846.3 1000.5 843.1 989.0 847.8C977.5 852.5 983.8 851.1 965.6 854.0C947.4 856.9 955.3 855.1 934.4 856.4C913.5 857.7 921.2 856.7 903.0 858.0C884.8 859.3 895.3 858.0 879.7 860.3C864.1 862.6 871.9 861.9 856.3 865.0C840.7 868.1 848.4 867.1 832.8 869.7C817.2 872.3 825.0 871.8 809.4 872.8C793.8 873.8 801.6 873.8 786.0 872.8C770.4 871.8 778.2 873.3 762.5 869.7C746.8 866.1 753.6 868.7 739.0 861.9C724.4 855.1 729.2 856.7 718.8 849.4C708.4 842.1 713.4 844.5 707.8 840.0C702.2 835.5 704.9 842.0 702.0 836.0Z" transform="translate(0,5)" fill="none" stroke="url(#side)" stroke-width="2.2"/><path d="M702.0 836.0C699.1 830.0 689.7 831.3 699.0 822.0C708.3 812.7 703.0 815.3 730.0 808.0C757.0 800.7 746.7 806.0 780.0 800.0C813.3 794.0 802.0 794.3 830.0 790.0C858.0 785.7 844.8 787.0 864.0 787.0C883.2 787.0 869.2 787.2 887.5 790.0C905.8 792.8 898.0 791.3 918.8 795.5C939.6 799.7 931.8 798.1 950.0 802.5C968.2 806.9 959.3 803.6 973.4 808.8C987.5 814.0 982.8 811.3 992.2 818.0C1001.6 824.7 999.0 821.7 1001.6 829.0C1004.2 836.3 1004.2 833.7 1000.0 840.0C995.8 846.3 1000.5 843.1 989.0 847.8C977.5 852.5 983.8 851.1 965.6 854.0C947.4 856.9 955.3 855.1 934.4 856.4C913.5 857.7 921.2 856.7 903.0 858.0C884.8 859.3 895.3 858.0 879.7 860.3C864.1 862.6 871.9 861.9 856.3 865.0C840.7 868.1 848.4 867.1 832.8 869.7C817.2 872.3 825.0 871.8 809.4 872.8C793.8 873.8 801.6 873.8 786.0 872.8C770.4 871.8 778.2 873.3 762.5 869.7C746.8 866.1 753.6 868.7 739.0 861.9C724.4 855.1 729.2 856.7 718.8 849.4C708.4 842.1 713.4 844.5 707.8 840.0C702.2 835.5 704.9 842.0 702.0 836.0Z" transform="translate(0,7)" fill="none" stroke="url(#side)" stroke-width="2.2"/><path d="M702.0 836.0C699.1 830.0 689.7 831.3 699.0 822.0C708.3 812.7 703.0 815.3 730.0 808.0C757.0 800.7 746.7 806.0 780.0 800.0C813.3 794.0 802.0 794.3 830.0 790.0C858.0 785.7 844.8 787.0 864.0 787.0C883.2 787.0 869.2 787.2 887.5 790.0C905.8 792.8 898.0 791.3 918.8 795.5C939.6 799.7 931.8 798.1 950.0 802.5C968.2 806.9 959.3 803.6 973.4 808.8C987.5 814.0 982.8 811.3 992.2 818.0C1001.6 824.7 999.0 821.7 1001.6 829.0C1004.2 836.3 1004.2 833.7 1000.0 840.0C995.8 846.3 1000.5 843.1 989.0 847.8C977.5 852.5 983.8 851.1 965.6 854.0C947.4 856.9 955.3 855.1 934.4 856.4C913.5 857.7 921.2 856.7 903.0 858.0C884.8 859.3 895.3 858.0 879.7 860.3C864.1 862.6 871.9 861.9 856.3 865.0C840.7 868.1 848.4 867.1 832.8 869.7C817.2 872.3 825.0 871.8 809.4 872.8C793.8 873.8 801.6 873.8 786.0 872.8C770.4 871.8 778.2 873.3 762.5 869.7C746.8 866.1 753.6 868.7 739.0 861.9C724.4 855.1 729.2 856.7 718.8 849.4C708.4 842.1 713.4 844.5 707.8 840.0C702.2 835.5 704.9 842.0 702.0 836.0Z" fill="#958247"/><g clip-path="url(#cK)"><g filter="url(#bl)"><g fill="none" stroke-linejoin="round" stroke="#a26a32"><path d="M691 791L697 790L703 790L708 788L714 785L720 783L726 783L732 783L738 782L744 779L749 777" stroke-width="6.4"/><path d="M690 809L696 807L702 806L708 806L713 802L719 801L724 798L730 796L736 796L742 793L748 793L753 791L759 789L765 787L770 784L776 783L781 780L787 779L793 777" stroke-width="5.9"/><path d="M689 827L695 825L701 823L706 820L712 818L717 817L724 817L729 814L735 812L740 809L746 808L752 807L758 805L764 804L769 801L775 799L780 795L786 794L792 794L798 793L804 793L810 791L815 788L821 785L827 784L832 783L838 780L844 780L850 777" stroke-width="7.7"/><path d="M694 842L700 842L706 840L711 838L718 838L723 834L728 832L734 831L740 828L746 827L752 826L758 825L763 822L769 821L775 820L781 818L787 817L792 814L798 812L803 810L809 810L815 807L820 805L827 805L832 803L838 802L844 800L849 797L855 794L860 792L866 791L872 788L878 787L884 787L890 785L895 783L901 780L906 778L912 777L919 777" stroke-width="7.3"/><path d="M693 860L699 858L704 856L710 855L716 854L721 850L727 848L733 848L739 846L744 843L750 841L756 839L762 838L767 836L773 835L779 834L785 831L790 828L796 827L802 825L808 825L813 822L819 821L825 820L831 820L837 817L843 816L848 814L854 811L859 809L866 809L871 806L877 804L882 802L888 802L894 801L900 798L905 795L911 792L917 792L923 790L928 788L934 787L940 786L946 784L951 781L957 778" stroke-width="7.6"/><path d="M692 878L697 875L703 872L709 870L714 867L720 866L726 865L731 863L738 863L743 860L749 858L754 855L761 855L767 855L773 854L779 853L784 850L790 849L796 847L801 844L806 841L812 841L818 839L824 836L830 835L835 832L840 829L846 827L852 825L858 826L864 824L869 821L875 818L881 818L887 817L893 815L899 814L904 811L910 810L915 807L921 807L927 805L933 803L938 800L944 799L950 799L956 796L961 793L967 791L973 792L978 788L984 787L990 784L996 783L1001 781L1007 779" stroke-width="6.7"/><path d="M743 880L749 878L755 877L760 876L766 874L772 873L778 871L783 868L789 867L795 865L801 863L806 862L812 858L818 858L823 855L829 854L835 852L841 850L846 848L852 847L858 847L864 845L870 843L875 841L881 840L887 839L893 837L899 836L904 832L910 831L915 828L921 827L927 825L933 823L939 822L944 819L950 819L955 816L961 814L968 814L973 811L979 809L985 808L990 806L996 803L1001 801L1007 800" stroke-width="6.2"/><path d="M787 881L793 878L799 878L805 877L811 876L816 874L822 871L828 871L834 868L839 865L844 863L850 861L856 859L862 859L868 858L874 857L880 855L885 853L891 852L897 850L902 846L908 844L914 843L919 841L925 840L931 838L937 837L942 834L948 833L954 830L959 829L965 826L971 824L976 822L982 820L988 819L993 817L1000 817L1005 814L1011 812" stroke-width="7.2"/><path d="M856 880L862 880L868 879L874 877L880 875L885 874L891 873L897 870L902 867L908 866L913 863L919 860L924 858L931 857L936 856L942 855L948 852L953 849L958 846L964 845L971 845L976 842L982 841L987 838L993 835L999 835L1005 833L1011 832" stroke-width="7.1"/><path d="M894 882L900 881L906 881L912 879L918 878L924 876L929 874L935 872L941 872L947 870L952 867L958 866L963 862L969 860L975 858L980 856L986 855L992 854L998 853L1004 852L1009 848" stroke-width="6.5"/><path d="M963 882L969 880L974 876L980 875L985 873L992 872L997 870L1003 869L1009 867" stroke-width="7.1"/></g><g fill="none" stroke-linejoin="round" stroke="#8d5020"><path d="M691 791L697 790L703 790L708 788L714 785L720 783L726 783L732 783L738 782L744 779L749 777" stroke-width="5.5"/><path d="M690 809L696 807L702 806L708 806L713 802L719 801L724 798L730 796L736 796L742 793L748 793L753 791L759 789L765 787L770 784L776 783L781 780L787 779L793 777" stroke-width="5.1"/><path d="M689 827L695 825L701 823L706 820L712 818L717 817L724 817L729 814L735 812L740 809L746 808L752 807L758 805L764 804L769 801L775 799L780 795L786 794L792 794L798 793L804 793L810 791L815 788L821 785L827 784L832 783L838 780L844 780L850 777" stroke-width="6.6"/><path d="M694 842L700 842L706 840L711 838L718 838L723 834L728 832L734 831L740 828L746 827L752 826L758 825L763 822L769 821L775 820L781 818L787 817L792 814L798 812L803 810L809 810L815 807L820 805L827 805L832 803L838 802L844 800L849 797L855 794L860 792L866 791L872 788L878 787L884 787L890 785L895 783L901 780L906 778L912 777L919 777" stroke-width="6.2"/><path d="M693 860L699 858L704 856L710 855L716 854L721 850L727 848L733 848L739 846L744 843L750 841L756 839L762 838L767 836L773 835L779 834L785 831L790 828L796 827L802 825L808 825L813 822L819 821L825 820L831 820L837 817L843 816L848 814L854 811L859 809L866 809L871 806L877 804L882 802L888 802L894 801L900 798L905 795L911 792L917 792L923 790L928 788L934 787L940 786L946 784L951 781L957 778" stroke-width="6.5"/><path d="M692 878L697 875L703 872L709 870L714 867L720 866L726 865L731 863L738 863L743 860L749 858L754 855L761 855L767 855L773 854L779 853L784 850L790 849L796 847L801 844L806 841L812 841L818 839L824 836L830 835L835 832L840 829L846 827L852 825L858 826L864 824L869 821L875 818L881 818L887 817L893 815L899 814L904 811L910 810L915 807L921 807L927 805L933 803L938 800L944 799L950 799L956 796L961 793L967 791L973 792L978 788L984 787L990 784L996 783L1001 781L1007 779" stroke-width="5.7"/><path d="M743 880L749 878L755 877L760 876L766 874L772 873L778 871L783 868L789 867L795 865L801 863L806 862L812 858L818 858L823 855L829 854L835 852L841 850L846 848L852 847L858 847L864 845L870 843L875 841L881 840L887 839L893 837L899 836L904 832L910 831L915 828L921 827L927 825L933 823L939 822L944 819L950 819L955 816L961 814L968 814L973 811L979 809L985 808L990 806L996 803L1001 801L1007 800" stroke-width="5.3"/><path d="M787 881L793 878L799 878L805 877L811 876L816 874L822 871L828 871L834 868L839 865L844 863L850 861L856 859L862 859L868 858L874 857L880 855L885 853L891 852L897 850L902 846L908 844L914 843L919 841L925 840L931 838L937 837L942 834L948 833L954 830L959 829L965 826L971 824L976 822L982 820L988 819L993 817L1000 817L1005 814L1011 812" stroke-width="6.2"/><path d="M856 880L862 880L868 879L874 877L880 875L885 874L891 873L897 870L902 867L908 866L913 863L919 860L924 858L931 857L936 856L942 855L948 852L953 849L958 846L964 845L971 845L976 842L982 841L987 838L993 835L999 835L1005 833L1011 832" stroke-width="6.0"/><path d="M894 882L900 881L906 881L912 879L918 878L924 876L929 874L935 872L941 872L947 870L952 867L958 866L963 862L969 860L975 858L980 856L986 855L992 854L998 853L1004 852L1009 848" stroke-width="5.5"/><path d="M963 882L969 880L974 876L980 875L985 873L992 872L997 870L1003 869L1009 867" stroke-width="6.1"/></g><g fill="none" stroke-linejoin="round" stroke="#7a3e14"><path d="M691 791L697 790L703 790L708 788L714 785L720 783L726 783L732 783L738 782L744 779L749 777" stroke-width="4.5"/><path d="M690 809L696 807L702 806L708 806L713 802L719 801L724 798L730 796L736 796L742 793L748 793L753 791L759 789L765 787L770 784L776 783L781 780L787 779L793 777" stroke-width="4.1"/><path d="M689 827L695 825L701 823L706 820L712 818L717 817L724 817L729 814L735 812L740 809L746 808L752 807L758 805L764 804L769 801L775 799L780 795L786 794L792 794L798 793L804 793L810 791L815 788L821 785L827 784L832 783L838 780L844 780L850 777" stroke-width="5.4"/><path d="M694 842L700 842L706 840L711 838L718 838L723 834L728 832L734 831L740 828L746 827L752 826L758 825L763 822L769 821L775 820L781 818L787 817L792 814L798 812L803 810L809 810L815 807L820 805L827 805L832 803L838 802L844 800L849 797L855 794L860 792L866 791L872 788L878 787L884 787L890 785L895 783L901 780L906 778L912 777L919 777" stroke-width="5.1"/><path d="M693 860L699 858L704 856L710 855L716 854L721 850L727 848L733 848L739 846L744 843L750 841L756 839L762 838L767 836L773 835L779 834L785 831L790 828L796 827L802 825L808 825L813 822L819 821L825 820L831 820L837 817L843 816L848 814L854 811L859 809L866 809L871 806L877 804L882 802L888 802L894 801L900 798L905 795L911 792L917 792L923 790L928 788L934 787L940 786L946 784L951 781L957 778" stroke-width="5.3"/><path d="M692 878L697 875L703 872L709 870L714 867L720 866L726 865L731 863L738 863L743 860L749 858L754 855L761 855L767 855L773 854L779 853L784 850L790 849L796 847L801 844L806 841L812 841L818 839L824 836L830 835L835 832L840 829L846 827L852 825L858 826L864 824L869 821L875 818L881 818L887 817L893 815L899 814L904 811L910 810L915 807L921 807L927 805L933 803L938 800L944 799L950 799L956 796L961 793L967 791L973 792L978 788L984 787L990 784L996 783L1001 781L1007 779" stroke-width="4.7"/><path d="M743 880L749 878L755 877L760 876L766 874L772 873L778 871L783 868L789 867L795 865L801 863L806 862L812 858L818 858L823 855L829 854L835 852L841 850L846 848L852 847L858 847L864 845L870 843L875 841L881 840L887 839L893 837L899 836L904 832L910 831L915 828L921 827L927 825L933 823L939 822L944 819L950 819L955 816L961 814L968 814L973 811L979 809L985 808L990 806L996 803L1001 801L1007 800" stroke-width="4.3"/><path d="M787 881L793 878L799 878L805 877L811 876L816 874L822 871L828 871L834 868L839 865L844 863L850 861L856 859L862 859L868 858L874 857L880 855L885 853L891 852L897 850L902 846L908 844L914 843L919 841L925 840L931 838L937 837L942 834L948 833L954 830L959 829L965 826L971 824L976 822L982 820L988 819L993 817L1000 817L1005 814L1011 812" stroke-width="5.1"/><path d="M856 880L862 880L868 879L874 877L880 875L885 874L891 873L897 870L902 867L908 866L913 863L919 860L924 858L931 857L936 856L942 855L948 852L953 849L958 846L964 845L971 845L976 842L982 841L987 838L993 835L999 835L1005 833L1011 832" stroke-width="4.9"/><path d="M894 882L900 881L906 881L912 879L918 878L924 876L929 874L935 872L941 872L947 870L952 867L958 866L963 862L969 860L975 858L980 856L986 855L992 854L998 853L1004 852L1009 848" stroke-width="4.5"/><path d="M963 882L969 880L974 876L980 875L985 873L992 872L997 870L1003 869L1009 867" stroke-width="5.0"/></g></g><path d="M644.7 788.4C643.7 781.6 641.6 784.3 646.3 776.0C651.0 767.7 646.8 770.7 658.8 763.4C670.8 756.1 664.0 759.2 682.2 754.0C700.4 748.8 691.8 750.6 713.4 747.8C735.0 745.0 720.1 745.8 746.9 745.5C773.7 745.2 767.8 744.7 793.8 747.0C819.8 749.3 809.4 748.6 825.0 752.5C840.6 756.4 831.3 752.5 840.6 758.8C849.9 765.1 845.7 761.9 853.0 771.3C860.3 780.7 857.8 776.5 862.5 786.9C867.2 797.3 865.6 793.1 867.2 802.5C868.8 811.9 868.8 807.7 867.2 815.0C865.6 822.3 868.8 818.1 862.5 824.4C856.2 830.7 860.9 828.6 848.4 833.8C835.9 839.0 840.6 837.4 825.0 840.0C809.4 842.6 817.3 841.6 801.6 841.6C785.9 841.6 793.6 842.6 778.0 840.0C762.4 837.4 770.3 838.5 754.7 833.8C739.1 829.1 749.5 832.8 731.3 826.0C713.1 819.2 721.6 820.2 700.0 813.4C678.4 806.6 683.5 811.3 666.6 805.6C649.7 799.9 656.7 802.0 649.4 796.3C642.1 790.6 645.7 795.2 644.7 788.4Z" transform="translate(14,15)" fill="#1c1505" opacity=".82" filter="url(#bs)"/><path d="M951.6 849.0L995.4 810.9" stroke="#4d4a1e" stroke-width="1.4" opacity=".85"/><path d="M966.7 816.6L985.3 799.9" stroke="#4d4a1e" stroke-width="1.4" opacity=".85"/></g><rect x="838.1" y="845.0" width="3.3" height="9.0" fill="url(#pole)"/><rect x="762.4" y="845.0" width="3.3" height="13.8" fill="url(#pole)"/><path d="M644.7 788.4C643.7 781.6 641.6 784.3 646.3 776.0C651.0 767.7 646.8 770.7 658.8 763.4C670.8 756.1 664.0 759.2 682.2 754.0C700.4 748.8 691.8 750.6 713.4 747.8C735.0 745.0 720.1 745.8 746.9 745.5C773.7 745.2 767.8 744.7 793.8 747.0C819.8 749.3 809.4 748.6 825.0 752.5C840.6 756.4 831.3 752.5 840.6 758.8C849.9 765.1 845.7 761.9 853.0 771.3C860.3 780.7 857.8 776.5 862.5 786.9C867.2 797.3 865.6 793.1 867.2 802.5C868.8 811.9 868.8 807.7 867.2 815.0C865.6 822.3 868.8 818.1 862.5 824.4C856.2 830.7 860.9 828.6 848.4 833.8C835.9 839.0 840.6 837.4 825.0 840.0C809.4 842.6 817.3 841.6 801.6 841.6C785.9 841.6 793.6 842.6 778.0 840.0C762.4 837.4 770.3 838.5 754.7 833.8C739.1 829.1 749.5 832.8 731.3 826.0C713.1 819.2 721.6 820.2 700.0 813.4C678.4 806.6 683.5 811.3 666.6 805.6C649.7 799.9 656.7 802.0 649.4 796.3C642.1 790.6 645.7 795.2 644.7 788.4Z" transform="translate(0,8)" fill="url(#side)" stroke="#c8504a" stroke-width="0.9"/><g clip-path="url(#cI)" transform="translate(0,8)"><g filter="url(#bl)" opacity=".75"><g fill="none" stroke-linejoin="round" stroke="#a26a32"><path d="M638 751L644 750L650 750L656 749L662 748L667 744L673 742L679 740L685 740L691 740L697 737L703 737" stroke-width="7.4"/><path d="M635 765L641 763L647 762L653 761L659 761L665 761L671 760L677 757L683 757L688 755L694 752L700 750L706 749L711 748L717 747L723 746L729 746L735 745L741 745L747 743L753 741L759 740L764 737L770 736" stroke-width="5.3"/><path d="M638 778L644 776L650 777L656 775L662 772L668 772L673 770L679 769L685 769L691 768L697 764L703 763L709 763L715 762L720 760L726 758L732 757L738 756L743 753L750 753L755 750L761 750L767 748L773 747L778 745L785 745L791 745L796 741L802 742L808 739L814 737L819 736" stroke-width="5.9"/><path d="M636 795L642 792L647 791L653 789L659 787L665 788L671 788L677 787L683 785L689 784L695 782L700 780L706 777L712 776L718 776L724 775L729 773L735 772L741 769L747 768L753 766L759 766L765 765L770 764L776 760L782 760L788 760L794 757L800 758L805 755L811 753L817 751L823 752L829 751L835 748L841 749L846 746L852 745L858 744L864 743L870 742L876 740" stroke-width="6.0"/><path d="M638 805L644 803L650 802L656 803L662 801L668 798L674 798L679 796L685 796L692 795L697 794L703 793L709 791L715 789L720 787L726 785L732 784L738 783L744 782L750 781L756 781L762 779L768 778L773 775L779 772L785 773L791 773L797 771L802 769L808 768L814 767L820 764L825 761L831 760L837 760L843 757L849 757L855 755L861 755L866 751L872 750" stroke-width="5.6"/><path d="M636 821L642 820L648 818L654 819L659 817L665 816L671 813L677 812L683 811L689 810L694 807L700 807L706 805L712 804L718 802L724 802L729 800L736 800L741 797L748 798L753 796L759 795L765 794L771 793L777 791L782 789L788 788L794 785L800 784L805 781L811 781L817 779L823 778L829 777L835 776L841 774L846 773L852 771L858 770L864 767L870 766L876 767" stroke-width="6.4"/><path d="M638 832L644 831L650 830L656 829L662 827L668 826L674 825L680 825L686 824L691 821L697 821L703 820L709 819L715 816L721 815L727 814L733 813L738 811L744 808L750 807L755 804L761 803L767 804L773 802L779 800L785 800L791 799L797 798L802 796L808 795L814 794L821 794L826 792L832 789L838 788L844 787L849 786L855 785L861 782L866 779L872 778" stroke-width="6.8"/><path d="M636 846L641 844L647 843L653 843L659 842L665 840L671 838L676 836L683 837L688 835L694 833L700 832L706 831L712 832L718 829L723 827L729 825L735 823L741 822L747 822L753 820L759 819L765 819L770 816L776 814L782 814L788 812L794 812L800 811L805 808L811 806L817 805L823 805L829 804L835 802L841 801L846 799L852 799L858 797L864 794L870 794L876 793" stroke-width="6.8"/><path d="M686 851L692 850L697 847L704 847L710 847L715 844L721 844L727 844L733 841L739 842L745 839L750 836L756 837L762 836L768 834L774 831L780 830L785 828L791 826L797 825L803 823L809 824L815 823L820 820L826 819L832 818L838 816L844 816L850 815L855 811L861 811L867 808L873 808" stroke-width="5.9"/><path d="M741 851L747 851L753 848L759 848L765 845L771 845L776 842L782 841L788 840L794 838L800 838L806 836L811 834L818 835L824 834L829 831L835 829L840 827L846 826L853 826L858 825L864 822L870 821L876 821" stroke-width="7.1"/><path d="M809 851L815 851L821 849L827 847L832 845L839 845L844 844L850 842L856 841L862 841L868 839L874 837" stroke-width="5.1"/></g><g fill="none" stroke-linejoin="round" stroke="#8d5020"><path d="M638 751L644 750L650 750L656 749L662 748L667 744L673 742L679 740L685 740L691 740L697 737L703 737" stroke-width="6.3"/><path d="M635 765L641 763L647 762L653 761L659 761L665 761L671 760L677 757L683 757L688 755L694 752L700 750L706 749L711 748L717 747L723 746L729 746L735 745L741 745L747 743L753 741L759 740L764 737L770 736" stroke-width="4.5"/><path d="M638 778L644 776L650 777L656 775L662 772L668 772L673 770L679 769L685 769L691 768L697 764L703 763L709 763L715 762L720 760L726 758L732 757L738 756L743 753L750 753L755 750L761 750L767 748L773 747L778 745L785 745L791 745L796 741L802 742L808 739L814 737L819 736" stroke-width="5.0"/><path d="M636 795L642 792L647 791L653 789L659 787L665 788L671 788L677 787L683 785L689 784L695 782L700 780L706 777L712 776L718 776L724 775L729 773L735 772L741 769L747 768L753 766L759 766L765 765L770 764L776 760L782 760L788 760L794 757L800 758L805 755L811 753L817 751L823 752L829 751L835 748L841 749L846 746L852 745L858 744L864 743L870 742L876 740" stroke-width="5.1"/><path d="M638 805L644 803L650 802L656 803L662 801L668 798L674 798L679 796L685 796L692 795L697 794L703 793L709 791L715 789L720 787L726 785L732 784L738 783L744 782L750 781L756 781L762 779L768 778L773 775L779 772L785 773L791 773L797 771L802 769L808 768L814 767L820 764L825 761L831 760L837 760L843 757L849 757L855 755L861 755L866 751L872 750" stroke-width="4.7"/><path d="M636 821L642 820L648 818L654 819L659 817L665 816L671 813L677 812L683 811L689 810L694 807L700 807L706 805L712 804L718 802L724 802L729 800L736 800L741 797L748 798L753 796L759 795L765 794L771 793L777 791L782 789L788 788L794 785L800 784L805 781L811 781L817 779L823 778L829 777L835 776L841 774L846 773L852 771L858 770L864 767L870 766L876 767" stroke-width="5.4"/><path d="M638 832L644 831L650 830L656 829L662 827L668 826L674 825L680 825L686 824L691 821L697 821L703 820L709 819L715 816L721 815L727 814L733 813L738 811L744 808L750 807L755 804L761 803L767 804L773 802L779 800L785 800L791 799L797 798L802 796L808 795L814 794L821 794L826 792L832 789L838 788L844 787L849 786L855 785L861 782L866 779L872 778" stroke-width="5.8"/><path d="M636 846L641 844L647 843L653 843L659 842L665 840L671 838L676 836L683 837L688 835L694 833L700 832L706 831L712 832L718 829L723 827L729 825L735 823L741 822L747 822L753 820L759 819L765 819L770 816L776 814L782 814L788 812L794 812L800 811L805 808L811 806L817 805L823 805L829 804L835 802L841 801L846 799L852 799L858 797L864 794L870 794L876 793" stroke-width="5.8"/><path d="M686 851L692 850L697 847L704 847L710 847L715 844L721 844L727 844L733 841L739 842L745 839L750 836L756 837L762 836L768 834L774 831L780 830L785 828L791 826L797 825L803 823L809 824L815 823L820 820L826 819L832 818L838 816L844 816L850 815L855 811L861 811L867 808L873 808" stroke-width="5.0"/><path d="M741 851L747 851L753 848L759 848L765 845L771 845L776 842L782 841L788 840L794 838L800 838L806 836L811 834L818 835L824 834L829 831L835 829L840 827L846 826L853 826L858 825L864 822L870 821L876 821" stroke-width="6.1"/><path d="M809 851L815 851L821 849L827 847L832 845L839 845L844 844L850 842L856 841L862 841L868 839L874 837" stroke-width="4.4"/></g><g fill="none" stroke-linejoin="round" stroke="#7a3e14"><path d="M638 751L644 750L650 750L656 749L662 748L667 744L673 742L679 740L685 740L691 740L697 737L703 737" stroke-width="5.2"/><path d="M635 765L641 763L647 762L653 761L659 761L665 761L671 760L677 757L683 757L688 755L694 752L700 750L706 749L711 748L717 747L723 746L729 746L735 745L741 745L747 743L753 741L759 740L764 737L770 736" stroke-width="3.7"/><path d="M638 778L644 776L650 777L656 775L662 772L668 772L673 770L679 769L685 769L691 768L697 764L703 763L709 763L715 762L720 760L726 758L732 757L738 756L743 753L750 753L755 750L761 750L767 748L773 747L778 745L785 745L791 745L796 741L802 742L808 739L814 737L819 736" stroke-width="4.1"/><path d="M636 795L642 792L647 791L653 789L659 787L665 788L671 788L677 787L683 785L689 784L695 782L700 780L706 777L712 776L718 776L724 775L729 773L735 772L741 769L747 768L753 766L759 766L765 765L770 764L776 760L782 760L788 760L794 757L800 758L805 755L811 753L817 751L823 752L829 751L835 748L841 749L846 746L852 745L858 744L864 743L870 742L876 740" stroke-width="4.2"/><path d="M638 805L644 803L650 802L656 803L662 801L668 798L674 798L679 796L685 796L692 795L697 794L703 793L709 791L715 789L720 787L726 785L732 784L738 783L744 782L750 781L756 781L762 779L768 778L773 775L779 772L785 773L791 773L797 771L802 769L808 768L814 767L820 764L825 761L831 760L837 760L843 757L849 757L855 755L861 755L866 751L872 750" stroke-width="3.9"/><path d="M636 821L642 820L648 818L654 819L659 817L665 816L671 813L677 812L683 811L689 810L694 807L700 807L706 805L712 804L718 802L724 802L729 800L736 800L741 797L748 798L753 796L759 795L765 794L771 793L777 791L782 789L788 788L794 785L800 784L805 781L811 781L817 779L823 778L829 777L835 776L841 774L846 773L852 771L858 770L864 767L870 766L876 767" stroke-width="4.4"/><path d="M638 832L644 831L650 830L656 829L662 827L668 826L674 825L680 825L686 824L691 821L697 821L703 820L709 819L715 816L721 815L727 814L733 813L738 811L744 808L750 807L755 804L761 803L767 804L773 802L779 800L785 800L791 799L797 798L802 796L808 795L814 794L821 794L826 792L832 789L838 788L844 787L849 786L855 785L861 782L866 779L872 778" stroke-width="4.8"/><path d="M636 846L641 844L647 843L653 843L659 842L665 840L671 838L676 836L683 837L688 835L694 833L700 832L706 831L712 832L718 829L723 827L729 825L735 823L741 822L747 822L753 820L759 819L765 819L770 816L776 814L782 814L788 812L794 812L800 811L805 808L811 806L817 805L823 805L829 804L835 802L841 801L846 799L852 799L858 797L864 794L870 794L876 793" stroke-width="4.7"/><path d="M686 851L692 850L697 847L704 847L710 847L715 844L721 844L727 844L733 841L739 842L745 839L750 836L756 837L762 836L768 834L774 831L780 830L785 828L791 826L797 825L803 823L809 824L815 823L820 820L826 819L832 818L838 816L844 816L850 815L855 811L861 811L867 808L873 808" stroke-width="4.1"/><path d="M741 851L747 851L753 848L759 848L765 845L771 845L776 842L782 841L788 840L794 838L800 838L806 836L811 834L818 835L824 834L829 831L835 829L840 827L846 826L853 826L858 825L864 822L870 821L876 821" stroke-width="5.0"/><path d="M809 851L815 851L821 849L827 847L832 845L839 845L844 844L850 842L856 841L862 841L868 839L874 837" stroke-width="3.6"/></g></g></g><path d="M644.7 788.4C643.7 781.6 641.6 784.3 646.3 776.0C651.0 767.7 646.8 770.7 658.8 763.4C670.8 756.1 664.0 759.2 682.2 754.0C700.4 748.8 691.8 750.6 713.4 747.8C735.0 745.0 720.1 745.8 746.9 745.5C773.7 745.2 767.8 744.7 793.8 747.0C819.8 749.3 809.4 748.6 825.0 752.5C840.6 756.4 831.3 752.5 840.6 758.8C849.9 765.1 845.7 761.9 853.0 771.3C860.3 780.7 857.8 776.5 862.5 786.9C867.2 797.3 865.6 793.1 867.2 802.5C868.8 811.9 868.8 807.7 867.2 815.0C865.6 822.3 868.8 818.1 862.5 824.4C856.2 830.7 860.9 828.6 848.4 833.8C835.9 839.0 840.6 837.4 825.0 840.0C809.4 842.6 817.3 841.6 801.6 841.6C785.9 841.6 793.6 842.6 778.0 840.0C762.4 837.4 770.3 838.5 754.7 833.8C739.1 829.1 749.5 832.8 731.3 826.0C713.1 819.2 721.6 820.2 700.0 813.4C678.4 806.6 683.5 811.3 666.6 805.6C649.7 799.9 656.7 802.0 649.4 796.3C642.1 790.6 645.7 795.2 644.7 788.4Z" transform="translate(0,1)" fill="none" stroke="url(#side)" stroke-width="2.2"/><path d="M644.7 788.4C643.7 781.6 641.6 784.3 646.3 776.0C651.0 767.7 646.8 770.7 658.8 763.4C670.8 756.1 664.0 759.2 682.2 754.0C700.4 748.8 691.8 750.6 713.4 747.8C735.0 745.0 720.1 745.8 746.9 745.5C773.7 745.2 767.8 744.7 793.8 747.0C819.8 749.3 809.4 748.6 825.0 752.5C840.6 756.4 831.3 752.5 840.6 758.8C849.9 765.1 845.7 761.9 853.0 771.3C860.3 780.7 857.8 776.5 862.5 786.9C867.2 797.3 865.6 793.1 867.2 802.5C868.8 811.9 868.8 807.7 867.2 815.0C865.6 822.3 868.8 818.1 862.5 824.4C856.2 830.7 860.9 828.6 848.4 833.8C835.9 839.0 840.6 837.4 825.0 840.0C809.4 842.6 817.3 841.6 801.6 841.6C785.9 841.6 793.6 842.6 778.0 840.0C762.4 837.4 770.3 838.5 754.7 833.8C739.1 829.1 749.5 832.8 731.3 826.0C713.1 819.2 721.6 820.2 700.0 813.4C678.4 806.6 683.5 811.3 666.6 805.6C649.7 799.9 656.7 802.0 649.4 796.3C642.1 790.6 645.7 795.2 644.7 788.4Z" transform="translate(0,3)" fill="none" stroke="url(#side)" stroke-width="2.2"/><path d="M644.7 788.4C643.7 781.6 641.6 784.3 646.3 776.0C651.0 767.7 646.8 770.7 658.8 763.4C670.8 756.1 664.0 759.2 682.2 754.0C700.4 748.8 691.8 750.6 713.4 747.8C735.0 745.0 720.1 745.8 746.9 745.5C773.7 745.2 767.8 744.7 793.8 747.0C819.8 749.3 809.4 748.6 825.0 752.5C840.6 756.4 831.3 752.5 840.6 758.8C849.9 765.1 845.7 761.9 853.0 771.3C860.3 780.7 857.8 776.5 862.5 786.9C867.2 797.3 865.6 793.1 867.2 802.5C868.8 811.9 868.8 807.7 867.2 815.0C865.6 822.3 868.8 818.1 862.5 824.4C856.2 830.7 860.9 828.6 848.4 833.8C835.9 839.0 840.6 837.4 825.0 840.0C809.4 842.6 817.3 841.6 801.6 841.6C785.9 841.6 793.6 842.6 778.0 840.0C762.4 837.4 770.3 838.5 754.7 833.8C739.1 829.1 749.5 832.8 731.3 826.0C713.1 819.2 721.6 820.2 700.0 813.4C678.4 806.6 683.5 811.3 666.6 805.6C649.7 799.9 656.7 802.0 649.4 796.3C642.1 790.6 645.7 795.2 644.7 788.4Z" transform="translate(0,5)" fill="none" stroke="url(#side)" stroke-width="2.2"/><path d="M644.7 788.4C643.7 781.6 641.6 784.3 646.3 776.0C651.0 767.7 646.8 770.7 658.8 763.4C670.8 756.1 664.0 759.2 682.2 754.0C700.4 748.8 691.8 750.6 713.4 747.8C735.0 745.0 720.1 745.8 746.9 745.5C773.7 745.2 767.8 744.7 793.8 747.0C819.8 749.3 809.4 748.6 825.0 752.5C840.6 756.4 831.3 752.5 840.6 758.8C849.9 765.1 845.7 761.9 853.0 771.3C860.3 780.7 857.8 776.5 862.5 786.9C867.2 797.3 865.6 793.1 867.2 802.5C868.8 811.9 868.8 807.7 867.2 815.0C865.6 822.3 868.8 818.1 862.5 824.4C856.2 830.7 860.9 828.6 848.4 833.8C835.9 839.0 840.6 837.4 825.0 840.0C809.4 842.6 817.3 841.6 801.6 841.6C785.9 841.6 793.6 842.6 778.0 840.0C762.4 837.4 770.3 838.5 754.7 833.8C739.1 829.1 749.5 832.8 731.3 826.0C713.1 819.2 721.6 820.2 700.0 813.4C678.4 806.6 683.5 811.3 666.6 805.6C649.7 799.9 656.7 802.0 649.4 796.3C642.1 790.6 645.7 795.2 644.7 788.4Z" transform="translate(0,7)" fill="none" stroke="url(#side)" stroke-width="2.2"/><path d="M644.7 788.4C643.7 781.6 641.6 784.3 646.3 776.0C651.0 767.7 646.8 770.7 658.8 763.4C670.8 756.1 664.0 759.2 682.2 754.0C700.4 748.8 691.8 750.6 713.4 747.8C735.0 745.0 720.1 745.8 746.9 745.5C773.7 745.2 767.8 744.7 793.8 747.0C819.8 749.3 809.4 748.6 825.0 752.5C840.6 756.4 831.3 752.5 840.6 758.8C849.9 765.1 845.7 761.9 853.0 771.3C860.3 780.7 857.8 776.5 862.5 786.9C867.2 797.3 865.6 793.1 867.2 802.5C868.8 811.9 868.8 807.7 867.2 815.0C865.6 822.3 868.8 818.1 862.5 824.4C856.2 830.7 860.9 828.6 848.4 833.8C835.9 839.0 840.6 837.4 825.0 840.0C809.4 842.6 817.3 841.6 801.6 841.6C785.9 841.6 793.6 842.6 778.0 840.0C762.4 837.4 770.3 838.5 754.7 833.8C739.1 829.1 749.5 832.8 731.3 826.0C713.1 819.2 721.6 820.2 700.0 813.4C678.4 806.6 683.5 811.3 666.6 805.6C649.7 799.9 656.7 802.0 649.4 796.3C642.1 790.6 645.7 795.2 644.7 788.4Z" fill="#958247"/><g clip-path="url(#cI)"><g filter="url(#bl)"><g fill="none" stroke-linejoin="round" stroke="#a26a32"><path d="M638 751L644 750L650 750L656 749L662 748L667 744L673 742L679 740L685 740L691 740L697 737L703 737" stroke-width="7.4"/><path d="M635 765L641 763L647 762L653 761L659 761L665 761L671 760L677 757L683 757L688 755L694 752L700 750L706 749L711 748L717 747L723 746L729 746L735 745L741 745L747 743L753 741L759 740L764 737L770 736" stroke-width="5.3"/><path d="M638 778L644 776L650 777L656 775L662 772L668 772L673 770L679 769L685 769L691 768L697 764L703 763L709 763L715 762L720 760L726 758L732 757L738 756L743 753L750 753L755 750L761 750L767 748L773 747L778 745L785 745L791 745L796 741L802 742L808 739L814 737L819 736" stroke-width="5.9"/><path d="M636 795L642 792L647 791L653 789L659 787L665 788L671 788L677 787L683 785L689 784L695 782L700 780L706 777L712 776L718 776L724 775L729 773L735 772L741 769L747 768L753 766L759 766L765 765L770 764L776 760L782 760L788 760L794 757L800 758L805 755L811 753L817 751L823 752L829 751L835 748L841 749L846 746L852 745L858 744L864 743L870 742L876 740" stroke-width="6.0"/><path d="M638 805L644 803L650 802L656 803L662 801L668 798L674 798L679 796L685 796L692 795L697 794L703 793L709 791L715 789L720 787L726 785L732 784L738 783L744 782L750 781L756 781L762 779L768 778L773 775L779 772L785 773L791 773L797 771L802 769L808 768L814 767L820 764L825 761L831 760L837 760L843 757L849 757L855 755L861 755L866 751L872 750" stroke-width="5.6"/><path d="M636 821L642 820L648 818L654 819L659 817L665 816L671 813L677 812L683 811L689 810L694 807L700 807L706 805L712 804L718 802L724 802L729 800L736 800L741 797L748 798L753 796L759 795L765 794L771 793L777 791L782 789L788 788L794 785L800 784L805 781L811 781L817 779L823 778L829 777L835 776L841 774L846 773L852 771L858 770L864 767L870 766L876 767" stroke-width="6.4"/><path d="M638 832L644 831L650 830L656 829L662 827L668 826L674 825L680 825L686 824L691 821L697 821L703 820L709 819L715 816L721 815L727 814L733 813L738 811L744 808L750 807L755 804L761 803L767 804L773 802L779 800L785 800L791 799L797 798L802 796L808 795L814 794L821 794L826 792L832 789L838 788L844 787L849 786L855 785L861 782L866 779L872 778" stroke-width="6.8"/><path d="M636 846L641 844L647 843L653 843L659 842L665 840L671 838L676 836L683 837L688 835L694 833L700 832L706 831L712 832L718 829L723 827L729 825L735 823L741 822L747 822L753 820L759 819L765 819L770 816L776 814L782 814L788 812L794 812L800 811L805 808L811 806L817 805L823 805L829 804L835 802L841 801L846 799L852 799L858 797L864 794L870 794L876 793" stroke-width="6.8"/><path d="M686 851L692 850L697 847L704 847L710 847L715 844L721 844L727 844L733 841L739 842L745 839L750 836L756 837L762 836L768 834L774 831L780 830L785 828L791 826L797 825L803 823L809 824L815 823L820 820L826 819L832 818L838 816L844 816L850 815L855 811L861 811L867 808L873 808" stroke-width="5.9"/><path d="M741 851L747 851L753 848L759 848L765 845L771 845L776 842L782 841L788 840L794 838L800 838L806 836L811 834L818 835L824 834L829 831L835 829L840 827L846 826L853 826L858 825L864 822L870 821L876 821" stroke-width="7.1"/><path d="M809 851L815 851L821 849L827 847L832 845L839 845L844 844L850 842L856 841L862 841L868 839L874 837" stroke-width="5.1"/></g><g fill="none" stroke-linejoin="round" stroke="#8d5020"><path d="M638 751L644 750L650 750L656 749L662 748L667 744L673 742L679 740L685 740L691 740L697 737L703 737" stroke-width="6.3"/><path d="M635 765L641 763L647 762L653 761L659 761L665 761L671 760L677 757L683 757L688 755L694 752L700 750L706 749L711 748L717 747L723 746L729 746L735 745L741 745L747 743L753 741L759 740L764 737L770 736" stroke-width="4.5"/><path d="M638 778L644 776L650 777L656 775L662 772L668 772L673 770L679 769L685 769L691 768L697 764L703 763L709 763L715 762L720 760L726 758L732 757L738 756L743 753L750 753L755 750L761 750L767 748L773 747L778 745L785 745L791 745L796 741L802 742L808 739L814 737L819 736" stroke-width="5.0"/><path d="M636 795L642 792L647 791L653 789L659 787L665 788L671 788L677 787L683 785L689 784L695 782L700 780L706 777L712 776L718 776L724 775L729 773L735 772L741 769L747 768L753 766L759 766L765 765L770 764L776 760L782 760L788 760L794 757L800 758L805 755L811 753L817 751L823 752L829 751L835 748L841 749L846 746L852 745L858 744L864 743L870 742L876 740" stroke-width="5.1"/><path d="M638 805L644 803L650 802L656 803L662 801L668 798L674 798L679 796L685 796L692 795L697 794L703 793L709 791L715 789L720 787L726 785L732 784L738 783L744 782L750 781L756 781L762 779L768 778L773 775L779 772L785 773L791 773L797 771L802 769L808 768L814 767L820 764L825 761L831 760L837 760L843 757L849 757L855 755L861 755L866 751L872 750" stroke-width="4.7"/><path d="M636 821L642 820L648 818L654 819L659 817L665 816L671 813L677 812L683 811L689 810L694 807L700 807L706 805L712 804L718 802L724 802L729 800L736 800L741 797L748 798L753 796L759 795L765 794L771 793L777 791L782 789L788 788L794 785L800 784L805 781L811 781L817 779L823 778L829 777L835 776L841 774L846 773L852 771L858 770L864 767L870 766L876 767" stroke-width="5.4"/><path d="M638 832L644 831L650 830L656 829L662 827L668 826L674 825L680 825L686 824L691 821L697 821L703 820L709 819L715 816L721 815L727 814L733 813L738 811L744 808L750 807L755 804L761 803L767 804L773 802L779 800L785 800L791 799L797 798L802 796L808 795L814 794L821 794L826 792L832 789L838 788L844 787L849 786L855 785L861 782L866 779L872 778" stroke-width="5.8"/><path d="M636 846L641 844L647 843L653 843L659 842L665 840L671 838L676 836L683 837L688 835L694 833L700 832L706 831L712 832L718 829L723 827L729 825L735 823L741 822L747 822L753 820L759 819L765 819L770 816L776 814L782 814L788 812L794 812L800 811L805 808L811 806L817 805L823 805L829 804L835 802L841 801L846 799L852 799L858 797L864 794L870 794L876 793" stroke-width="5.8"/><path d="M686 851L692 850L697 847L704 847L710 847L715 844L721 844L727 844L733 841L739 842L745 839L750 836L756 837L762 836L768 834L774 831L780 830L785 828L791 826L797 825L803 823L809 824L815 823L820 820L826 819L832 818L838 816L844 816L850 815L855 811L861 811L867 808L873 808" stroke-width="5.0"/><path d="M741 851L747 851L753 848L759 848L765 845L771 845L776 842L782 841L788 840L794 838L800 838L806 836L811 834L818 835L824 834L829 831L835 829L840 827L846 826L853 826L858 825L864 822L870 821L876 821" stroke-width="6.1"/><path d="M809 851L815 851L821 849L827 847L832 845L839 845L844 844L850 842L856 841L862 841L868 839L874 837" stroke-width="4.4"/></g><g fill="none" stroke-linejoin="round" stroke="#7a3e14"><path d="M638 751L644 750L650 750L656 749L662 748L667 744L673 742L679 740L685 740L691 740L697 737L703 737" stroke-width="5.2"/><path d="M635 765L641 763L647 762L653 761L659 761L665 761L671 760L677 757L683 757L688 755L694 752L700 750L706 749L711 748L717 747L723 746L729 746L735 745L741 745L747 743L753 741L759 740L764 737L770 736" stroke-width="3.7"/><path d="M638 778L644 776L650 777L656 775L662 772L668 772L673 770L679 769L685 769L691 768L697 764L703 763L709 763L715 762L720 760L726 758L732 757L738 756L743 753L750 753L755 750L761 750L767 748L773 747L778 745L785 745L791 745L796 741L802 742L808 739L814 737L819 736" stroke-width="4.1"/><path d="M636 795L642 792L647 791L653 789L659 787L665 788L671 788L677 787L683 785L689 784L695 782L700 780L706 777L712 776L718 776L724 775L729 773L735 772L741 769L747 768L753 766L759 766L765 765L770 764L776 760L782 760L788 760L794 757L800 758L805 755L811 753L817 751L823 752L829 751L835 748L841 749L846 746L852 745L858 744L864 743L870 742L876 740" stroke-width="4.2"/><path d="M638 805L644 803L650 802L656 803L662 801L668 798L674 798L679 796L685 796L692 795L697 794L703 793L709 791L715 789L720 787L726 785L732 784L738 783L744 782L750 781L756 781L762 779L768 778L773 775L779 772L785 773L791 773L797 771L802 769L808 768L814 767L820 764L825 761L831 760L837 760L843 757L849 757L855 755L861 755L866 751L872 750" stroke-width="3.9"/><path d="M636 821L642 820L648 818L654 819L659 817L665 816L671 813L677 812L683 811L689 810L694 807L700 807L706 805L712 804L718 802L724 802L729 800L736 800L741 797L748 798L753 796L759 795L765 794L771 793L777 791L782 789L788 788L794 785L800 784L805 781L811 781L817 779L823 778L829 777L835 776L841 774L846 773L852 771L858 770L864 767L870 766L876 767" stroke-width="4.4"/><path d="M638 832L644 831L650 830L656 829L662 827L668 826L674 825L680 825L686 824L691 821L697 821L703 820L709 819L715 816L721 815L727 814L733 813L738 811L744 808L750 807L755 804L761 803L767 804L773 802L779 800L785 800L791 799L797 798L802 796L808 795L814 794L821 794L826 792L832 789L838 788L844 787L849 786L855 785L861 782L866 779L872 778" stroke-width="4.8"/><path d="M636 846L641 844L647 843L653 843L659 842L665 840L671 838L676 836L683 837L688 835L694 833L700 832L706 831L712 832L718 829L723 827L729 825L735 823L741 822L747 822L753 820L759 819L765 819L770 816L776 814L782 814L788 812L794 812L800 811L805 808L811 806L817 805L823 805L829 804L835 802L841 801L846 799L852 799L858 797L864 794L870 794L876 793" stroke-width="4.7"/><path d="M686 851L692 850L697 847L704 847L710 847L715 844L721 844L727 844L733 841L739 842L745 839L750 836L756 837L762 836L768 834L774 831L780 830L785 828L791 826L797 825L803 823L809 824L815 823L820 820L826 819L832 818L838 816L844 816L850 815L855 811L861 811L867 808L873 808" stroke-width="4.1"/><path d="M741 851L747 851L753 848L759 848L765 845L771 845L776 842L782 841L788 840L794 838L800 838L806 836L811 834L818 835L824 834L829 831L835 829L840 827L846 826L853 826L858 825L864 822L870 821L876 821" stroke-width="5.0"/><path d="M809 851L815 851L821 849L827 847L832 845L839 845L844 844L850 842L856 841L862 841L868 839L874 837" stroke-width="3.6"/></g></g><ellipse cx="767.0" cy="757.0" rx="78.0" ry="27.0" fill="#1c1505" opacity="0.86" filter="url(#bs)" transform="rotate(2 767.0 757.0)"/><path d="M764.0 827.0L819.9 774.0" stroke="#4d4a1e" stroke-width="1.4" opacity=".85"/><path d="M839.8 821.0L875.2 785.6" stroke="#4d4a1e" stroke-width="1.4" opacity=".85"/></g><rect x="682.9" y="728.0" width="3.3" height="43.0" fill="url(#poled)"/><rect x="713.4" y="728.0" width="3.3" height="30.8" fill="url(#poled)"/><rect x="746.4" y="726.0" width="3.3" height="44.5" fill="url(#poled)"/><rect x="821.7" y="672.0" width="2.0" height="93.0" fill="url(#poled)"/><rect x="762.4" y="718.0" width="3.3" height="109.5" fill="url(#pole)"/><rect x="838.1" y="672.0" width="3.3" height="149.0" fill="url(#pole)"/><rect x="486.1" y="682.0" width="3.3" height="164.0" fill="url(#pole)"/><rect x="516.5" y="686.0" width="3.3" height="126.0" fill="url(#poled)"/><rect x="607.4" y="703.0" width="3.3" height="152.6" fill="url(#pole)"/><rect x="614.1" y="705.0" width="3.3" height="113.0" fill="url(#poled)"/><rect x="950.0" y="653.0" width="3.3" height="196.4" fill="url(#pole)"/><rect x="965.1" y="653.0" width="3.3" height="163.6" fill="url(#pole)"/><path d="M449.4 657.5C450.4 651.2 448.3 653.7 455.6 648.0C462.9 642.3 458.3 645.0 471.3 640.3C484.3 635.6 476.5 637.4 494.7 634.0C512.9 630.6 502.5 632.1 525.9 630.0C549.3 627.9 541.5 629.0 565.0 627.8C588.5 626.6 572.9 627.3 596.3 626.3C619.7 625.3 609.3 625.1 635.3 624.7C661.3 624.3 651.0 624.2 674.4 625.0C697.8 625.8 683.7 624.0 705.6 627.0C727.5 630.0 718.5 626.3 740.0 634.0C761.5 641.7 755.2 634.9 770.0 650.0C784.8 665.1 780.6 664.4 784.4 679.4C788.2 694.4 786.0 685.6 781.3 695.0C776.6 704.4 781.8 699.7 770.3 707.5C758.8 715.3 760.7 712.7 746.9 718.4C733.1 724.1 742.8 721.4 729.0 724.5C715.2 727.6 721.2 727.2 705.6 727.8C690.0 728.4 697.8 728.9 682.2 726.3C666.6 723.7 674.4 724.7 658.8 720.0C643.2 715.3 650.9 717.4 635.3 712.2C619.7 707.0 630.1 709.6 611.9 704.4C593.7 699.2 601.4 701.3 580.6 696.6C559.8 691.9 570.3 694.5 549.4 690.3C528.5 686.1 538.8 687.6 518.0 684.0C497.2 680.4 503.6 682.5 486.9 679.4C470.2 676.3 479.5 678.9 468.0 674.7C456.5 670.5 458.7 672.6 452.5 666.9C446.3 661.2 448.4 663.8 449.4 657.5Z" transform="translate(0,2)" fill="#a8925a" stroke="#4a3c1a" stroke-width="0.5"/><path d="M449.4 657.5C450.4 651.2 448.3 653.7 455.6 648.0C462.9 642.3 458.3 645.0 471.3 640.3C484.3 635.6 476.5 637.4 494.7 634.0C512.9 630.6 502.5 632.1 525.9 630.0C549.3 627.9 541.5 629.0 565.0 627.8C588.5 626.6 572.9 627.3 596.3 626.3C619.7 625.3 609.3 625.1 635.3 624.7C661.3 624.3 651.0 624.2 674.4 625.0C697.8 625.8 683.7 624.0 705.6 627.0C727.5 630.0 718.5 626.3 740.0 634.0C761.5 641.7 755.2 634.9 770.0 650.0C784.8 665.1 780.6 664.4 784.4 679.4C788.2 694.4 786.0 685.6 781.3 695.0C776.6 704.4 781.8 699.7 770.3 707.5C758.8 715.3 760.7 712.7 746.9 718.4C733.1 724.1 742.8 721.4 729.0 724.5C715.2 727.6 721.2 727.2 705.6 727.8C690.0 728.4 697.8 728.9 682.2 726.3C666.6 723.7 674.4 724.7 658.8 720.0C643.2 715.3 650.9 717.4 635.3 712.2C619.7 707.0 630.1 709.6 611.9 704.4C593.7 699.2 601.4 701.3 580.6 696.6C559.8 691.9 570.3 694.5 549.4 690.3C528.5 686.1 538.8 687.6 518.0 684.0C497.2 680.4 503.6 682.5 486.9 679.4C470.2 676.3 479.5 678.9 468.0 674.7C456.5 670.5 458.7 672.6 452.5 666.9C446.3 661.2 448.4 663.8 449.4 657.5Z" fill="#958247"/><g clip-path="url(#cH)"><g filter="url(#bl)"><g fill="none" stroke-linejoin="round" stroke="#a26a32"><path d="M442 632L447 631L452 627L458 625L464 624L469 621L475 620L481 617" stroke-width="8.0"/><path d="M443 656L448 653L453 649L459 648L465 645L470 642L476 640L482 640L487 637L493 635L499 634L505 632L510 630L515 627L521 624L527 625L533 623L538 619L545 619L550 617L556 616" stroke-width="9.6"/><path d="M442 673L447 670L452 666L458 664L464 663L470 663L476 660L482 659L487 657L493 655L498 650L503 648L509 646L515 644L520 641L526 639L531 637L537 635L543 633L548 631L554 629L560 628L566 627L572 626L578 625L583 620L588 618L594 616" stroke-width="8.9"/><path d="M441 689L447 689L453 687L459 685L464 683L470 682L476 681L481 677L487 676L493 673L498 670L504 668L509 667L515 664L521 663L527 663L533 661L538 657L543 655L550 654L555 651L560 649L566 646L571 644L577 642L583 641L589 640L595 639L601 637L607 636L612 632L618 630L624 630L629 626L634 624L640 623L646 620L652 620L658 619L664 617" stroke-width="10.1"/><path d="M443 715L449 713L454 710L460 709L465 705L471 705L477 702L483 702L488 698L494 696L500 696L505 692L511 690L517 689L522 686L528 686L533 682L539 680L545 680L552 680L557 678L563 676L568 671L574 671L580 669L585 666L591 665L596 662L602 660L608 659L613 657L620 657L625 654L631 652L636 650L642 648L648 647L654 646L659 642L665 640L670 638L676 634L682 633L688 633L694 632L699 629L704 626L711 626L717 625L722 622L728 622L733 618L739 616" stroke-width="8.5"/><path d="M443 735L449 733L454 729L459 726L465 725L471 722L477 721L483 720L488 718L494 718L500 716L506 713L511 710L516 707L522 706L528 704L534 704L540 703L546 702L552 700L558 699L563 696L569 694L574 692L580 689L585 687L592 686L597 684L602 681L608 680L615 679L620 676L626 676L632 674L637 671L643 669L649 668L654 666L659 662L665 660L671 659L676 656L682 654L688 653L694 651L699 649L705 646L711 645L716 642L722 640L728 640L734 640L740 639L745 636L751 634L757 632L762 630L769 629L774 626L780 624L786 624L791 621" stroke-width="8.6"/><path d="M488 736L494 736L500 734L506 734L511 731L516 727L523 727L528 724L534 722L539 719L544 716L551 717L557 716L562 713L568 711L574 711L580 708L586 707L592 707L598 706L603 703L609 700L614 698L620 698L626 695L631 692L637 691L643 688L648 687L654 684L660 684L666 681L672 681L677 679L683 677L689 675L694 671L700 670L706 668L711 664L716 663L722 660L728 660L734 659L740 657L746 656L752 655L757 652L763 651L768 648L775 648L780 645L786 643L792 642" stroke-width="9.0"/><path d="M564 737L569 733L575 733L580 729L586 729L592 728L598 726L603 723L609 720L615 720L621 719L627 717L632 715L638 712L643 710L649 709L655 707L661 707L667 703L672 702L679 702L685 702L690 698L696 696L701 695L707 692L713 691L719 690L724 688L730 684L736 684L742 682L747 680L753 677L759 678L765 675L770 674L776 671L782 670L788 670L794 669" stroke-width="8.9"/><path d="M633 737L639 737L646 736L651 734L657 732L663 731L668 727L674 727L680 725L686 724L691 722L697 719L702 716L708 714L714 714L720 711L725 710L731 708L737 707L742 704L748 702L754 702L759 698L766 698L771 696L777 694L783 694L789 691L794 689" stroke-width="8.2"/><path d="M703 737L709 737L714 734L719 731L726 731L731 729L737 726L743 727L749 724L755 723L760 719L766 719L772 719L778 716L783 714L789 711" stroke-width="7.4"/></g><g fill="none" stroke-linejoin="round" stroke="#8d5020"><path d="M442 632L447 631L452 627L458 625L464 624L469 621L475 620L481 617" stroke-width="6.8"/><path d="M443 656L448 653L453 649L459 648L465 645L470 642L476 640L482 640L487 637L493 635L499 634L505 632L510 630L515 627L521 624L527 625L533 623L538 619L545 619L550 617L556 616" stroke-width="8.2"/><path d="M442 673L447 670L452 666L458 664L464 663L470 663L476 660L482 659L487 657L493 655L498 650L503 648L509 646L515 644L520 641L526 639L531 637L537 635L543 633L548 631L554 629L560 628L566 627L572 626L578 625L583 620L588 618L594 616" stroke-width="7.6"/><path d="M441 689L447 689L453 687L459 685L464 683L470 682L476 681L481 677L487 676L493 673L498 670L504 668L509 667L515 664L521 663L527 663L533 661L538 657L543 655L550 654L555 651L560 649L566 646L571 644L577 642L583 641L589 640L595 639L601 637L607 636L612 632L618 630L624 630L629 626L634 624L640 623L646 620L652 620L658 619L664 617" stroke-width="8.6"/><path d="M443 715L449 713L454 710L460 709L465 705L471 705L477 702L483 702L488 698L494 696L500 696L505 692L511 690L517 689L522 686L528 686L533 682L539 680L545 680L552 680L557 678L563 676L568 671L574 671L580 669L585 666L591 665L596 662L602 660L608 659L613 657L620 657L625 654L631 652L636 650L642 648L648 647L654 646L659 642L665 640L670 638L676 634L682 633L688 633L694 632L699 629L704 626L711 626L717 625L722 622L728 622L733 618L739 616" stroke-width="7.2"/><path d="M443 735L449 733L454 729L459 726L465 725L471 722L477 721L483 720L488 718L494 718L500 716L506 713L511 710L516 707L522 706L528 704L534 704L540 703L546 702L552 700L558 699L563 696L569 694L574 692L580 689L585 687L592 686L597 684L602 681L608 680L615 679L620 676L626 676L632 674L637 671L643 669L649 668L654 666L659 662L665 660L671 659L676 656L682 654L688 653L694 651L699 649L705 646L711 645L716 642L722 640L728 640L734 640L740 639L745 636L751 634L757 632L762 630L769 629L774 626L780 624L786 624L791 621" stroke-width="7.4"/><path d="M488 736L494 736L500 734L506 734L511 731L516 727L523 727L528 724L534 722L539 719L544 716L551 717L557 716L562 713L568 711L574 711L580 708L586 707L592 707L598 706L603 703L609 700L614 698L620 698L626 695L631 692L637 691L643 688L648 687L654 684L660 684L666 681L672 681L677 679L683 677L689 675L694 671L700 670L706 668L711 664L716 663L722 660L728 660L734 659L740 657L746 656L752 655L757 652L763 651L768 648L775 648L780 645L786 643L792 642" stroke-width="7.7"/><path d="M564 737L569 733L575 733L580 729L586 729L592 728L598 726L603 723L609 720L615 720L621 719L627 717L632 715L638 712L643 710L649 709L655 707L661 707L667 703L672 702L679 702L685 702L690 698L696 696L701 695L707 692L713 691L719 690L724 688L730 684L736 684L742 682L747 680L753 677L759 678L765 675L770 674L776 671L782 670L788 670L794 669" stroke-width="7.6"/><path d="M633 737L639 737L646 736L651 734L657 732L663 731L668 727L674 727L680 725L686 724L691 722L697 719L702 716L708 714L714 714L720 711L725 710L731 708L737 707L742 704L748 702L754 702L759 698L766 698L771 696L777 694L783 694L789 691L794 689" stroke-width="7.0"/><path d="M703 737L709 737L714 734L719 731L726 731L731 729L737 726L743 727L749 724L755 723L760 719L766 719L772 719L778 716L783 714L789 711" stroke-width="6.3"/></g><g fill="none" stroke-linejoin="round" stroke="#7a3e14"><path d="M442 632L447 631L452 627L458 625L464 624L469 621L475 620L481 617" stroke-width="5.6"/><path d="M443 656L448 653L453 649L459 648L465 645L470 642L476 640L482 640L487 637L493 635L499 634L505 632L510 630L515 627L521 624L527 625L533 623L538 619L545 619L550 617L556 616" stroke-width="6.7"/><path d="M442 673L447 670L452 666L458 664L464 663L470 663L476 660L482 659L487 657L493 655L498 650L503 648L509 646L515 644L520 641L526 639L531 637L537 635L543 633L548 631L554 629L560 628L566 627L572 626L578 625L583 620L588 618L594 616" stroke-width="6.2"/><path d="M441 689L447 689L453 687L459 685L464 683L470 682L476 681L481 677L487 676L493 673L498 670L504 668L509 667L515 664L521 663L527 663L533 661L538 657L543 655L550 654L555 651L560 649L566 646L571 644L577 642L583 641L589 640L595 639L601 637L607 636L612 632L618 630L624 630L629 626L634 624L640 623L646 620L652 620L658 619L664 617" stroke-width="7.0"/><path d="M443 715L449 713L454 710L460 709L465 705L471 705L477 702L483 702L488 698L494 696L500 696L505 692L511 690L517 689L522 686L528 686L533 682L539 680L545 680L552 680L557 678L563 676L568 671L574 671L580 669L585 666L591 665L596 662L602 660L608 659L613 657L620 657L625 654L631 652L636 650L642 648L648 647L654 646L659 642L665 640L670 638L676 634L682 633L688 633L694 632L699 629L704 626L711 626L717 625L722 622L728 622L733 618L739 616" stroke-width="5.9"/><path d="M443 735L449 733L454 729L459 726L465 725L471 722L477 721L483 720L488 718L494 718L500 716L506 713L511 710L516 707L522 706L528 704L534 704L540 703L546 702L552 700L558 699L563 696L569 694L574 692L580 689L585 687L592 686L597 684L602 681L608 680L615 679L620 676L626 676L632 674L637 671L643 669L649 668L654 666L659 662L665 660L671 659L676 656L682 654L688 653L694 651L699 649L705 646L711 645L716 642L722 640L728 640L734 640L740 639L745 636L751 634L757 632L762 630L769 629L774 626L780 624L786 624L791 621" stroke-width="6.0"/><path d="M488 736L494 736L500 734L506 734L511 731L516 727L523 727L528 724L534 722L539 719L544 716L551 717L557 716L562 713L568 711L574 711L580 708L586 707L592 707L598 706L603 703L609 700L614 698L620 698L626 695L631 692L637 691L643 688L648 687L654 684L660 684L666 681L672 681L677 679L683 677L689 675L694 671L700 670L706 668L711 664L716 663L722 660L728 660L734 659L740 657L746 656L752 655L757 652L763 651L768 648L775 648L780 645L786 643L792 642" stroke-width="6.3"/><path d="M564 737L569 733L575 733L580 729L586 729L592 728L598 726L603 723L609 720L615 720L621 719L627 717L632 715L638 712L643 710L649 709L655 707L661 707L667 703L672 702L679 702L685 702L690 698L696 696L701 695L707 692L713 691L719 690L724 688L730 684L736 684L742 682L747 680L753 677L759 678L765 675L770 674L776 671L782 670L788 670L794 669" stroke-width="6.2"/><path d="M633 737L639 737L646 736L651 734L657 732L663 731L668 727L674 727L680 725L686 724L691 722L697 719L702 716L708 714L714 714L720 711L725 710L731 708L737 707L742 704L748 702L754 702L759 698L766 698L771 696L777 694L783 694L789 691L794 689" stroke-width="5.7"/><path d="M703 737L709 737L714 734L719 731L726 731L731 729L737 726L743 727L749 724L755 723L760 719L766 719L772 719L778 716L783 714L789 711" stroke-width="5.2"/></g></g><ellipse cx="668.0" cy="636.5" rx="39.0" ry="12.5" fill="#1c1505" opacity="0.88" filter="url(#bs)" transform="rotate(0 668.0 636.5)"/><ellipse cx="766.0" cy="672.0" rx="30.0" ry="21.0" fill="#1c1505" opacity="0.82" filter="url(#bs)" transform="rotate(-15 766.0 672.0)"/><path d="M487.7 676.0L511.0 652.7" stroke="#4d4a1e" stroke-width="1.4" opacity=".85"/><path d="M609.0 684.8L654.3 639.5" stroke="#4d4a1e" stroke-width="1.4" opacity=".85"/><path d="M615.8 646.6L637.0 625.4" stroke="#4d4a1e" stroke-width="1.4" opacity=".85"/><path d="M684.5 652.8L710.0 627.3" stroke="#4d4a1e" stroke-width="1.4" opacity=".85"/></g><rect x="762.4" y="667.0" width="3.3" height="40.5" fill="url(#pole)"/><path d="M711.0 623.0C708.9 612.6 708.8 618.9 714.0 609.0C719.2 599.1 715.6 602.0 726.6 593.4C737.6 584.8 729.8 588.5 746.9 583.3C764.0 578.1 757.2 580.1 778.0 577.8C798.8 575.5 787.1 576.4 809.4 576.3C831.7 576.2 822.6 575.9 845.0 577.5C867.4 579.1 857.3 578.6 876.6 581.0C895.9 583.4 883.7 581.7 903.0 584.8C922.3 587.9 913.5 586.1 934.4 590.3C955.3 594.5 947.4 592.4 965.6 597.3C983.8 602.2 977.0 599.0 989.0 605.0C1001.0 611.0 996.4 608.2 1001.6 615.3C1006.8 622.4 1005.2 619.0 1004.7 626.3C1004.2 633.6 1007.8 630.4 1000.0 637.2C992.2 644.0 995.4 642.2 981.3 646.6C967.2 651.0 973.4 649.5 957.8 650.5C942.2 651.5 950.0 650.5 934.4 649.7C918.8 648.9 924.0 648.0 911.0 648.0C898.0 648.0 904.7 647.0 895.3 649.7C885.9 652.4 891.6 651.3 882.8 656.0C874.0 660.7 880.3 659.7 868.8 663.8C857.3 667.9 863.0 666.3 848.4 668.4C833.8 670.5 843.2 670.0 825.0 670.0C806.8 670.0 814.6 671.0 793.8 668.4C773.0 665.8 780.8 667.4 762.5 662.2C744.2 657.0 753.1 660.1 739.0 652.8C724.9 645.5 729.6 650.2 720.3 640.3C711.0 630.4 713.1 633.4 711.0 623.0Z" transform="translate(0,3)" fill="url(#sideG)" stroke="#4a3c1a" stroke-width="0.5"/><path d="M711.0 623.0C708.9 612.6 708.8 618.9 714.0 609.0C719.2 599.1 715.6 602.0 726.6 593.4C737.6 584.8 729.8 588.5 746.9 583.3C764.0 578.1 757.2 580.1 778.0 577.8C798.8 575.5 787.1 576.4 809.4 576.3C831.7 576.2 822.6 575.9 845.0 577.5C867.4 579.1 857.3 578.6 876.6 581.0C895.9 583.4 883.7 581.7 903.0 584.8C922.3 587.9 913.5 586.1 934.4 590.3C955.3 594.5 947.4 592.4 965.6 597.3C983.8 602.2 977.0 599.0 989.0 605.0C1001.0 611.0 996.4 608.2 1001.6 615.3C1006.8 622.4 1005.2 619.0 1004.7 626.3C1004.2 633.6 1007.8 630.4 1000.0 637.2C992.2 644.0 995.4 642.2 981.3 646.6C967.2 651.0 973.4 649.5 957.8 650.5C942.2 651.5 950.0 650.5 934.4 649.7C918.8 648.9 924.0 648.0 911.0 648.0C898.0 648.0 904.7 647.0 895.3 649.7C885.9 652.4 891.6 651.3 882.8 656.0C874.0 660.7 880.3 659.7 868.8 663.8C857.3 667.9 863.0 666.3 848.4 668.4C833.8 670.5 843.2 670.0 825.0 670.0C806.8 670.0 814.6 671.0 793.8 668.4C773.0 665.8 780.8 667.4 762.5 662.2C744.2 657.0 753.1 660.1 739.0 652.8C724.9 645.5 729.6 650.2 720.3 640.3C711.0 630.4 713.1 633.4 711.0 623.0Z" fill="#958247"/><g clip-path="url(#cG)"><g filter="url(#bl)"><g fill="none" stroke-linejoin="round" stroke="#a26a32"><path d="M702 580L708 578L713 575L718 572L725 571L730 569L736 567" stroke-width="6.4"/><path d="M701 598L707 597L712 595L718 592L724 591L730 589L736 588L741 584L746 582L751 579L757 577L763 576L769 574L774 572L780 571L787 571L792 567L798 566" stroke-width="8.6"/><path d="M706 616L711 613L717 611L723 610L728 607L734 605L739 602L745 601L751 600L757 598L763 597L768 593L774 592L780 591L786 589L791 586L797 585L802 582L808 581L814 579L820 578L825 574L831 573L837 572L842 570L848 568L854 566" stroke-width="7.8"/><path d="M705 633L710 630L716 630L721 627L727 625L733 624L738 620L744 618L750 618L756 616L761 612L767 611L773 610L779 609L784 607L790 605L796 604L802 602L807 599L812 596L818 595L824 594L830 592L836 591L841 588L847 586L853 585L859 584L864 581L870 579L876 578L882 576L887 574L893 574L899 571L904 569" stroke-width="7.0"/><path d="M702 648L708 647L714 646L721 645L726 642L731 639L737 639L744 639L749 636L755 633L760 632L766 630L772 629L778 627L784 626L789 624L795 621L801 621L807 619L812 618L818 617L823 613L829 610L835 609L841 609L846 606L852 605L858 604L864 601L869 599L876 599L881 596L887 595L893 593L899 591L904 588L909 585L915 583L921 584L927 582L933 581L939 579L944 575L950 574L955 572L961 570L967 568L973 567" stroke-width="9.4"/><path d="M703 670L708 668L714 667L720 665L726 664L731 660L737 660L743 659L749 656L754 653L760 652L765 650L771 649L777 646L783 644L788 642L795 643L801 642L807 641L812 639L818 637L824 635L829 633L835 629L840 627L846 626L852 626L858 624L863 620L869 621L875 619L881 619L887 616L893 616L898 613L904 611L910 609L916 609L922 607L928 606L933 602L939 601L945 601L950 598L957 598L962 594L967 592L973 590L979 588L985 588L991 587L997 585L1002 583L1008 582L1014 580" stroke-width="9.4"/><path d="M718 679L724 679L729 676L735 674L741 673L747 673L753 670L759 669L765 669L770 666L776 665L782 664L788 662L794 661L799 660L805 657L811 655L816 653L823 653L828 652L834 649L840 648L845 645L851 644L857 644L862 640L868 638L874 637L880 636L886 635L892 633L897 630L903 628L909 626L914 625L920 624L926 623L932 620L938 619L944 618L949 616L955 614L960 611L967 612L972 609L978 608L984 606L990 604L995 603L1001 600L1007 601L1013 600" stroke-width="7.1"/><path d="M780 680L786 678L792 678L798 677L804 674L809 672L815 671L821 668L827 667L833 668L839 665L844 663L850 662L857 663L862 659L868 658L874 658L880 657L885 653L891 651L896 649L902 647L908 646L914 644L920 643L926 643L931 640L937 640L943 638L949 636L955 634L960 631L966 631L972 632L978 629L984 629L990 628L996 627L1002 624L1007 621L1013 620" stroke-width="6.8"/><path d="M855 680L861 679L867 676L873 675L878 673L884 672L890 670L896 670L902 669L908 669L914 666L920 666L926 665L932 663L937 662L943 660L949 658L954 656L960 654L966 652L972 650L977 648L983 645L989 645L995 645L1001 643L1007 643L1012 640" stroke-width="7.3"/><path d="M930 679L942 679L948 677L954 675L960 674L965 673L972 673L978 672L984 671L989 667L994 664L1000 662L1006 662L1012 661" stroke-width="8.8"/></g><g fill="none" stroke-linejoin="round" stroke="#8d5020"><path d="M702 580L708 578L713 575L718 572L725 571L730 569L736 567" stroke-width="5.5"/><path d="M701 598L707 597L712 595L718 592L724 591L730 589L736 588L741 584L746 582L751 579L757 577L763 576L769 574L774 572L780 571L787 571L792 567L798 566" stroke-width="7.3"/><path d="M706 616L711 613L717 611L723 610L728 607L734 605L739 602L745 601L751 600L757 598L763 597L768 593L774 592L780 591L786 589L791 586L797 585L802 582L808 581L814 579L820 578L825 574L831 573L837 572L842 570L848 568L854 566" stroke-width="6.7"/><path d="M705 633L710 630L716 630L721 627L727 625L733 624L738 620L744 618L750 618L756 616L761 612L767 611L773 610L779 609L784 607L790 605L796 604L802 602L807 599L812 596L818 595L824 594L830 592L836 591L841 588L847 586L853 585L859 584L864 581L870 579L876 578L882 576L887 574L893 574L899 571L904 569" stroke-width="6.0"/><path d="M702 648L708 647L714 646L721 645L726 642L731 639L737 639L744 639L749 636L755 633L760 632L766 630L772 629L778 627L784 626L789 624L795 621L801 621L807 619L812 618L818 617L823 613L829 610L835 609L841 609L846 606L852 605L858 604L864 601L869 599L876 599L881 596L887 595L893 593L899 591L904 588L909 585L915 583L921 584L927 582L933 581L939 579L944 575L950 574L955 572L961 570L967 568L973 567" stroke-width="8.0"/><path d="M703 670L708 668L714 667L720 665L726 664L731 660L737 660L743 659L749 656L754 653L760 652L765 650L771 649L777 646L783 644L788 642L795 643L801 642L807 641L812 639L818 637L824 635L829 633L835 629L840 627L846 626L852 626L858 624L863 620L869 621L875 619L881 619L887 616L893 616L898 613L904 611L910 609L916 609L922 607L928 606L933 602L939 601L945 601L950 598L957 598L962 594L967 592L973 590L979 588L985 588L991 587L997 585L1002 583L1008 582L1014 580" stroke-width="8.0"/><path d="M718 679L724 679L729 676L735 674L741 673L747 673L753 670L759 669L765 669L770 666L776 665L782 664L788 662L794 661L799 660L805 657L811 655L816 653L823 653L828 652L834 649L840 648L845 645L851 644L857 644L862 640L868 638L874 637L880 636L886 635L892 633L897 630L903 628L909 626L914 625L920 624L926 623L932 620L938 619L944 618L949 616L955 614L960 611L967 612L972 609L978 608L984 606L990 604L995 603L1001 600L1007 601L1013 600" stroke-width="6.0"/><path d="M780 680L786 678L792 678L798 677L804 674L809 672L815 671L821 668L827 667L833 668L839 665L844 663L850 662L857 663L862 659L868 658L874 658L880 657L885 653L891 651L896 649L902 647L908 646L914 644L920 643L926 643L931 640L937 640L943 638L949 636L955 634L960 631L966 631L972 632L978 629L984 629L990 628L996 627L1002 624L1007 621L1013 620" stroke-width="5.8"/><path d="M855 680L861 679L867 676L873 675L878 673L884 672L890 670L896 670L902 669L908 669L914 666L920 666L926 665L932 663L937 662L943 660L949 658L954 656L960 654L966 652L972 650L977 648L983 645L989 645L995 645L1001 643L1007 643L1012 640" stroke-width="6.3"/><path d="M930 679L942 679L948 677L954 675L960 674L965 673L972 673L978 672L984 671L989 667L994 664L1000 662L1006 662L1012 661" stroke-width="7.5"/></g><g fill="none" stroke-linejoin="round" stroke="#7a3e14"><path d="M702 580L708 578L713 575L718 572L725 571L730 569L736 567" stroke-width="4.5"/><path d="M701 598L707 597L712 595L718 592L724 591L730 589L736 588L741 584L746 582L751 579L757 577L763 576L769 574L774 572L780 571L787 571L792 567L798 566" stroke-width="6.0"/><path d="M706 616L711 613L717 611L723 610L728 607L734 605L739 602L745 601L751 600L757 598L763 597L768 593L774 592L780 591L786 589L791 586L797 585L802 582L808 581L814 579L820 578L825 574L831 573L837 572L842 570L848 568L854 566" stroke-width="5.5"/><path d="M705 633L710 630L716 630L721 627L727 625L733 624L738 620L744 618L750 618L756 616L761 612L767 611L773 610L779 609L784 607L790 605L796 604L802 602L807 599L812 596L818 595L824 594L830 592L836 591L841 588L847 586L853 585L859 584L864 581L870 579L876 578L882 576L887 574L893 574L899 571L904 569" stroke-width="4.9"/><path d="M702 648L708 647L714 646L721 645L726 642L731 639L737 639L744 639L749 636L755 633L760 632L766 630L772 629L778 627L784 626L789 624L795 621L801 621L807 619L812 618L818 617L823 613L829 610L835 609L841 609L846 606L852 605L858 604L864 601L869 599L876 599L881 596L887 595L893 593L899 591L904 588L909 585L915 583L921 584L927 582L933 581L939 579L944 575L950 574L955 572L961 570L967 568L973 567" stroke-width="6.6"/><path d="M703 670L708 668L714 667L720 665L726 664L731 660L737 660L743 659L749 656L754 653L760 652L765 650L771 649L777 646L783 644L788 642L795 643L801 642L807 641L812 639L818 637L824 635L829 633L835 629L840 627L846 626L852 626L858 624L863 620L869 621L875 619L881 619L887 616L893 616L898 613L904 611L910 609L916 609L922 607L928 606L933 602L939 601L945 601L950 598L957 598L962 594L967 592L973 590L979 588L985 588L991 587L997 585L1002 583L1008 582L1014 580" stroke-width="6.6"/><path d="M718 679L724 679L729 676L735 674L741 673L747 673L753 670L759 669L765 669L770 666L776 665L782 664L788 662L794 661L799 660L805 657L811 655L816 653L823 653L828 652L834 649L840 648L845 645L851 644L857 644L862 640L868 638L874 637L880 636L886 635L892 633L897 630L903 628L909 626L914 625L920 624L926 623L932 620L938 619L944 618L949 616L955 614L960 611L967 612L972 609L978 608L984 606L990 604L995 603L1001 600L1007 601L1013 600" stroke-width="4.9"/><path d="M780 680L786 678L792 678L798 677L804 674L809 672L815 671L821 668L827 667L833 668L839 665L844 663L850 662L857 663L862 659L868 658L874 658L880 657L885 653L891 651L896 649L902 647L908 646L914 644L920 643L926 643L931 640L937 640L943 638L949 636L955 634L960 631L966 631L972 632L978 629L984 629L990 628L996 627L1002 624L1007 621L1013 620" stroke-width="4.8"/><path d="M855 680L861 679L867 676L873 675L878 673L884 672L890 670L896 670L902 669L908 669L914 666L920 666L926 665L932 663L937 662L943 660L949 658L954 656L960 654L966 652L972 650L977 648L983 645L989 645L995 645L1001 643L1007 643L1012 640" stroke-width="5.1"/><path d="M930 679L942 679L948 677L954 675L960 674L965 673L972 673L978 672L984 671L989 667L994 664L1000 662L1006 662L1012 661" stroke-width="6.2"/></g></g><ellipse cx="873.0" cy="599.0" rx="38.0" ry="21.0" fill="#1c1505" opacity="0.88" filter="url(#bs)" transform="rotate(5 873.0 599.0)"/><path d="M800 570H900V583H800Z" fill="#1c1505" opacity=".7" filter="url(#bs)"/><path d="M839.8 646.6L857.5 626.2" stroke="#4d4a1e" stroke-width="1.4" opacity=".85"/><path d="M764.0 651.0L770.4 643.3" stroke="#4d4a1e" stroke-width="1.4" opacity=".85"/><path d="M951.6 642.0L958.7 634.9" stroke="#4d4a1e" stroke-width="1.4" opacity=".85"/><path d="M966.7 609.0L973.8 601.9" stroke="#4d4a1e" stroke-width="1.4" opacity=".85"/></g><rect x="762.4" y="637.0" width="3.3" height="14.0" fill="url(#pole)"/><rect x="950.0" y="625.5" width="3.3" height="16.5" fill="url(#pole)"/><rect x="965.1" y="593.4" width="3.3" height="15.6" fill="url(#pole)"/><rect x="838.1" y="594.0" width="3.3" height="52.6" fill="url(#pole)"/><rect x="713.4" y="573.0" width="3.3" height="30.0" fill="url(#pole)"/><rect x="746.4" y="562.0" width="3.3" height="33.0" fill="url(#pole)"/><rect x="607.4" y="607.5" width="3.3" height="77.3" fill="url(#pole)"/><rect x="614.1" y="607.5" width="3.3" height="39.1" fill="url(#pole)"/><rect x="682.9" y="578.0" width="3.3" height="74.8" fill="url(#pole)"/><path d="M590.0 593.4C588.7 584.5 589.2 586.0 592.3 574.7C595.4 563.4 592.9 565.8 599.4 559.4C605.9 553.0 597.4 557.1 611.9 555.5C626.4 553.9 622.2 554.4 643.0 554.7C663.8 555.0 656.6 554.5 674.4 556.3C692.2 558.1 686.9 556.9 696.3 560.0C705.7 563.1 700.4 561.9 702.5 565.5C704.6 569.1 706.7 566.7 702.5 570.8C698.3 574.9 699.4 572.9 690.0 577.8C680.6 582.7 687.4 579.3 674.4 585.6C661.4 591.9 666.6 590.1 651.0 596.6C635.4 603.1 641.6 601.6 627.5 605.0C613.4 608.4 619.2 607.9 608.8 606.7C598.4 605.5 602.6 605.7 596.3 601.3C590.0 596.9 591.3 602.3 590.0 593.4Z" transform="translate(0,2)" fill="#35280e" stroke="#4a3c1a" stroke-width="0.5"/><path d="M590.0 593.4C588.7 584.5 589.2 586.0 592.3 574.7C595.4 563.4 592.9 565.8 599.4 559.4C605.9 553.0 597.4 557.1 611.9 555.5C626.4 553.9 622.2 554.4 643.0 554.7C663.8 555.0 656.6 554.5 674.4 556.3C692.2 558.1 686.9 556.9 696.3 560.0C705.7 563.1 700.4 561.9 702.5 565.5C704.6 569.1 706.7 566.7 702.5 570.8C698.3 574.9 699.4 572.9 690.0 577.8C680.6 582.7 687.4 579.3 674.4 585.6C661.4 591.9 666.6 590.1 651.0 596.6C635.4 603.1 641.6 601.6 627.5 605.0C613.4 608.4 619.2 607.9 608.8 606.7C598.4 605.5 602.6 605.7 596.3 601.3C590.0 596.9 591.3 602.3 590.0 593.4Z" fill="#958247"/><g clip-path="url(#cF)"><g filter="url(#bl)"><g fill="none" stroke-linejoin="round" stroke="#a26a32"><path d="M683 548L688 551L693 553L699 556L704 559L710 560" stroke-width="4.3"/><path d="M657 547L662 550L667 554L672 557L678 559L683 561L689 563L695 565L701 567L706 569L712 571" stroke-width="5.3"/><path d="M624 547L630 550L635 551L641 553L646 556L652 558L657 561L662 565L668 566L673 570L678 573L683 576L689 578L695 579L701 581L706 584L711 587" stroke-width="5.9"/><path d="M592 546L597 548L603 551L608 553L614 554L620 557L625 560L630 562L636 565L642 566L648 568L653 571L658 574L664 576L669 580L675 580L681 582L686 584L692 586L698 588L702 592L707 596" stroke-width="6.0"/><path d="M583 551L588 554L594 557L599 559L605 561L610 563L616 566L621 568L627 570L632 573L637 577L642 579L649 581L654 582L659 586L665 588L671 590L676 592L682 595L687 597L692 600L698 602L704 603L710 605" stroke-width="6.1"/><path d="M584 564L589 567L594 570L600 573L605 575L611 577L616 579L622 581L628 583L633 585L639 588L644 591L649 594L654 597L660 600L665 603L671 604L677 605L682 608L688 610L693 613L698 616" stroke-width="5.4"/><path d="M585 576L590 579L595 582L601 584L607 586L612 588L617 591L622 595L628 597L633 600L640 601L645 603L650 607L656 608L662 610L667 614L672 616" stroke-width="5.2"/><path d="M581 586L586 587L591 591L596 594L602 596L608 599L614 600L619 603L624 606L630 608L635 610L641 613L646 615" stroke-width="4.7"/><path d="M581 600L587 602L592 605L598 606L603 610L608 613L613 616" stroke-width="5.5"/><path d="M582 612L588 614" stroke-width="5.6"/></g><g fill="none" stroke-linejoin="round" stroke="#8d5020"><path d="M683 548L688 551L693 553L699 556L704 559L710 560" stroke-width="3.7"/><path d="M657 547L662 550L667 554L672 557L678 559L683 561L689 563L695 565L701 567L706 569L712 571" stroke-width="4.5"/><path d="M624 547L630 550L635 551L641 553L646 556L652 558L657 561L662 565L668 566L673 570L678 573L683 576L689 578L695 579L701 581L706 584L711 587" stroke-width="5.0"/><path d="M592 546L597 548L603 551L608 553L614 554L620 557L625 560L630 562L636 565L642 566L648 568L653 571L658 574L664 576L669 580L675 580L681 582L686 584L692 586L698 588L702 592L707 596" stroke-width="5.1"/><path d="M583 551L588 554L594 557L599 559L605 561L610 563L616 566L621 568L627 570L632 573L637 577L642 579L649 581L654 582L659 586L665 588L671 590L676 592L682 595L687 597L692 600L698 602L704 603L710 605" stroke-width="5.2"/><path d="M584 564L589 567L594 570L600 573L605 575L611 577L616 579L622 581L628 583L633 585L639 588L644 591L649 594L654 597L660 600L665 603L671 604L677 605L682 608L688 610L693 613L698 616" stroke-width="4.6"/><path d="M585 576L590 579L595 582L601 584L607 586L612 588L617 591L622 595L628 597L633 600L640 601L645 603L650 607L656 608L662 610L667 614L672 616" stroke-width="4.4"/><path d="M581 586L586 587L591 591L596 594L602 596L608 599L614 600L619 603L624 606L630 608L635 610L641 613L646 615" stroke-width="4.0"/><path d="M581 600L587 602L592 605L598 606L603 610L608 613L613 616" stroke-width="4.7"/><path d="M582 612L588 614" stroke-width="4.7"/></g><g fill="none" stroke-linejoin="round" stroke="#7a3e14"><path d="M683 548L688 551L693 553L699 556L704 559L710 560" stroke-width="3.0"/><path d="M657 547L662 550L667 554L672 557L678 559L683 561L689 563L695 565L701 567L706 569L712 571" stroke-width="3.7"/><path d="M624 547L630 550L635 551L641 553L646 556L652 558L657 561L662 565L668 566L673 570L678 573L683 576L689 578L695 579L701 581L706 584L711 587" stroke-width="4.1"/><path d="M592 546L597 548L603 551L608 553L614 554L620 557L625 560L630 562L636 565L642 566L648 568L653 571L658 574L664 576L669 580L675 580L681 582L686 584L692 586L698 588L702 592L707 596" stroke-width="4.2"/><path d="M583 551L588 554L594 557L599 559L605 561L610 563L616 566L621 568L627 570L632 573L637 577L642 579L649 581L654 582L659 586L665 588L671 590L676 592L682 595L687 597L692 600L698 602L704 603L710 605" stroke-width="4.3"/><path d="M584 564L589 567L594 570L600 573L605 575L611 577L616 579L622 581L628 583L633 585L639 588L644 591L649 594L654 597L660 600L665 603L671 604L677 605L682 608L688 610L693 613L698 616" stroke-width="3.8"/><path d="M585 576L590 579L595 582L601 584L607 586L612 588L617 591L622 595L628 597L633 600L640 601L645 603L650 607L656 608L662 610L667 614L672 616" stroke-width="3.6"/><path d="M581 586L586 587L591 591L596 594L602 596L608 599L614 600L619 603L624 606L630 608L635 610L641 613L646 615" stroke-width="3.3"/><path d="M581 600L587 602L592 605L598 606L603 610L608 613L613 616" stroke-width="3.8"/><path d="M582 612L588 614" stroke-width="3.9"/></g></g><path d="M642 556L612 597" stroke="#3f3a16" stroke-width="2" opacity=".8"/><path d="M609.0 598.0L630.2 576.8" stroke="#4d4a1e" stroke-width="1.4" opacity=".85"/><path d="M684.5 567.0L694.4 557.1" stroke="#4d4a1e" stroke-width="1.4" opacity=".85"/></g><rect x="682.9" y="542.0" width="3.3" height="25.0" fill="url(#pole)"/><path d="M667.3 529.4C670.7 525.0 667.3 526.8 679.0 521.6C690.7 516.4 684.2 517.7 702.5 513.8C720.8 509.9 716.4 511.4 733.8 509.8C751.2 508.2 739.2 509.3 754.8 509.0C770.4 508.7 761.6 508.5 780.6 508.8C799.6 509.1 793.7 508.1 811.9 509.8C830.1 511.5 820.7 509.9 835.3 513.8C849.9 517.7 844.7 515.4 855.6 521.6C866.5 527.8 861.8 523.7 868.1 532.5C874.4 541.3 871.5 537.6 874.4 548.0C877.3 558.4 876.7 554.4 876.7 563.8C876.7 573.2 878.3 569.0 874.4 576.3C870.5 583.6 873.3 580.7 865.0 585.6C856.7 590.5 860.3 589.2 849.4 591.0C838.5 592.8 843.1 592.8 832.2 591.0C821.3 589.2 824.4 590.5 816.6 585.6C808.8 580.7 815.6 584.6 808.8 576.3C802.0 568.0 805.7 568.9 796.3 560.6C786.9 552.3 795.4 556.0 780.6 551.3C765.8 546.6 770.7 548.6 752.0 546.5C733.3 544.4 740.9 546.0 724.4 545.0C707.9 544.0 717.6 545.0 702.5 543.4C687.4 541.8 690.2 543.2 679.0 540.3C667.8 537.4 672.8 538.4 668.9 534.8C665.0 531.2 663.9 533.8 667.3 529.4Z" transform="translate(0,2.5)" fill="#35280e" stroke="#4a3c1a" stroke-width="0.5"/><path d="M667.3 529.4C670.7 525.0 667.3 526.8 679.0 521.6C690.7 516.4 684.2 517.7 702.5 513.8C720.8 509.9 716.4 511.4 733.8 509.8C751.2 508.2 739.2 509.3 754.8 509.0C770.4 508.7 761.6 508.5 780.6 508.8C799.6 509.1 793.7 508.1 811.9 509.8C830.1 511.5 820.7 509.9 835.3 513.8C849.9 517.7 844.7 515.4 855.6 521.6C866.5 527.8 861.8 523.7 868.1 532.5C874.4 541.3 871.5 537.6 874.4 548.0C877.3 558.4 876.7 554.4 876.7 563.8C876.7 573.2 878.3 569.0 874.4 576.3C870.5 583.6 873.3 580.7 865.0 585.6C856.7 590.5 860.3 589.2 849.4 591.0C838.5 592.8 843.1 592.8 832.2 591.0C821.3 589.2 824.4 590.5 816.6 585.6C808.8 580.7 815.6 584.6 808.8 576.3C802.0 568.0 805.7 568.9 796.3 560.6C786.9 552.3 795.4 556.0 780.6 551.3C765.8 546.6 770.7 548.6 752.0 546.5C733.3 544.4 740.9 546.0 724.4 545.0C707.9 544.0 717.6 545.0 702.5 543.4C687.4 541.8 690.2 543.2 679.0 540.3C667.8 537.4 672.8 538.4 668.9 534.8C665.0 531.2 663.9 533.8 667.3 529.4Z" fill="#958247"/><g clip-path="url(#cE)"><g filter="url(#bl)"><g fill="none" stroke-linejoin="round" stroke="#a26a32"><path d="M657 526L663 523L668 521L674 518L679 515L685 513L690 511L695 506L699 502L705 501" stroke-width="10.5"/><path d="M658 571L662 566L667 562L670 557L675 554L680 550L684 546L691 544L695 540L700 537L704 533L711 531L715 528L721 525L726 521L731 519L736 515L739 510L744 505L749 502L754 500" stroke-width="9.4"/><path d="M676 598L682 596L687 593L691 589L694 583L699 579L704 576L710 574L714 569L717 564L723 561L727 556L731 552L736 548L741 546L746 542L750 537L756 535L758 528L762 523L767 520L771 515L776 512L781 509L787 506L792 503" stroke-width="9.3"/><path d="M719 600L723 595L727 591L733 588L737 583L741 579L745 574L748 569L754 566L756 561L760 555L765 552L769 548L774 544L777 539L783 536L787 532L790 527L796 524L800 520L804 514L809 512L812 506L817 503L822 499" stroke-width="8.9"/><path d="M762 600L764 594L768 589L773 586L776 580L781 576L786 572L790 568L794 564L797 559L800 553L804 549L807 543L810 538L814 533L819 530L823 526L827 521L831 517L835 512L838 507L842 502" stroke-width="12.2"/><path d="M804 599L805 593L808 587L813 583L816 578L818 572L824 569L828 565L830 558L833 554L838 550L841 544L844 539L846 533L851 530L855 525L860 521L865 517L865 510L868 504L872 500" stroke-width="12.3"/><path d="M833 596L837 591L841 586L845 582L845 575L848 570L852 565L853 559L858 555L861 549L863 544L866 538L868 533L873 529L877 524L880 519L881 512L884 507" stroke-width="11.0"/><path d="M860 597L862 591L863 585L866 580L868 574L869 568L875 564L876 558L879 553L882 548L884 542L886 536" stroke-width="10.3"/></g><g fill="none" stroke-linejoin="round" stroke="#8d5020"><path d="M657 526L663 523L668 521L674 518L679 515L685 513L690 511L695 506L699 502L705 501" stroke-width="8.9"/><path d="M658 571L662 566L667 562L670 557L675 554L680 550L684 546L691 544L695 540L700 537L704 533L711 531L715 528L721 525L726 521L731 519L736 515L739 510L744 505L749 502L754 500" stroke-width="8.0"/><path d="M676 598L682 596L687 593L691 589L694 583L699 579L704 576L710 574L714 569L717 564L723 561L727 556L731 552L736 548L741 546L746 542L750 537L756 535L758 528L762 523L767 520L771 515L776 512L781 509L787 506L792 503" stroke-width="7.9"/><path d="M719 600L723 595L727 591L733 588L737 583L741 579L745 574L748 569L754 566L756 561L760 555L765 552L769 548L774 544L777 539L783 536L787 532L790 527L796 524L800 520L804 514L809 512L812 506L817 503L822 499" stroke-width="7.6"/><path d="M762 600L764 594L768 589L773 586L776 580L781 576L786 572L790 568L794 564L797 559L800 553L804 549L807 543L810 538L814 533L819 530L823 526L827 521L831 517L835 512L838 507L842 502" stroke-width="10.4"/><path d="M804 599L805 593L808 587L813 583L816 578L818 572L824 569L828 565L830 558L833 554L838 550L841 544L844 539L846 533L851 530L855 525L860 521L865 517L865 510L868 504L872 500" stroke-width="10.5"/><path d="M833 596L837 591L841 586L845 582L845 575L848 570L852 565L853 559L858 555L861 549L863 544L866 538L868 533L873 529L877 524L880 519L881 512L884 507" stroke-width="9.4"/><path d="M860 597L862 591L863 585L866 580L868 574L869 568L875 564L876 558L879 553L882 548L884 542L886 536" stroke-width="8.8"/></g><g fill="none" stroke-linejoin="round" stroke="#7a3e14"><path d="M657 526L663 523L668 521L674 518L679 515L685 513L690 511L695 506L699 502L705 501" stroke-width="7.3"/><path d="M658 571L662 566L667 562L670 557L675 554L680 550L684 546L691 544L695 540L700 537L704 533L711 531L715 528L721 525L726 521L731 519L736 515L739 510L744 505L749 502L754 500" stroke-width="6.6"/><path d="M676 598L682 596L687 593L691 589L694 583L699 579L704 576L710 574L714 569L717 564L723 561L727 556L731 552L736 548L741 546L746 542L750 537L756 535L758 528L762 523L767 520L771 515L776 512L781 509L787 506L792 503" stroke-width="6.5"/><path d="M719 600L723 595L727 591L733 588L737 583L741 579L745 574L748 569L754 566L756 561L760 555L765 552L769 548L774 544L777 539L783 536L787 532L790 527L796 524L800 520L804 514L809 512L812 506L817 503L822 499" stroke-width="6.2"/><path d="M762 600L764 594L768 589L773 586L776 580L781 576L786 572L790 568L794 564L797 559L800 553L804 549L807 543L810 538L814 533L819 530L823 526L827 521L831 517L835 512L838 507L842 502" stroke-width="8.5"/><path d="M804 599L805 593L808 587L813 583L816 578L818 572L824 569L828 565L830 558L833 554L838 550L841 544L844 539L846 533L851 530L855 525L860 521L865 517L865 510L868 504L872 500" stroke-width="8.6"/><path d="M833 596L837 591L841 586L845 582L845 575L848 570L852 565L853 559L858 555L861 549L863 544L866 538L868 533L873 529L877 524L880 519L881 512L884 507" stroke-width="7.7"/><path d="M860 597L862 591L863 585L866 580L868 574L869 568L875 564L876 558L879 553L882 548L884 542L886 536" stroke-width="7.2"/></g></g><path d="M839.8 582.5L860.7 555.7" stroke="#4d4a1e" stroke-width="1.4" opacity=".85"/><path d="M822.5 524.7L829.6 517.6" stroke="#4d4a1e" stroke-width="1.4" opacity=".85"/><path d="M684.5 529.4L690.2 523.7" stroke="#4d4a1e" stroke-width="1.4" opacity=".85"/></g><rect x="820.9" y="509.0" width="3.3" height="15.7" fill="url(#pole)"/><path d="M449.4 459.4C449.9 452.6 446.7 456.3 454.0 446.9C461.3 437.5 457.7 440.2 471.3 431.3C484.9 422.4 479.1 425.8 494.7 420.3C510.3 414.8 502.5 417.0 518.1 414.8C533.7 412.6 526.0 413.5 541.6 413.8C557.2 414.1 549.4 413.7 565.0 415.6C580.6 417.5 572.8 416.6 588.4 419.5C604.0 422.4 597.8 421.1 611.9 424.2C626.0 427.3 621.3 425.0 630.6 428.9C639.9 432.8 637.6 431.2 639.7 435.9C641.8 440.6 643.6 437.8 636.9 443.0C630.2 448.2 633.2 446.4 619.7 451.6C606.2 456.8 611.9 454.2 596.3 458.6C580.7 463.0 588.4 460.6 572.8 464.8C557.2 469.0 565.0 466.9 549.4 471.1C533.8 475.3 541.5 473.9 525.9 477.3C510.3 480.7 518.1 480.0 502.5 481.3C486.9 482.6 492.0 482.9 479.0 481.3C466.0 479.7 472.2 481.3 463.4 476.6C454.6 471.9 457.2 472.9 452.5 467.2C447.8 461.5 448.9 466.2 449.4 459.4Z" transform="translate(0,2)" fill="#a8925a" stroke="#4a3c1a" stroke-width="0.5"/><path d="M449.4 459.4C449.9 452.6 446.7 456.3 454.0 446.9C461.3 437.5 457.7 440.2 471.3 431.3C484.9 422.4 479.1 425.8 494.7 420.3C510.3 414.8 502.5 417.0 518.1 414.8C533.7 412.6 526.0 413.5 541.6 413.8C557.2 414.1 549.4 413.7 565.0 415.6C580.6 417.5 572.8 416.6 588.4 419.5C604.0 422.4 597.8 421.1 611.9 424.2C626.0 427.3 621.3 425.0 630.6 428.9C639.9 432.8 637.6 431.2 639.7 435.9C641.8 440.6 643.6 437.8 636.9 443.0C630.2 448.2 633.2 446.4 619.7 451.6C606.2 456.8 611.9 454.2 596.3 458.6C580.7 463.0 588.4 460.6 572.8 464.8C557.2 469.0 565.0 466.9 549.4 471.1C533.8 475.3 541.5 473.9 525.9 477.3C510.3 480.7 518.1 480.0 502.5 481.3C486.9 482.6 492.0 482.9 479.0 481.3C466.0 479.7 472.2 481.3 463.4 476.6C454.6 471.9 457.2 472.9 452.5 467.2C447.8 461.5 448.9 466.2 449.4 459.4Z" fill="#958247"/><g clip-path="url(#cD)"><g filter="url(#bl)"><g fill="none" stroke-linejoin="round" stroke="#a26a32"><path d="M447 487L446 481L443 475L444 469L444 463L443 457L445 451L445 445L445 439L446 433L447 427L446 421L445 415L447 409" stroke-width="9.6"/><path d="M469 488L466 482L466 476L466 470L467 464L470 458L467 452L468 446L469 440L470 434L469 428L469 422L469 416L467 410L469 404" stroke-width="10.4"/><path d="M497 489L496 483L498 477L495 471L497 465L498 459L498 453L497 447L499 441L497 435L497 429L496 423L495 417L495 411L497 405" stroke-width="13.8"/><path d="M519 490L519 484L519 478L519 472L521 466L520 460L522 454L523 448L524 442L526 436L523 430L523 424L525 418L526 412L526 406" stroke-width="11.2"/><path d="M542 490L542 484L541 478L542 472L543 466L544 461L543 454L543 448L545 443L547 437L546 431L545 424L544 418L544 412L546 407" stroke-width="12.4"/><path d="M574 486L573 480L573 474L574 468L574 462L573 456L573 449L574 444L572 437L572 431L573 425L573 419L575 414L574 408" stroke-width="11.1"/><path d="M597 486L596 480L597 474L595 468L598 462L599 456L599 450L601 444L599 438L597 432L599 426L599 420L598 414L600 408" stroke-width="13.2"/><path d="M625 487L625 481L626 475L627 469L625 463L625 457L629 451L630 445L630 439L629 433L627 427L626 421L627 415L628 409" stroke-width="9.7"/><path d="M649 488L649 476L650 470L649 464L650 458L649 452L649 446" stroke-width="14.0"/></g><g fill="none" stroke-linejoin="round" stroke="#8d5020"><path d="M447 487L446 481L443 475L444 469L444 463L443 457L445 451L445 445L445 439L446 433L447 427L446 421L445 415L447 409" stroke-width="8.2"/><path d="M469 488L466 482L466 476L466 470L467 464L470 458L467 452L468 446L469 440L470 434L469 428L469 422L469 416L467 410L469 404" stroke-width="8.9"/><path d="M497 489L496 483L498 477L495 471L497 465L498 459L498 453L497 447L499 441L497 435L497 429L496 423L495 417L495 411L497 405" stroke-width="11.7"/><path d="M519 490L519 484L519 478L519 472L521 466L520 460L522 454L523 448L524 442L526 436L523 430L523 424L525 418L526 412L526 406" stroke-width="9.5"/><path d="M542 490L542 484L541 478L542 472L543 466L544 461L543 454L543 448L545 443L547 437L546 431L545 424L544 418L544 412L546 407" stroke-width="10.6"/><path d="M574 486L573 480L573 474L574 468L574 462L573 456L573 449L574 444L572 437L572 431L573 425L573 419L575 414L574 408" stroke-width="9.5"/><path d="M597 486L596 480L597 474L595 468L598 462L599 456L599 450L601 444L599 438L597 432L599 426L599 420L598 414L600 408" stroke-width="11.2"/><path d="M625 487L625 481L626 475L627 469L625 463L625 457L629 451L630 445L630 439L629 433L627 427L626 421L627 415L628 409" stroke-width="8.3"/><path d="M649 488L649 476L650 470L649 464L650 458L649 452L649 446" stroke-width="11.9"/></g><g fill="none" stroke-linejoin="round" stroke="#7a3e14"><path d="M447 487L446 481L443 475L444 469L444 463L443 457L445 451L445 445L445 439L446 433L447 427L446 421L445 415L447 409" stroke-width="6.7"/><path d="M469 488L466 482L466 476L466 470L467 464L470 458L467 452L468 446L469 440L470 434L469 428L469 422L469 416L467 410L469 404" stroke-width="7.3"/><path d="M497 489L496 483L498 477L495 471L497 465L498 459L498 453L497 447L499 441L497 435L497 429L496 423L495 417L495 411L497 405" stroke-width="9.6"/><path d="M519 490L519 484L519 478L519 472L521 466L520 460L522 454L523 448L524 442L526 436L523 430L523 424L525 418L526 412L526 406" stroke-width="7.8"/><path d="M542 490L542 484L541 478L542 472L543 466L544 461L543 454L543 448L545 443L547 437L546 431L545 424L544 418L544 412L546 407" stroke-width="8.7"/><path d="M574 486L573 480L573 474L574 468L574 462L573 456L573 449L574 444L572 437L572 431L573 425L573 419L575 414L574 408" stroke-width="7.8"/><path d="M597 486L596 480L597 474L595 468L598 462L599 456L599 450L601 444L599 438L597 432L599 426L599 420L598 414L600 408" stroke-width="9.2"/><path d="M625 487L625 481L626 475L627 469L625 463L625 457L629 451L630 445L630 439L629 433L627 427L626 421L627 415L628 409" stroke-width="6.8"/><path d="M649 488L649 476L650 470L649 464L650 458L649 452L649 446" stroke-width="9.8"/></g></g><ellipse cx="633.0" cy="436.0" rx="9.0" ry="6.0" fill="#1c1505" opacity="0.75" filter="url(#bs)" transform="rotate(0 633.0 436.0)"/><path d="M487.7 468.8L494.1 462.4" stroke="#4d4a1e" stroke-width="1.4" opacity=".85"/><path d="M518.1 432.0L524.5 425.6" stroke="#4d4a1e" stroke-width="1.4" opacity=".85"/></g><rect x="486.1" y="452.0" width="3.3" height="16.8" fill="url(#pole)"/><rect x="516.5" y="416.4" width="3.3" height="15.6" fill="url(#pole)"/><rect x="486.1" y="482.5" width="3.3" height="193.5" fill="url(#pole)"/><rect x="516.5" y="481.0" width="3.3" height="159.0" fill="url(#pole)"/><path d="M595.0 362.0C578.5 369.3 592.5 368.8 590.5 380.0C588.5 391.2 587.2 387.3 589.0 395.6C590.8 403.9 589.0 400.5 596.0 405.0C603.0 409.5 600.1 408.3 610.0 409.0C619.9 409.7 615.3 409.7 625.6 407.0C635.9 404.3 629.5 407.0 641.0 401.0C652.5 395.0 647.4 396.0 660.0 389.0C672.6 382.0 665.3 386.4 678.8 380.0C692.3 373.6 696.9 376.5 700.6 369.8C704.3 363.1 710.2 363.9 690.0 360.0C669.8 356.1 671.7 357.3 640.0 358.0C608.3 358.7 611.5 354.7 595.0 362.0Z" transform="translate(0,2)" fill="#35280e" stroke="#4a3c1a" stroke-width="0.5"/><path d="M595.0 362.0C578.5 369.3 592.5 368.8 590.5 380.0C588.5 391.2 587.2 387.3 589.0 395.6C590.8 403.9 589.0 400.5 596.0 405.0C603.0 409.5 600.1 408.3 610.0 409.0C619.9 409.7 615.3 409.7 625.6 407.0C635.9 404.3 629.5 407.0 641.0 401.0C652.5 395.0 647.4 396.0 660.0 389.0C672.6 382.0 665.3 386.4 678.8 380.0C692.3 373.6 696.9 376.5 700.6 369.8C704.3 363.1 710.2 363.9 690.0 360.0C669.8 356.1 671.7 357.3 640.0 358.0C608.3 358.7 611.5 354.7 595.0 362.0Z" fill="#958247"/><g clip-path="url(#cB)"><g filter="url(#bl)"><g fill="none" stroke-linejoin="round" stroke="#a26a32"><path d="M691 351L697 352L702 355L708 357" stroke-width="6.9"/><path d="M659 348L665 350L670 354L675 356L681 359L687 360L693 362L697 365L702 370L708 372" stroke-width="5.9"/><path d="M632 349L637 351L643 353L649 355L653 360L658 364L664 364L669 368L675 369L680 373L686 374L691 378L696 381L702 383L707 386" stroke-width="5.3"/><path d="M605 349L610 351L616 354L621 358L626 360L632 362L637 365L642 369L648 370L653 374L658 377L663 379L669 381L674 385L680 386L685 391L689 394L695 396L700 400L706 401" stroke-width="6.0"/><path d="M583 352L588 356L593 358L598 362L604 364L610 365L614 370L620 372L626 374L631 377L637 379L642 381L647 384L652 388L658 390L664 392L669 394L674 398L680 400L685 403L690 407L694 411L699 414L705 416" stroke-width="5.1"/><path d="M583 364L589 366L594 369L600 372L605 376L610 378L615 382L621 383L625 388L631 390L637 392L641 396L647 399L652 402L657 405L663 406L668 409L673 413L679 416" stroke-width="6.6"/><path d="M582 380L587 383L593 385L598 388L604 390L609 394L615 396L620 399L626 401L631 403L636 406L641 409L647 412L652 415L657 418" stroke-width="5.3"/><path d="M582 394L587 398L592 400L598 402L602 406L608 409L613 412L619 414L624 417" stroke-width="5.9"/><path d="M583 405L588 408L593 412L598 415L604 417" stroke-width="5.8"/></g><g fill="none" stroke-linejoin="round" stroke="#8d5020"><path d="M691 351L697 352L702 355L708 357" stroke-width="5.9"/><path d="M659 348L665 350L670 354L675 356L681 359L687 360L693 362L697 365L702 370L708 372" stroke-width="5.0"/><path d="M632 349L637 351L643 353L649 355L653 360L658 364L664 364L669 368L675 369L680 373L686 374L691 378L696 381L702 383L707 386" stroke-width="4.5"/><path d="M605 349L610 351L616 354L621 358L626 360L632 362L637 365L642 369L648 370L653 374L658 377L663 379L669 381L674 385L680 386L685 391L689 394L695 396L700 400L706 401" stroke-width="5.1"/><path d="M583 352L588 356L593 358L598 362L604 364L610 365L614 370L620 372L626 374L631 377L637 379L642 381L647 384L652 388L658 390L664 392L669 394L674 398L680 400L685 403L690 407L694 411L699 414L705 416" stroke-width="4.3"/><path d="M583 364L589 366L594 369L600 372L605 376L610 378L615 382L621 383L625 388L631 390L637 392L641 396L647 399L652 402L657 405L663 406L668 409L673 413L679 416" stroke-width="5.6"/><path d="M582 380L587 383L593 385L598 388L604 390L609 394L615 396L620 399L626 401L631 403L636 406L641 409L647 412L652 415L657 418" stroke-width="4.5"/><path d="M582 394L587 398L592 400L598 402L602 406L608 409L613 412L619 414L624 417" stroke-width="5.1"/><path d="M583 405L588 408L593 412L598 415L604 417" stroke-width="4.9"/></g><g fill="none" stroke-linejoin="round" stroke="#7a3e14"><path d="M691 351L697 352L702 355L708 357" stroke-width="4.9"/><path d="M659 348L665 350L670 354L675 356L681 359L687 360L693 362L697 365L702 370L708 372" stroke-width="4.1"/><path d="M632 349L637 351L643 353L649 355L653 360L658 364L664 364L669 368L675 369L680 373L686 374L691 378L696 381L702 383L707 386" stroke-width="3.7"/><path d="M605 349L610 351L616 354L621 358L626 360L632 362L637 365L642 369L648 370L653 374L658 377L663 379L669 381L674 385L680 386L685 391L689 394L695 396L700 400L706 401" stroke-width="4.2"/><path d="M583 352L588 356L593 358L598 362L604 364L610 365L614 370L620 372L626 374L631 377L637 379L642 381L647 384L652 388L658 390L664 392L669 394L674 398L680 400L685 403L690 407L694 411L699 414L705 416" stroke-width="3.5"/><path d="M583 364L589 366L594 369L600 372L605 376L610 378L615 382L621 383L625 388L631 390L637 392L641 396L647 399L652 402L657 405L663 406L668 409L673 413L679 416" stroke-width="4.6"/><path d="M582 380L587 383L593 385L598 388L604 390L609 394L615 396L620 399L626 401L631 403L636 406L641 409L647 412L652 415L657 418" stroke-width="3.7"/><path d="M582 394L587 398L592 400L598 402L602 406L608 409L613 412L619 414L624 417" stroke-width="4.1"/><path d="M583 405L588 408L593 412L598 415L604 417" stroke-width="4.1"/></g></g><path d="M588 358L715 360L668 384L640 396L604 386L592 372Z" fill="#1c1505" opacity=".82" filter="url(#bs)"/><path d="M609.0 400.0L619.4 390.6" stroke="#4d4a1e" stroke-width="1.4" opacity=".85"/></g><path d="M658.4 394.8C658.4 398.4 657.9 398.2 669.4 400.3C680.9 402.4 677.2 401.3 692.8 401.0C708.4 400.7 700.7 400.2 716.3 399.5C731.9 398.8 725.7 399.8 739.7 398.8C753.7 397.8 751.1 398.8 758.4 396.4C765.7 394.0 763.7 395.6 761.6 391.7C759.5 387.8 762.1 390.2 752.2 384.7C742.3 379.2 743.9 379.7 731.9 375.3C719.9 370.9 725.7 372.4 716.3 371.4C706.9 370.4 714.2 369.1 703.8 372.2C693.4 375.3 696.5 375.1 685.0 380.8C673.5 386.5 678.3 384.7 669.4 389.4C660.5 394.1 658.4 391.2 658.4 394.8Z" fill="#958247"/><g clip-path="url(#cC)"><g filter="url(#bl)"><g fill="none" stroke-linejoin="round" stroke="#a26a32"><path d="M651 375L652 368L656 364" stroke-width="10.2"/><path d="M656 405L659 400L661 394L665 390L668 385L670 379L672 373L674 367L679 363" stroke-width="9.7"/><path d="M673 408L677 404L677 397L679 391L682 386L687 382L690 376L693 371L694 365" stroke-width="8.1"/><path d="M696 408L699 402L701 397L706 393L708 387L710 381L712 376L717 371L720 366" stroke-width="8.6"/><path d="M721 408L724 403L728 399L732 394L733 387L735 382L738 376L740 371L744 366" stroke-width="10.3"/><path d="M744 408L745 402L748 396L752 392L754 386L756 380L760 376L763 370L768 366" stroke-width="8.9"/><path d="M765 406L769 401L771 395" stroke-width="7.3"/></g><g fill="none" stroke-linejoin="round" stroke="#8d5020"><path d="M651 375L652 368L656 364" stroke-width="8.7"/><path d="M656 405L659 400L661 394L665 390L668 385L670 379L672 373L674 367L679 363" stroke-width="8.3"/><path d="M673 408L677 404L677 397L679 391L682 386L687 382L690 376L693 371L694 365" stroke-width="6.9"/><path d="M696 408L699 402L701 397L706 393L708 387L710 381L712 376L717 371L720 366" stroke-width="7.3"/><path d="M721 408L724 403L728 399L732 394L733 387L735 382L738 376L740 371L744 366" stroke-width="8.8"/><path d="M744 408L745 402L748 396L752 392L754 386L756 380L760 376L763 370L768 366" stroke-width="7.6"/><path d="M765 406L769 401L771 395" stroke-width="6.2"/></g><g fill="none" stroke-linejoin="round" stroke="#7a3e14"><path d="M651 375L652 368L656 364" stroke-width="7.1"/><path d="M656 405L659 400L661 394L665 390L668 385L670 379L672 373L674 367L679 363" stroke-width="6.8"/><path d="M673 408L677 404L677 397L679 391L682 386L687 382L690 376L693 371L694 365" stroke-width="5.7"/><path d="M696 408L699 402L701 397L706 393L708 387L710 381L712 376L717 371L720 366" stroke-width="6.0"/><path d="M721 408L724 403L728 399L732 394L733 387L735 382L738 376L740 371L744 366" stroke-width="7.2"/><path d="M744 408L745 402L748 396L752 392L754 386L756 380L760 376L763 370L768 366" stroke-width="6.2"/><path d="M765 406L769 401L771 395" stroke-width="5.1"/></g></g></g><path d="M658.4 394.8C658.4 398.4 657.9 398.2 669.4 400.3C680.9 402.4 677.2 401.3 692.8 401.0C708.4 400.7 700.7 400.2 716.3 399.5C731.9 398.8 725.7 399.8 739.7 398.8C753.7 397.8 751.1 398.8 758.4 396.4C765.7 394.0 763.7 395.6 761.6 391.7C759.5 387.8 762.1 390.2 752.2 384.7C742.3 379.2 743.9 379.7 731.9 375.3C719.9 370.9 725.7 372.4 716.3 371.4C706.9 370.4 714.2 369.1 703.8 372.2C693.4 375.3 696.5 375.1 685.0 380.8C673.5 386.5 678.3 384.7 669.4 389.4C660.5 394.1 658.4 391.2 658.4 394.8Z" fill="#1a1204" opacity="0.74"/><rect x="682.9" y="381.6" width="3.3" height="10.9" fill="url(#poled)"/><rect x="713.4" y="380.0" width="3.3" height="19.0" fill="url(#poled)"/><rect x="746.4" y="384.0" width="3.3" height="13.0" fill="url(#poled)"/><rect x="682.9" y="367.0" width="3.3" height="4.0" fill="url(#poled)"/><rect x="713.4" y="369.0" width="3.3" height="11.0" fill="url(#poled)"/><rect x="746.4" y="372.5" width="3.3" height="11.5" fill="url(#poled)"/><rect x="607.4" y="366.0" width="3.3" height="232.0" fill="url(#pole)"/><rect x="614.1" y="409.7" width="3.3" height="151.3" fill="url(#pole)"/><rect x="682.9" y="401.0" width="3.3" height="128.4" fill="url(#pole)"/><rect x="713.4" y="401.0" width="3.3" height="43.0" fill="url(#pole)"/><rect x="713.4" y="483.0" width="3.3" height="5.0" fill="url(#pole)"/><rect x="713.4" y="543.0" width="3.3" height="6.0" fill="url(#pole)"/><rect x="746.4" y="400.0" width="3.3" height="45.0" fill="url(#pole)"/><rect x="746.4" y="482.0" width="3.3" height="16.0" fill="url(#pole)"/><rect x="838.1" y="375.5" width="3.3" height="207.0" fill="url(#pole)"/><path d="M654 366V489" stroke="#bcbcbc" stroke-width=".7"/><path d="M669.7 366V487" stroke="#bcbcbc" stroke-width=".7"/><path d="M701.7 366V489" stroke="#bcbcbc" stroke-width=".7"/><path d="M707.2 366V486" stroke="#bcbcbc" stroke-width=".7"/><path d="M755.6 366V536" stroke="#bcbcbc" stroke-width=".7"/><path d="M758.75 366V536" stroke="#bcbcbc" stroke-width=".7"/><path d="M778.3 366V540" stroke="#bcbcbc" stroke-width=".7"/><path d="M579.5 347.2C580.5 342.8 576.9 345.1 583.4 337.8C589.9 330.5 586.0 333.6 599.0 325.3C612.0 317.0 604.2 320.6 622.5 312.8C640.8 305.0 633.0 307.6 653.8 301.9C674.6 296.2 664.2 298.5 685.0 295.6C705.8 292.7 695.5 293.3 716.3 293.3C737.1 293.3 726.7 292.2 747.5 295.6C768.3 299.0 758.0 296.6 778.8 303.4C799.6 310.2 789.2 305.5 810.0 315.9C830.8 326.3 825.7 324.3 841.3 334.7C856.9 345.1 848.8 338.9 856.9 347.2C865.0 355.5 865.5 352.9 865.5 359.7C865.5 366.5 867.6 363.3 856.9 367.5C846.2 371.7 854.2 370.5 833.4 372.2C812.6 373.9 817.8 373.0 794.4 372.5C771.0 372.0 783.9 372.5 763.1 370.6C742.3 368.7 752.7 369.0 731.9 366.7C711.1 364.4 721.4 364.9 700.6 363.6C679.8 362.3 690.2 362.8 669.4 362.8C648.6 362.8 658.9 364.1 638.1 363.6C617.3 363.1 623.6 363.6 606.9 361.3C590.2 359.0 597.0 360.0 588.1 356.6C579.2 353.2 583.2 354.2 580.3 351.1C577.4 348.0 578.5 351.6 579.5 347.2Z" transform="translate(0,4)" fill="#b09a58" stroke="#4a3c1a" stroke-width="0.5"/><g clip-path="url(#cA)" transform="translate(0,4)"><g filter="url(#bl)" opacity=".75"><g fill="none" stroke-linejoin="round" stroke="#a26a32"><path d="M571 306L574 301L578 296L583 292L587 287" stroke-width="14.3"/><path d="M574 356L575 350L580 346L581 339L586 336L589 331L591 325L594 320L599 316L602 310L605 305L608 300L613 296L618 292L621 287" stroke-width="12.9"/><path d="M588 380L593 376L597 371L600 366L604 362L606 356L610 351L614 347L618 342L620 336L625 332L630 328L634 324L636 318L640 314L644 309L648 304L651 300L655 295L660 291L662 285" stroke-width="13.2"/><path d="M620 377L624 373L628 369L634 366L639 361L641 355L645 351L650 348L654 343L656 337L660 333L666 329L670 325L674 321L678 316L681 311L684 306L688 302L691 296L695 292L697 285" stroke-width="13.1"/><path d="M650 381L652 375L657 370L661 367L667 363L671 359L673 353L675 347L679 342L685 340L689 335L694 332L696 326L699 320L705 317L708 312L712 308L716 303L723 301L727 297L732 293L735 288L740 284" stroke-width="11.3"/><path d="M687 382L692 379L696 374L700 370L704 365L709 362L711 355L714 350L719 347L722 342L726 337L730 332L735 329L739 324L745 321L747 316L751 311L756 307L761 303L765 299L769 294L773 290L778 286" stroke-width="10.6"/><path d="M736 379L740 375L744 370L750 367L754 363L757 358L760 352L765 348L769 344L774 340L778 336L783 333L788 329L791 324L796 320L798 314L801 308L806 304L811 301L814 296L819 292L824 289" stroke-width="12.1"/><path d="M772 379L778 377L783 374L787 369L790 363L795 360L798 355L803 351L807 347L814 345L817 340L821 335L828 334L834 331L838 327L842 322L847 319L851 314L854 308L858 304L864 303L867 297L872 293" stroke-width="14.0"/><path d="M817 381L823 379L828 375L832 370L835 365L840 362L844 357L847 352L852 348L859 346L864 343L867 338L873 335" stroke-width="13.3"/><path d="M868 380L871 375" stroke-width="12.7"/></g><g fill="none" stroke-linejoin="round" stroke="#8d5020"><path d="M571 306L574 301L578 296L583 292L587 287" stroke-width="12.2"/><path d="M574 356L575 350L580 346L581 339L586 336L589 331L591 325L594 320L599 316L602 310L605 305L608 300L613 296L618 292L621 287" stroke-width="11.0"/><path d="M588 380L593 376L597 371L600 366L604 362L606 356L610 351L614 347L618 342L620 336L625 332L630 328L634 324L636 318L640 314L644 309L648 304L651 300L655 295L660 291L662 285" stroke-width="11.2"/><path d="M620 377L624 373L628 369L634 366L639 361L641 355L645 351L650 348L654 343L656 337L660 333L666 329L670 325L674 321L678 316L681 311L684 306L688 302L691 296L695 292L697 285" stroke-width="11.2"/><path d="M650 381L652 375L657 370L661 367L667 363L671 359L673 353L675 347L679 342L685 340L689 335L694 332L696 326L699 320L705 317L708 312L712 308L716 303L723 301L727 297L732 293L735 288L740 284" stroke-width="9.7"/><path d="M687 382L692 379L696 374L700 370L704 365L709 362L711 355L714 350L719 347L722 342L726 337L730 332L735 329L739 324L745 321L747 316L751 311L756 307L761 303L765 299L769 294L773 290L778 286" stroke-width="9.1"/><path d="M736 379L740 375L744 370L750 367L754 363L757 358L760 352L765 348L769 344L774 340L778 336L783 333L788 329L791 324L796 320L798 314L801 308L806 304L811 301L814 296L819 292L824 289" stroke-width="10.3"/><path d="M772 379L778 377L783 374L787 369L790 363L795 360L798 355L803 351L807 347L814 345L817 340L821 335L828 334L834 331L838 327L842 322L847 319L851 314L854 308L858 304L864 303L867 297L872 293" stroke-width="11.9"/><path d="M817 381L823 379L828 375L832 370L835 365L840 362L844 357L847 352L852 348L859 346L864 343L867 338L873 335" stroke-width="11.3"/><path d="M868 380L871 375" stroke-width="10.9"/></g><g fill="none" stroke-linejoin="round" stroke="#7a3e14"><path d="M571 306L574 301L578 296L583 292L587 287" stroke-width="10.0"/><path d="M574 356L575 350L580 346L581 339L586 336L589 331L591 325L594 320L599 316L602 310L605 305L608 300L613 296L618 292L621 287" stroke-width="9.0"/><path d="M588 380L593 376L597 371L600 366L604 362L606 356L610 351L614 347L618 342L620 336L625 332L630 328L634 324L636 318L640 314L644 309L648 304L651 300L655 295L660 291L662 285" stroke-width="9.2"/><path d="M620 377L624 373L628 369L634 366L639 361L641 355L645 351L650 348L654 343L656 337L660 333L666 329L670 325L674 321L678 316L681 311L684 306L688 302L691 296L695 292L697 285" stroke-width="9.2"/><path d="M650 381L652 375L657 370L661 367L667 363L671 359L673 353L675 347L679 342L685 340L689 335L694 332L696 326L699 320L705 317L708 312L712 308L716 303L723 301L727 297L732 293L735 288L740 284" stroke-width="7.9"/><path d="M687 382L692 379L696 374L700 370L704 365L709 362L711 355L714 350L719 347L722 342L726 337L730 332L735 329L739 324L745 321L747 316L751 311L756 307L761 303L765 299L769 294L773 290L778 286" stroke-width="7.4"/><path d="M736 379L740 375L744 370L750 367L754 363L757 358L760 352L765 348L769 344L774 340L778 336L783 333L788 329L791 324L796 320L798 314L801 308L806 304L811 301L814 296L819 292L824 289" stroke-width="8.5"/><path d="M772 379L778 377L783 374L787 369L790 363L795 360L798 355L803 351L807 347L814 345L817 340L821 335L828 334L834 331L838 327L842 322L847 319L851 314L854 308L858 304L864 303L867 297L872 293" stroke-width="9.8"/><path d="M817 381L823 379L828 375L832 370L835 365L840 362L844 357L847 352L852 348L859 346L864 343L867 338L873 335" stroke-width="9.3"/><path d="M868 380L871 375" stroke-width="8.9"/></g></g></g><path d="M579.5 347.2C580.5 342.8 576.9 345.1 583.4 337.8C589.9 330.5 586.0 333.6 599.0 325.3C612.0 317.0 604.2 320.6 622.5 312.8C640.8 305.0 633.0 307.6 653.8 301.9C674.6 296.2 664.2 298.5 685.0 295.6C705.8 292.7 695.5 293.3 716.3 293.3C737.1 293.3 726.7 292.2 747.5 295.6C768.3 299.0 758.0 296.6 778.8 303.4C799.6 310.2 789.2 305.5 810.0 315.9C830.8 326.3 825.7 324.3 841.3 334.7C856.9 345.1 848.8 338.9 856.9 347.2C865.0 355.5 865.5 352.9 865.5 359.7C865.5 366.5 867.6 363.3 856.9 367.5C846.2 371.7 854.2 370.5 833.4 372.2C812.6 373.9 817.8 373.0 794.4 372.5C771.0 372.0 783.9 372.5 763.1 370.6C742.3 368.7 752.7 369.0 731.9 366.7C711.1 364.4 721.4 364.9 700.6 363.6C679.8 362.3 690.2 362.8 669.4 362.8C648.6 362.8 658.9 364.1 638.1 363.6C617.3 363.1 623.6 363.6 606.9 361.3C590.2 359.0 597.0 360.0 588.1 356.6C579.2 353.2 583.2 354.2 580.3 351.1C577.4 348.0 578.5 351.6 579.5 347.2Z" transform="translate(0,1)" fill="none" stroke="#b09a58" stroke-width="2.2"/><path d="M579.5 347.2C580.5 342.8 576.9 345.1 583.4 337.8C589.9 330.5 586.0 333.6 599.0 325.3C612.0 317.0 604.2 320.6 622.5 312.8C640.8 305.0 633.0 307.6 653.8 301.9C674.6 296.2 664.2 298.5 685.0 295.6C705.8 292.7 695.5 293.3 716.3 293.3C737.1 293.3 726.7 292.2 747.5 295.6C768.3 299.0 758.0 296.6 778.8 303.4C799.6 310.2 789.2 305.5 810.0 315.9C830.8 326.3 825.7 324.3 841.3 334.7C856.9 345.1 848.8 338.9 856.9 347.2C865.0 355.5 865.5 352.9 865.5 359.7C865.5 366.5 867.6 363.3 856.9 367.5C846.2 371.7 854.2 370.5 833.4 372.2C812.6 373.9 817.8 373.0 794.4 372.5C771.0 372.0 783.9 372.5 763.1 370.6C742.3 368.7 752.7 369.0 731.9 366.7C711.1 364.4 721.4 364.9 700.6 363.6C679.8 362.3 690.2 362.8 669.4 362.8C648.6 362.8 658.9 364.1 638.1 363.6C617.3 363.1 623.6 363.6 606.9 361.3C590.2 359.0 597.0 360.0 588.1 356.6C579.2 353.2 583.2 354.2 580.3 351.1C577.4 348.0 578.5 351.6 579.5 347.2Z" transform="translate(0,3)" fill="none" stroke="#b09a58" stroke-width="2.2"/><path d="M579.5 347.2C580.5 342.8 576.9 345.1 583.4 337.8C589.9 330.5 586.0 333.6 599.0 325.3C612.0 317.0 604.2 320.6 622.5 312.8C640.8 305.0 633.0 307.6 653.8 301.9C674.6 296.2 664.2 298.5 685.0 295.6C705.8 292.7 695.5 293.3 716.3 293.3C737.1 293.3 726.7 292.2 747.5 295.6C768.3 299.0 758.0 296.6 778.8 303.4C799.6 310.2 789.2 305.5 810.0 315.9C830.8 326.3 825.7 324.3 841.3 334.7C856.9 345.1 848.8 338.9 856.9 347.2C865.0 355.5 865.5 352.9 865.5 359.7C865.5 366.5 867.6 363.3 856.9 367.5C846.2 371.7 854.2 370.5 833.4 372.2C812.6 373.9 817.8 373.0 794.4 372.5C771.0 372.0 783.9 372.5 763.1 370.6C742.3 368.7 752.7 369.0 731.9 366.7C711.1 364.4 721.4 364.9 700.6 363.6C679.8 362.3 690.2 362.8 669.4 362.8C648.6 362.8 658.9 364.1 638.1 363.6C617.3 363.1 623.6 363.6 606.9 361.3C590.2 359.0 597.0 360.0 588.1 356.6C579.2 353.2 583.2 354.2 580.3 351.1C577.4 348.0 578.5 351.6 579.5 347.2Z" fill="#958247"/><g clip-path="url(#cA)"><g filter="url(#bl)"><g fill="none" stroke-linejoin="round" stroke="#a26a32"><path d="M571 306L574 301L578 296L583 292L587 287" stroke-width="14.3"/><path d="M574 356L575 350L580 346L581 339L586 336L589 331L591 325L594 320L599 316L602 310L605 305L608 300L613 296L618 292L621 287" stroke-width="12.9"/><path d="M588 380L593 376L597 371L600 366L604 362L606 356L610 351L614 347L618 342L620 336L625 332L630 328L634 324L636 318L640 314L644 309L648 304L651 300L655 295L660 291L662 285" stroke-width="13.2"/><path d="M620 377L624 373L628 369L634 366L639 361L641 355L645 351L650 348L654 343L656 337L660 333L666 329L670 325L674 321L678 316L681 311L684 306L688 302L691 296L695 292L697 285" stroke-width="13.1"/><path d="M650 381L652 375L657 370L661 367L667 363L671 359L673 353L675 347L679 342L685 340L689 335L694 332L696 326L699 320L705 317L708 312L712 308L716 303L723 301L727 297L732 293L735 288L740 284" stroke-width="11.3"/><path d="M687 382L692 379L696 374L700 370L704 365L709 362L711 355L714 350L719 347L722 342L726 337L730 332L735 329L739 324L745 321L747 316L751 311L756 307L761 303L765 299L769 294L773 290L778 286" stroke-width="10.6"/><path d="M736 379L740 375L744 370L750 367L754 363L757 358L760 352L765 348L769 344L774 340L778 336L783 333L788 329L791 324L796 320L798 314L801 308L806 304L811 301L814 296L819 292L824 289" stroke-width="12.1"/><path d="M772 379L778 377L783 374L787 369L790 363L795 360L798 355L803 351L807 347L814 345L817 340L821 335L828 334L834 331L838 327L842 322L847 319L851 314L854 308L858 304L864 303L867 297L872 293" stroke-width="14.0"/><path d="M817 381L823 379L828 375L832 370L835 365L840 362L844 357L847 352L852 348L859 346L864 343L867 338L873 335" stroke-width="13.3"/><path d="M868 380L871 375" stroke-width="12.7"/></g><g fill="none" stroke-linejoin="round" stroke="#8d5020"><path d="M571 306L574 301L578 296L583 292L587 287" stroke-width="12.2"/><path d="M574 356L575 350L580 346L581 339L586 336L589 331L591 325L594 320L599 316L602 310L605 305L608 300L613 296L618 292L621 287" stroke-width="11.0"/><path d="M588 380L593 376L597 371L600 366L604 362L606 356L610 351L614 347L618 342L620 336L625 332L630 328L634 324L636 318L640 314L644 309L648 304L651 300L655 295L660 291L662 285" stroke-width="11.2"/><path d="M620 377L624 373L628 369L634 366L639 361L641 355L645 351L650 348L654 343L656 337L660 333L666 329L670 325L674 321L678 316L681 311L684 306L688 302L691 296L695 292L697 285" stroke-width="11.2"/><path d="M650 381L652 375L657 370L661 367L667 363L671 359L673 353L675 347L679 342L685 340L689 335L694 332L696 326L699 320L705 317L708 312L712 308L716 303L723 301L727 297L732 293L735 288L740 284" stroke-width="9.7"/><path d="M687 382L692 379L696 374L700 370L704 365L709 362L711 355L714 350L719 347L722 342L726 337L730 332L735 329L739 324L745 321L747 316L751 311L756 307L761 303L765 299L769 294L773 290L778 286" stroke-width="9.1"/><path d="M736 379L740 375L744 370L750 367L754 363L757 358L760 352L765 348L769 344L774 340L778 336L783 333L788 329L791 324L796 320L798 314L801 308L806 304L811 301L814 296L819 292L824 289" stroke-width="10.3"/><path d="M772 379L778 377L783 374L787 369L790 363L795 360L798 355L803 351L807 347L814 345L817 340L821 335L828 334L834 331L838 327L842 322L847 319L851 314L854 308L858 304L864 303L867 297L872 293" stroke-width="11.9"/><path d="M817 381L823 379L828 375L832 370L835 365L840 362L844 357L847 352L852 348L859 346L864 343L867 338L873 335" stroke-width="11.3"/><path d="M868 380L871 375" stroke-width="10.9"/></g><g fill="none" stroke-linejoin="round" stroke="#7a3e14"><path d="M571 306L574 301L578 296L583 292L587 287" stroke-width="10.0"/><path d="M574 356L575 350L580 346L581 339L586 336L589 331L591 325L594 320L599 316L602 310L605 305L608 300L613 296L618 292L621 287" stroke-width="9.0"/><path d="M588 380L593 376L597 371L600 366L604 362L606 356L610 351L614 347L618 342L620 336L625 332L630 328L634 324L636 318L640 314L644 309L648 304L651 300L655 295L660 291L662 285" stroke-width="9.2"/><path d="M620 377L624 373L628 369L634 366L639 361L641 355L645 351L650 348L654 343L656 337L660 333L666 329L670 325L674 321L678 316L681 311L684 306L688 302L691 296L695 292L697 285" stroke-width="9.2"/><path d="M650 381L652 375L657 370L661 367L667 363L671 359L673 353L675 347L679 342L685 340L689 335L694 332L696 326L699 320L705 317L708 312L712 308L716 303L723 301L727 297L732 293L735 288L740 284" stroke-width="7.9"/><path d="M687 382L692 379L696 374L700 370L704 365L709 362L711 355L714 350L719 347L722 342L726 337L730 332L735 329L739 324L745 321L747 316L751 311L756 307L761 303L765 299L769 294L773 290L778 286" stroke-width="7.4"/><path d="M736 379L740 375L744 370L750 367L754 363L757 358L760 352L765 348L769 344L774 340L778 336L783 333L788 329L791 324L796 320L798 314L801 308L806 304L811 301L814 296L819 292L824 289" stroke-width="8.5"/><path d="M772 379L778 377L783 374L787 369L790 363L795 360L798 355L803 351L807 347L814 345L817 340L821 335L828 334L834 331L838 327L842 322L847 319L851 314L854 308L858 304L864 303L867 297L872 293" stroke-width="9.8"/><path d="M817 381L823 379L828 375L832 370L835 365L840 362L844 357L847 352L852 348L859 346L864 343L867 338L873 335" stroke-width="9.3"/><path d="M868 380L871 375" stroke-width="8.9"/></g></g><path d="M608.9 346.4L615.3 340.0" stroke="#4d4a1e" stroke-width="1.4" opacity=".85"/><path d="M684.2 313.6L690.6 307.2" stroke="#4d4a1e" stroke-width="1.4" opacity=".85"/><path d="M748.3 313.6L754.7 307.2" stroke="#4d4a1e" stroke-width="1.4" opacity=".85"/><path d="M840.0 364.4L846.4 358.0" stroke="#4d4a1e" stroke-width="1.4" opacity=".85"/><path d="M714.7 300.0L721.1 293.6" stroke="#4d4a1e" stroke-width="1.4" opacity=".85"/></g><rect x="607.2" y="331.6" width="3.3" height="14.8" fill="url(#pole)"/><rect x="682.6" y="299.5" width="3.3" height="14.1" fill="url(#pole)"/><rect x="746.6" y="298.8" width="3.3" height="14.9" fill="url(#pole)"/><rect x="838.4" y="349.5" width="3.3" height="14.9" fill="url(#pole)"/><rect x="713.1" y="286.0" width="3.3" height="14.0" fill="url(#pole)"/><path d="M797.8 372V452Q797 462 784 463.5" fill="none" stroke="#555" stroke-width=".9"/><path d="M616 410Q617 438 628 452L633 456Q652 472 657 505" fill="none" stroke="#6a6a6a" stroke-width=".9"/><path d="M628 450l7 5" stroke="#ccc" stroke-width="2.4"/><path d="M628 450l7 5" stroke="#888" stroke-width=".6" fill="none"/><path d="M662 486Q664 474 676 476Q700 478 712 484" fill="none" stroke="#8a8a8a" stroke-width=".8"/><path d="M701 568Q678 584 677 596Q684 612 716 607Q752 601 772 613Q802 628 830 617" fill="none" stroke="#666" stroke-width=".7"/><path d="M737 574Q733 640 762 655Q780 662 793 640" fill="none" stroke="#222" stroke-width=".8"/><path d="M770 560Q782 600 806 620Q822 632 829 615" fill="none" stroke="#8a8a8a" stroke-width=".8"/><path d="M748 524Q770 522 777 540Q780 552 774 556" fill="none" stroke="#8a8a8a" stroke-width=".8"/><rect x="787" y="632.500" width="12" height="6" fill="#c9c9c9" stroke="#999" stroke-width=".5"/><path d="M786 583l8 5M756 524l7 3" stroke="#ddd" stroke-width="2.2"/><ellipse cx="736.9" cy="463.75" rx="44.5" ry="19.5" fill="url(#ufo)" stroke="#1a1a1a" stroke-width=".8"/><path d="M695.5 461.4 A41.4 15.4 0 0 0 778.3 461.4" fill="none" stroke="#111" stroke-width="1"/><path d="M700.0 460.0 A36.9 13.8 0 0 0 773.8 460.0" fill="none" stroke="#111" stroke-width="1"/><path d="M704.4 458.7 A32.5 12.1 0 0 0 769.4 458.7" fill="none" stroke="#111" stroke-width="1"/><ellipse cx="729" cy="456" rx="26" ry="8.5" fill="none" stroke="#222" stroke-width=".8"/><path d="M768 455l7-6 3 2-6 8z" fill="#e6e6e6" stroke="#aaa" stroke-width=".5"/><ellipse cx="735" cy="511.5" rx="20" ry="13.3" fill="url(#ufo)" stroke="#777" stroke-width=".5"/><path d="M716 520 A20 12 0 0 0 752 519" fill="none" stroke="#111" stroke-width=".9"/><path d="M722 525 A18 10 0 0 0 748 524" fill="none" stroke="#111" stroke-width=".8"/><ellipse cx="688.4" cy="504.7" rx="48.8" ry="19.2" fill="url(#ufo)" stroke="#1a1a1a" stroke-width=".8"/><path d="M643.0 502.4 A45.4 15.2 0 0 0 733.8 502.4" fill="none" stroke="#111" stroke-width="1"/><path d="M647.9 501.1 A40.5 13.5 0 0 0 728.9 501.1" fill="none" stroke="#111" stroke-width="1"/><path d="M652.8 499.7 A35.6 11.9 0 0 0 724.0 499.7" fill="none" stroke="#111" stroke-width="1"/><path d="M657.7 498.4 A30.7 10.3 0 0 0 719.1 498.4" fill="none" stroke="#111" stroke-width="1"/><path d="M668 483q4-6 9-1l3 7q-5 3-9 0z" fill="#e4e4e4" stroke="#aaa" stroke-width=".5"/><path d="M660 505Q690 488 726 494" fill="none" stroke="#777" stroke-width=".7"/><path d="M697 508Q700 497 722 496" fill="none" stroke="#333" stroke-width=".8"/><ellipse cx="720" cy="561" rx="23" ry="12.2" fill="url(#ufo)" stroke="#b5b5b5" stroke-width=".5"/><ellipse cx="750" cy="548.5" rx="25" ry="13.7" fill="url(#ufo)" stroke="#1a1a1a" stroke-width=".8"/><path d="M726.8 546.9 A23.2 10.8 0 0 0 773.2 546.9" fill="none" stroke="#111" stroke-width="1"/><path d="M729.2 545.9 A20.8 9.7 0 0 0 770.8 545.9" fill="none" stroke="#111" stroke-width="1"/><path d="M731.8 544.9 A18.2 8.5 0 0 0 768.2 544.9" fill="none" stroke="#111" stroke-width="1"/><path d="M700.600 299.500L740.500 301L736.600 338.600L696.700 336.300Z" fill="#c6c2be" opacity=".95"/><path d="M738 303L712 337L724 337.500L739.500 316Z" fill="#dad7d3" opacity=".7"/><path d="M740.500 301L736.600 338.600" stroke="#3a3a3a" stroke-width="1.100"/><g opacity=".94"><path d="M492.3 495.3C489.7 496.5 492.5 494.1 492.6 498.8C492.7 503.4 492.9 502.2 492.6 509.2C492.4 516.1 493.2 512.6 491.9 519.6C490.6 526.5 491.4 523.0 488.7 530.0C486.0 536.9 487.4 533.7 483.9 540.4C480.4 547.0 480.8 543.6 478.3 549.9C475.8 556.3 476.9 553.1 476.3 559.5C475.7 565.8 475.9 563.5 476.6 569.0C477.3 574.5 476.5 572.2 478.3 575.9C480.1 579.7 478.7 578.2 481.9 580.3C485.1 582.3 480.3 581.4 487.9 582.0C495.5 582.6 497.1 582.6 504.7 582.0C512.3 581.4 507.5 582.3 510.7 580.3C513.9 578.2 512.5 579.7 514.3 575.9C516.1 572.2 515.3 574.5 516.0 569.0C516.7 563.5 516.9 565.8 516.3 559.5C515.7 553.1 516.8 556.3 514.3 549.9C511.8 543.6 512.2 547.0 508.7 540.4C505.2 533.7 506.6 536.9 503.9 530.0C501.2 523.0 502.0 526.5 500.7 519.6C499.4 512.6 500.2 516.1 500.0 509.2C499.7 502.2 499.9 503.4 500.0 498.8C500.1 494.1 502.9 496.5 500.3 495.3C497.7 494.1 494.9 494.1 492.3 495.3Z" fill="url(#vase)" stroke="#9a9a9a" stroke-width=".5"/><path d="M492.3 495.3C489.7 496.5 492.5 494.1 492.6 498.8C492.7 503.4 492.9 502.2 492.6 509.2C492.4 516.1 493.2 512.6 491.9 519.6C490.6 526.5 491.4 523.0 488.7 530.0C486.0 536.9 487.4 533.7 483.9 540.4C480.4 547.0 480.8 543.6 478.3 549.9C475.8 556.3 476.9 553.1 476.3 559.5C475.7 565.8 475.9 563.5 476.6 569.0C477.3 574.5 476.5 572.2 478.3 575.9C480.1 579.7 478.7 578.2 481.9 580.3C485.1 582.3 480.3 581.4 487.9 582.0C495.5 582.6 497.1 582.6 504.7 582.0C512.3 581.4 507.5 582.3 510.7 580.3C513.9 578.2 512.5 579.7 514.3 575.9C516.1 572.2 515.3 574.5 516.0 569.0C516.7 563.5 516.9 565.8 516.3 559.5C515.7 553.1 516.8 556.3 514.3 549.9C511.8 543.6 512.2 547.0 508.7 540.4C505.2 533.7 506.6 536.9 503.9 530.0C501.2 523.0 502.0 526.5 500.7 519.6C499.4 512.6 500.2 516.1 500.0 509.2C499.7 502.2 499.9 503.4 500.0 498.8C500.1 494.1 502.9 496.5 500.3 495.3C497.7 494.1 494.9 494.1 492.3 495.3Z" fill="url(#vsh)"/><ellipse cx="496.3" cy="495.8" rx="4.0" ry="1.2" fill="#e8e8e8" stroke="#aaa" stroke-width=".4"/></g><g opacity=".94"><path d="M569.3 467.2C567.1 468.3 569.5 467.0 569.6 470.6C569.6 474.1 570.2 472.8 569.5 478.0C568.8 483.1 570.0 480.6 567.5 486.0C565.1 491.4 565.9 488.7 562.1 494.1C558.2 499.5 559.0 496.3 556.0 502.1C553.1 508.0 554.1 505.3 553.3 511.6C552.5 517.8 553.0 515.4 553.7 521.0C554.3 526.6 553.6 524.4 555.2 528.4C556.9 532.3 555.6 530.7 558.8 532.7C561.9 534.7 557.2 533.8 564.6 534.4C572.0 535.0 573.6 535.0 581.0 534.4C588.4 533.8 583.7 534.7 586.8 532.7C590.0 530.7 588.7 532.3 590.3 528.4C592.0 524.4 591.3 526.6 591.9 521.0C592.6 515.4 593.1 517.8 592.3 511.6C591.5 505.3 592.5 508.0 589.6 502.1C586.6 496.3 587.4 499.5 583.5 494.1C579.7 488.7 580.5 491.4 578.0 486.0C575.6 480.6 576.8 483.1 576.1 478.0C575.4 472.8 576.0 474.1 576.0 470.6C576.1 467.0 578.5 468.3 576.3 467.2C574.1 466.1 571.5 466.1 569.3 467.2Z" fill="url(#vase)" stroke="#9a9a9a" stroke-width=".5"/><path d="M569.3 467.2C567.1 468.3 569.5 467.0 569.6 470.6C569.6 474.1 570.2 472.8 569.5 478.0C568.8 483.1 570.0 480.6 567.5 486.0C565.1 491.4 565.9 488.7 562.1 494.1C558.2 499.5 559.0 496.3 556.0 502.1C553.1 508.0 554.1 505.3 553.3 511.6C552.5 517.8 553.0 515.4 553.7 521.0C554.3 526.6 553.6 524.4 555.2 528.4C556.9 532.3 555.6 530.7 558.8 532.7C561.9 534.7 557.2 533.8 564.6 534.4C572.0 535.0 573.6 535.0 581.0 534.4C588.4 533.8 583.7 534.7 586.8 532.7C590.0 530.7 588.7 532.3 590.3 528.4C592.0 524.4 591.3 526.6 591.9 521.0C592.6 515.4 593.1 517.8 592.3 511.6C591.5 505.3 592.5 508.0 589.6 502.1C586.6 496.3 587.4 499.5 583.5 494.1C579.7 488.7 580.5 491.4 578.0 486.0C575.6 480.6 576.8 483.1 576.1 478.0C575.4 472.8 576.0 474.1 576.0 470.6C576.1 467.0 578.5 468.3 576.3 467.2C574.1 466.1 571.5 466.1 569.3 467.2Z" fill="url(#vsh)"/><ellipse cx="572.8" cy="467.7" rx="3.5" ry="1.2" fill="#e8e8e8" stroke="#aaa" stroke-width=".4"/></g><g opacity=".94"><path d="M507.5 575.0C504.9 576.1 507.7 573.9 507.8 578.3C507.9 582.6 508.1 581.5 507.8 588.1C507.6 594.6 508.4 591.3 507.1 597.9C505.8 604.4 506.4 601.1 503.9 607.7C501.4 614.2 502.8 611.2 499.6 617.5C496.3 623.7 496.6 620.5 494.2 626.5C491.7 632.5 492.8 629.5 492.2 635.5C491.7 641.4 491.9 639.3 492.5 644.4C493.2 649.6 492.5 647.4 494.2 651.0C495.9 654.5 494.6 653.2 497.6 655.1C500.7 657.0 496.1 656.2 503.4 656.7C510.7 657.2 512.3 657.2 519.6 656.7C526.9 656.2 522.3 657.0 525.4 655.1C528.4 653.2 527.1 654.5 528.8 651.0C530.5 647.4 529.8 649.6 530.5 644.4C531.1 639.3 531.3 641.4 530.8 635.5C530.2 629.5 531.3 632.5 528.8 626.5C526.4 620.5 526.7 623.7 523.4 617.5C520.2 611.2 521.6 614.2 519.1 607.7C516.6 601.1 517.2 604.4 515.9 597.9C514.6 591.3 515.4 594.6 515.2 588.1C514.9 581.5 515.1 582.6 515.2 578.3C515.3 573.9 518.1 576.1 515.5 575.0C512.9 573.9 510.1 573.9 507.5 575.0Z" fill="url(#vase)" stroke="#9a9a9a" stroke-width=".5"/><path d="M507.5 575.0C504.9 576.1 507.7 573.9 507.8 578.3C507.9 582.6 508.1 581.5 507.8 588.1C507.6 594.6 508.4 591.3 507.1 597.9C505.8 604.4 506.4 601.1 503.9 607.7C501.4 614.2 502.8 611.2 499.6 617.5C496.3 623.7 496.6 620.5 494.2 626.5C491.7 632.5 492.8 629.5 492.2 635.5C491.7 641.4 491.9 639.3 492.5 644.4C493.2 649.6 492.5 647.4 494.2 651.0C495.9 654.5 494.6 653.2 497.6 655.1C500.7 657.0 496.1 656.2 503.4 656.7C510.7 657.2 512.3 657.2 519.6 656.7C526.9 656.2 522.3 657.0 525.4 655.1C528.4 653.2 527.1 654.5 528.8 651.0C530.5 647.4 529.8 649.6 530.5 644.4C531.1 639.3 531.3 641.4 530.8 635.5C530.2 629.5 531.3 632.5 528.8 626.5C526.4 620.5 526.7 623.7 523.4 617.5C520.2 611.2 521.6 614.2 519.1 607.7C516.6 601.1 517.2 604.4 515.9 597.9C514.6 591.3 515.4 594.6 515.2 588.1C514.9 581.5 515.1 582.6 515.2 578.3C515.3 573.9 518.1 576.1 515.5 575.0C512.9 573.9 510.1 573.9 507.5 575.0Z" fill="url(#vsh)"/><ellipse cx="511.5" cy="575.5" rx="4.0" ry="1.2" fill="#e8e8e8" stroke="#aaa" stroke-width=".4"/></g><g opacity=".94"><path d="M565.4 695.0C563.3 696.0 565.6 694.8 565.6 698.1C565.7 701.5 566.1 700.2 565.5 705.0C564.9 709.8 566.2 707.5 563.7 712.5C561.2 717.5 561.9 715.0 558.1 720.0C554.2 725.0 555.0 722.1 552.1 727.5C549.3 732.9 550.2 730.4 549.5 736.2C548.7 742.1 549.2 739.8 549.8 745.0C550.5 750.2 549.7 748.2 551.4 751.9C553.0 755.5 551.7 754.1 554.8 755.9C557.9 757.8 553.3 757.0 560.6 757.5C567.8 758.0 569.4 758.0 576.6 757.5C583.9 757.0 579.3 757.8 582.4 755.9C585.5 754.1 584.2 755.5 585.8 751.9C587.5 748.2 586.7 750.2 587.4 745.0C588.0 739.8 588.5 742.1 587.8 736.2C587.0 730.4 587.9 732.9 585.1 727.5C582.2 722.1 583.0 725.0 579.1 720.0C575.3 715.0 576.0 717.5 573.5 712.5C571.0 707.5 572.3 709.8 571.7 705.0C571.1 700.2 571.5 701.5 571.6 698.1C571.6 694.8 573.9 696.0 571.9 695.0C569.8 694.0 567.4 694.0 565.4 695.0Z" fill="url(#vase)" stroke="#9a9a9a" stroke-width=".5"/><path d="M565.4 695.0C563.3 696.0 565.6 694.8 565.6 698.1C565.7 701.5 566.1 700.2 565.5 705.0C564.9 709.8 566.2 707.5 563.7 712.5C561.2 717.5 561.9 715.0 558.1 720.0C554.2 725.0 555.0 722.1 552.1 727.5C549.3 732.9 550.2 730.4 549.5 736.2C548.7 742.1 549.2 739.8 549.8 745.0C550.5 750.2 549.7 748.2 551.4 751.9C553.0 755.5 551.7 754.1 554.8 755.9C557.9 757.8 553.3 757.0 560.6 757.5C567.8 758.0 569.4 758.0 576.6 757.5C583.9 757.0 579.3 757.8 582.4 755.9C585.5 754.1 584.2 755.5 585.8 751.9C587.5 748.2 586.7 750.2 587.4 745.0C588.0 739.8 588.5 742.1 587.8 736.2C587.0 730.4 587.9 732.9 585.1 727.5C582.2 722.1 583.0 725.0 579.1 720.0C575.3 715.0 576.0 717.5 573.5 712.5C571.0 707.5 572.3 709.8 571.7 705.0C571.1 700.2 571.5 701.5 571.6 698.1C571.6 694.8 573.9 696.0 571.9 695.0C569.8 694.0 567.4 694.0 565.4 695.0Z" fill="url(#vsh)"/><ellipse cx="568.6" cy="695.5" rx="3.2" ry="1.2" fill="#e8e8e8" stroke="#aaa" stroke-width=".4"/></g><g opacity=".94"><path d="M524.2 756.4C522.2 757.5 524.5 756.2 524.5 759.8C524.6 763.3 525.0 762.0 524.4 767.2C523.8 772.3 525.1 769.8 522.6 775.2C520.1 780.6 520.8 777.9 516.9 783.3C513.1 788.7 513.9 785.5 511.0 791.3C508.1 797.2 509.1 794.5 508.3 800.8C507.5 807.0 508.0 804.6 508.7 810.2C509.3 815.8 508.6 813.6 510.2 817.6C511.9 821.5 510.6 819.9 513.7 821.9C516.7 823.9 512.1 823.0 519.4 823.6C526.7 824.2 528.3 824.2 535.6 823.6C542.9 823.0 538.3 823.9 541.3 821.9C544.4 819.9 543.1 821.5 544.8 817.6C546.4 813.6 545.7 815.8 546.3 810.2C547.0 804.6 547.5 807.0 546.7 800.8C545.9 794.5 546.9 797.2 544.0 791.3C541.1 785.5 541.9 788.7 538.1 783.3C534.2 777.9 534.9 780.6 532.4 775.2C529.9 769.8 531.2 772.3 530.6 767.2C530.0 762.0 530.4 763.3 530.5 759.8C530.5 756.2 532.8 757.5 530.8 756.4C528.7 755.3 526.3 755.3 524.2 756.4Z" fill="url(#vase)" stroke="#9a9a9a" stroke-width=".5"/><path d="M524.2 756.4C522.2 757.5 524.5 756.2 524.5 759.8C524.6 763.3 525.0 762.0 524.4 767.2C523.8 772.3 525.1 769.8 522.6 775.2C520.1 780.6 520.8 777.9 516.9 783.3C513.1 788.7 513.9 785.5 511.0 791.3C508.1 797.2 509.1 794.5 508.3 800.8C507.5 807.0 508.0 804.6 508.7 810.2C509.3 815.8 508.6 813.6 510.2 817.6C511.9 821.5 510.6 819.9 513.7 821.9C516.7 823.9 512.1 823.0 519.4 823.6C526.7 824.2 528.3 824.2 535.6 823.6C542.9 823.0 538.3 823.9 541.3 821.9C544.4 819.9 543.1 821.5 544.8 817.6C546.4 813.6 545.7 815.8 546.3 810.2C547.0 804.6 547.5 807.0 546.7 800.8C545.9 794.5 546.9 797.2 544.0 791.3C541.1 785.5 541.9 788.7 538.1 783.3C534.2 777.9 534.9 780.6 532.4 775.2C529.9 769.8 531.2 772.3 530.6 767.2C530.0 762.0 530.4 763.3 530.5 759.8C530.5 756.2 532.8 757.5 530.8 756.4C528.7 755.3 526.3 755.3 524.2 756.4Z" fill="url(#vsh)"/><ellipse cx="527.5" cy="756.9" rx="3.2" ry="1.2" fill="#e8e8e8" stroke="#aaa" stroke-width=".4"/></g><g opacity=".94"><path d="M619.8 750.0C617.6 751.2 620.0 748.8 620.1 753.5C620.2 758.2 620.3 757.0 620.1 764.0C619.9 771.0 620.6 767.5 619.4 774.6C618.3 781.6 619.4 778.1 616.6 785.1C613.9 792.1 614.8 788.9 611.2 795.6C607.6 802.3 608.2 798.8 605.8 805.3C603.3 811.7 604.4 808.5 603.8 814.9C603.2 821.3 603.4 819.0 604.1 824.5C604.7 830.1 604.0 827.8 605.8 831.6C607.5 835.4 606.1 833.9 609.3 835.9C612.4 838.0 607.7 837.1 615.1 837.7C622.5 838.3 624.1 838.3 631.5 837.7C638.9 837.1 634.2 838.0 637.3 835.9C640.5 833.9 639.1 835.4 640.8 831.6C642.6 827.8 641.9 830.1 642.5 824.5C643.2 819.0 643.4 821.3 642.8 814.9C642.2 808.5 643.3 811.7 640.8 805.3C638.4 798.8 639.0 802.3 635.4 795.6C631.8 788.9 632.7 792.1 629.9 785.1C627.2 778.1 628.3 781.6 627.1 774.6C626.0 767.5 626.7 771.0 626.5 764.0C626.3 757.0 626.4 758.2 626.5 753.5C626.6 748.8 629.0 751.2 626.8 750.0C624.6 748.8 622.0 748.8 619.8 750.0Z" fill="url(#vase)" stroke="#9a9a9a" stroke-width=".5"/><path d="M619.8 750.0C617.6 751.2 620.0 748.8 620.1 753.5C620.2 758.2 620.3 757.0 620.1 764.0C619.9 771.0 620.6 767.5 619.4 774.6C618.3 781.6 619.4 778.1 616.6 785.1C613.9 792.1 614.8 788.9 611.2 795.6C607.6 802.3 608.2 798.8 605.8 805.3C603.3 811.7 604.4 808.5 603.8 814.9C603.2 821.3 603.4 819.0 604.1 824.5C604.7 830.1 604.0 827.8 605.8 831.6C607.5 835.4 606.1 833.9 609.3 835.9C612.4 838.0 607.7 837.1 615.1 837.7C622.5 838.3 624.1 838.3 631.5 837.7C638.9 837.1 634.2 838.0 637.3 835.9C640.5 833.9 639.1 835.4 640.8 831.6C642.6 827.8 641.9 830.1 642.5 824.5C643.2 819.0 643.4 821.3 642.8 814.9C642.2 808.5 643.3 811.7 640.8 805.3C638.4 798.8 639.0 802.3 635.4 795.6C631.8 788.9 632.7 792.1 629.9 785.1C627.2 778.1 628.3 781.6 627.1 774.6C626.0 767.5 626.7 771.0 626.5 764.0C626.3 757.0 626.4 758.2 626.5 753.5C626.6 748.8 629.0 751.2 626.8 750.0C624.6 748.8 622.0 748.8 619.8 750.0Z" fill="url(#vsh)"/><ellipse cx="623.3" cy="750.5" rx="3.5" ry="1.2" fill="#e8e8e8" stroke="#aaa" stroke-width=".4"/></g><g opacity=".94"><path d="M801 672Q799 690 802 700Q806 711 818 712Q832 711 836 700Q839 690 837.500 672Q819 668 801 672Z" fill="url(#vase)" stroke="#9a9a9a" stroke-width=".5"/><path d="M822 672V712" stroke="#aaa" stroke-width=".8"/></g><g opacity=".94"><path d="M885.1 654.4C882.9 655.6 885.3 653.2 885.4 657.9C885.5 662.6 885.6 661.4 885.4 668.4C885.2 675.4 885.9 671.9 884.8 678.9C883.6 685.9 884.6 682.4 882.0 689.4C879.3 696.4 880.3 693.2 876.7 700.0C873.2 706.7 873.8 703.2 871.4 709.6C868.9 716.0 870.0 712.8 869.5 719.2C868.9 725.6 869.1 723.3 869.7 728.9C870.4 734.4 869.7 732.1 871.4 735.9C873.1 739.7 871.7 738.2 874.8 740.2C877.9 742.3 873.3 741.4 880.6 742.0C887.8 742.6 889.4 742.6 896.6 742.0C903.9 741.4 899.3 742.3 902.4 740.2C905.5 738.2 904.1 739.7 905.8 735.9C907.5 732.1 906.8 734.4 907.5 728.9C908.1 723.3 908.3 725.6 907.8 719.2C907.2 712.8 908.3 716.0 905.8 709.6C903.4 703.2 904.0 706.7 900.5 700.0C896.9 693.2 897.9 696.4 895.2 689.4C892.6 682.4 893.6 685.9 892.5 678.9C891.3 671.9 892.0 675.4 891.8 668.4C891.6 661.4 891.7 662.6 891.8 657.9C891.9 653.2 894.3 655.6 892.1 654.4C889.9 653.2 887.3 653.2 885.1 654.4Z" fill="url(#vase)" stroke="#9a9a9a" stroke-width=".5"/><path d="M885.1 654.4C882.9 655.6 885.3 653.2 885.4 657.9C885.5 662.6 885.6 661.4 885.4 668.4C885.2 675.4 885.9 671.9 884.8 678.9C883.6 685.9 884.6 682.4 882.0 689.4C879.3 696.4 880.3 693.2 876.7 700.0C873.2 706.7 873.8 703.2 871.4 709.6C868.9 716.0 870.0 712.8 869.5 719.2C868.9 725.6 869.1 723.3 869.7 728.9C870.4 734.4 869.7 732.1 871.4 735.9C873.1 739.7 871.7 738.2 874.8 740.2C877.9 742.3 873.3 741.4 880.6 742.0C887.8 742.6 889.4 742.6 896.6 742.0C903.9 741.4 899.3 742.3 902.4 740.2C905.5 738.2 904.1 739.7 905.8 735.9C907.5 732.1 906.8 734.4 907.5 728.9C908.1 723.3 908.3 725.6 907.8 719.2C907.2 712.8 908.3 716.0 905.8 709.6C903.4 703.2 904.0 706.7 900.5 700.0C896.9 693.2 897.9 696.4 895.2 689.4C892.6 682.4 893.6 685.9 892.5 678.9C891.3 671.9 892.0 675.4 891.8 668.4C891.6 661.4 891.7 662.6 891.8 657.9C891.9 653.2 894.3 655.6 892.1 654.4C889.9 653.2 887.3 653.2 885.1 654.4Z" fill="url(#vsh)"/><ellipse cx="888.6" cy="654.9" rx="3.5" ry="1.2" fill="#e8e8e8" stroke="#aaa" stroke-width=".4"/></g><g opacity=".94"><path d="M862.5 686.4C860.3 687.6 862.7 685.2 862.8 689.9C862.9 694.5 863.0 693.4 862.8 700.4C862.6 707.3 863.3 703.8 862.1 710.8C861.0 717.8 862.0 714.3 859.4 721.3C856.7 728.3 857.7 725.1 854.1 731.7C850.6 738.4 851.2 734.9 848.8 741.3C846.3 747.7 847.4 744.5 846.9 750.9C846.3 757.3 846.5 755.0 847.1 760.5C847.8 766.0 847.1 763.7 848.8 767.5C850.5 771.3 849.1 769.8 852.2 771.9C855.3 773.9 850.7 773.0 858.0 773.6C865.2 774.2 866.8 774.2 874.0 773.6C881.3 773.0 876.7 773.9 879.8 771.9C882.9 769.8 881.5 771.3 883.2 767.5C884.9 763.7 884.2 766.0 884.9 760.5C885.5 755.0 885.7 757.3 885.1 750.9C884.6 744.5 885.7 747.7 883.2 741.3C880.8 734.9 881.4 738.4 877.9 731.7C874.3 725.1 875.3 728.3 872.6 721.3C870.0 714.3 871.0 717.8 869.9 710.8C868.7 703.8 869.4 707.3 869.2 700.4C869.0 693.4 869.1 694.5 869.2 689.9C869.3 685.2 871.7 687.6 869.5 686.4C867.3 685.2 864.7 685.2 862.5 686.4Z" fill="url(#vase)" stroke="#9a9a9a" stroke-width=".5"/><path d="M862.5 686.4C860.3 687.6 862.7 685.2 862.8 689.9C862.9 694.5 863.0 693.4 862.8 700.4C862.6 707.3 863.3 703.8 862.1 710.8C861.0 717.8 862.0 714.3 859.4 721.3C856.7 728.3 857.7 725.1 854.1 731.7C850.6 738.4 851.2 734.9 848.8 741.3C846.3 747.7 847.4 744.5 846.9 750.9C846.3 757.3 846.5 755.0 847.1 760.5C847.8 766.0 847.1 763.7 848.8 767.5C850.5 771.3 849.1 769.8 852.2 771.9C855.3 773.9 850.7 773.0 858.0 773.6C865.2 774.2 866.8 774.2 874.0 773.6C881.3 773.0 876.7 773.9 879.8 771.9C882.9 769.8 881.5 771.3 883.2 767.5C884.9 763.7 884.2 766.0 884.9 760.5C885.5 755.0 885.7 757.3 885.1 750.9C884.6 744.5 885.7 747.7 883.2 741.3C880.8 734.9 881.4 738.4 877.9 731.7C874.3 725.1 875.3 728.3 872.6 721.3C870.0 714.3 871.0 717.8 869.9 710.8C868.7 703.8 869.4 707.3 869.2 700.4C869.0 693.4 869.1 694.5 869.2 689.9C869.3 685.2 871.7 687.6 869.5 686.4C867.3 685.2 864.7 685.2 862.5 686.4Z" fill="url(#vsh)"/><ellipse cx="866.0" cy="686.9" rx="3.5" ry="1.2" fill="#e8e8e8" stroke="#aaa" stroke-width=".4"/></g><g opacity=".94"><path d="M927.8 732.5C925.6 733.7 928.0 731.3 928.1 736.0C928.2 740.6 928.3 739.5 928.1 746.5C927.9 753.4 928.6 749.9 927.4 756.9C926.3 763.9 927.2 760.4 924.6 767.4C922.1 774.4 923.1 771.2 919.7 777.8C916.3 784.5 916.8 781.0 914.4 787.4C912.0 793.8 913.1 790.6 912.5 797.0C912.0 803.4 912.2 801.1 912.8 806.6C913.5 812.1 912.8 809.8 914.4 813.6C916.1 817.4 914.8 815.9 917.8 818.0C920.8 820.0 916.3 819.1 923.4 819.7C930.5 820.3 932.0 820.3 939.2 819.7C946.3 819.1 941.8 820.0 944.8 818.0C947.8 815.9 946.5 817.4 948.2 813.6C949.8 809.8 949.1 812.1 949.8 806.6C950.4 801.1 950.6 803.4 950.0 797.0C949.5 790.6 950.5 793.8 948.2 787.4C945.8 781.0 946.3 784.5 942.9 777.8C939.5 771.2 940.5 774.4 937.9 767.4C935.4 760.4 936.3 763.9 935.1 756.9C934.0 749.9 934.7 753.4 934.5 746.5C934.3 739.5 934.4 740.6 934.5 736.0C934.6 731.3 937.0 733.7 934.8 732.5C932.6 731.3 930.0 731.3 927.8 732.5Z" fill="url(#vase)" stroke="#9a9a9a" stroke-width=".5"/><path d="M927.8 732.5C925.6 733.7 928.0 731.3 928.1 736.0C928.2 740.6 928.3 739.5 928.1 746.5C927.9 753.4 928.6 749.9 927.4 756.9C926.3 763.9 927.2 760.4 924.6 767.4C922.1 774.4 923.1 771.2 919.7 777.8C916.3 784.5 916.8 781.0 914.4 787.4C912.0 793.8 913.1 790.6 912.5 797.0C912.0 803.4 912.2 801.1 912.8 806.6C913.5 812.1 912.8 809.8 914.4 813.6C916.1 817.4 914.8 815.9 917.8 818.0C920.8 820.0 916.3 819.1 923.4 819.7C930.5 820.3 932.0 820.3 939.2 819.7C946.3 819.1 941.8 820.0 944.8 818.0C947.8 815.9 946.5 817.4 948.2 813.6C949.8 809.8 949.1 812.1 949.8 806.6C950.4 801.1 950.6 803.4 950.0 797.0C949.5 790.6 950.5 793.8 948.2 787.4C945.8 781.0 946.3 784.5 942.9 777.8C939.5 771.2 940.5 774.4 937.9 767.4C935.4 760.4 936.3 763.9 935.1 756.9C934.0 749.9 934.7 753.4 934.5 746.5C934.3 739.5 934.4 740.6 934.5 736.0C934.6 731.3 937.0 733.7 934.8 732.5C932.6 731.3 930.0 731.3 927.8 732.5Z" fill="url(#vsh)"/><ellipse cx="931.3" cy="733.0" rx="3.5" ry="1.2" fill="#e8e8e8" stroke="#aaa" stroke-width=".4"/></g><rect x="486.1" y="496.0" width="3.3" height="87.0" fill="url(#pole)"/><ellipse cx="284.700" cy="445.5" rx="4.5" ry="2.3" fill="none" stroke="#2a2a2a" stroke-width=".9"/><ellipse cx="284.700" cy="459.3" rx="4.5" ry="2.3" fill="none" stroke="#2a2a2a" stroke-width=".9"/><ellipse cx="284.700" cy="480.9" rx="10.5" ry="4.7" fill="none" stroke="#2a2a2a" stroke-width=".9"/><ellipse cx="284.700" cy="492" rx="16.9" ry="7.7" fill="none" stroke="#2a2a2a" stroke-width=".9"/><ellipse cx="284.700" cy="525.8" rx="16.9" ry="7.7" fill="none" stroke="#2a2a2a" stroke-width=".9"/><rect x="633" y="472" width="4" height="4" fill="#fff" stroke="#000" stroke-width="1"/><rect x="969" y="564.5" width="4" height="4" fill="#fff" stroke="#000" stroke-width="1"/><path d="M1284.500 643l3 1" stroke="#000" stroke-width="1"/><path d="M71 936.500V962.500L101 964.300" fill="none" stroke="#aaa" stroke-width="1.300"/><path d="M71.200 962.500L73.600 951" fill="none" stroke="#777" stroke-width="1"/></svg>
<div class="t" style="left:74.0px;top:926.13px;font-size:13.00px;line-height:14.94px;color:#444;">z</div>
<div class="t" style="left:75.5px;top:939.03px;font-size:13.00px;line-height:14.94px;color:#444;">y</div>
<div class="t" style="left:103.0px;top:953.83px;font-size:13.00px;line-height:14.94px;color:#444;">x</div>
<div class="b" style="left:1503px;top:273px;width:2030px;height:0px;background:none;"></div>
<div class="b" style="left:1504px;top:273px;width:538px;height:1px;background:#c9ccd6;"></div>
<div class="b" style="left:1504px;top:275px;width:538px;height:1px;background:#d0d3dc;"></div>
<div class="b" style="left:1502px;top:299px;width:545px;height:723px;background:#fff;border:1px solid #a3a7b4;border-top:none;box-sizing:border-box;"></div>
<div class="b" style="left:1503px;top:300px;width:543px;height:24px;background:linear-gradient(#ffffff,#f1f2f6);"></div>
<div class="b" style="left:1503px;top:324px;width:543px;height:1px;background:#a9adb9;"></div>
<svg style="left:1496px;top:270px" width="552" height="32"><defs><linearGradient id="pg" x1="0" y1="0" x2="0" y2="1"><stop offset="0" stop-color="#fff"/><stop offset="1" stop-color="#f6f7fa"/></linearGradient></defs><path d="M6 29.5H551" stroke="#a3a7b4" stroke-width="1"/><path d="M320.5 29.5 L320.5 13 Q320.5 9 324.5 9 L419 9 Q422 9 424 11.5 L441 29.5" fill="#d9ddeb" stroke="#a3a7b4"/><path d="M257 29.5 L257 13 Q257 9 261 9 L309 9 Q312 9 314 11.5 L331 29.5" fill="#d9ddeb" stroke="#a3a7b4"/><path d="M178 29.5 L178 13 Q178 9 182 9 L245 9 Q248 9 250 11.5 L267 29.5" fill="#d9ddeb" stroke="#a3a7b4"/><path d="M7 29.5 L7 13 Q7 9 11 9 L88 9 Q91 9 93 11.5 L110 29.5" fill="#d9ddeb" stroke="#a3a7b4"/><path d="M103 29.5 L103 13 Q103 9 107 9 L165 9 Q168 9 170 11.5 L187 29.5 L187 30.5 L103 30.5 Z" fill="url(#pg)" stroke="none"/><path d="M103 29.5 L103 13 Q103 9 107 9 L165 9 Q168 9 170 11.5 L187 29.5" fill="none" stroke="#a3a7b4"/></svg>
<div class="t" style="left:1525.4px;top:282.35px;font-size:13.30px;line-height:15.28px;letter-spacing:-0.301px;color:#111;">Properties</div>
<div class="t" style="left:1621.8px;top:282.35px;font-size:13.30px;line-height:15.28px;letter-spacing:-0.403px;color:#111;">Layers</div>
<div class="t" style="left:1696.5px;top:282.35px;font-size:13.30px;line-height:15.28px;letter-spacing:-0.272px;color:#111;">Display</div>
<div class="t" style="left:1776.5px;top:282.35px;font-size:13.30px;line-height:15.28px;letter-spacing:-0.463px;color:#111;">Help</div>
<div class="t" style="left:1839.4px;top:282.35px;font-size:13.30px;line-height:15.28px;letter-spacing:-0.289px;color:#111;">Grasshopper</div>
<svg style="left:2031px;top:283px" width="16" height="16" viewBox="0 0 16 16"><path d="M13.22 6.39L14.86 6.61L14.86 9.39L13.22 9.61L12.83 10.55L13.83 11.87L11.87 13.83L10.55 12.83L9.61 13.22L9.39 14.86L6.61 14.86L6.39 13.22L5.45 12.83L4.13 13.83L2.17 11.87L3.17 10.55L2.78 9.61L1.14 9.39L1.14 6.61L2.78 6.39L3.17 5.45L2.17 4.13L4.13 2.17L5.45 3.17L6.39 2.78L6.61 1.14L9.39 1.14L9.61 2.78L10.55 3.17L11.87 2.17L13.83 4.13L12.83 5.45Z" fill="none" stroke="#8a8fa0" stroke-width="1" stroke-linejoin="round"/><circle cx="8" cy="8" r="2.1" fill="none" stroke="#8a8fa0" stroke-width="1"/></svg>
<div class="b" style="left:1507.7px;top:282.4px;width:13.2px;height:13.2px;border-radius:50%;background:conic-gradient(#e8281e,#f0e020 17%,#38b018 33%,#18b8c8 50%,#2838b8 64%,#a018a0 80%,#e8281e);box-shadow:0 0 0 .8px #2a2a2a;"></div><div class="b" style="left:1510.4px;top:285.1px;width:7.8px;height:7.8px;border-radius:50%;background:#f6f6f8;box-shadow:0 0 0 .6px #555;"></div>
<svg style="left:1602px;top:280px" width="18" height="18" viewBox="0 0 18 18"><path d="M1.5 2 L16 3.5 L14.5 12 L6 16.5 L2.5 12Z" fill="#fff" stroke="#222" stroke-width="1"/><path d="M2 2.3 L15.6 3.8 L14.6 8.5 L6.5 12 L3 9Z" fill="#e8501e"/><path d="M2 2.3 L9 3 L8 6.5 L3 9Z" fill="#f59a4a"/><path d="M3.2 11.5 L6.3 15.2 L13.9 11.2 L14.3 9.6 L6.5 13.3 L3 10.2Z" fill="#3a4fae"/></svg>
<svg style="left:1678px;top:281px" width="17" height="17" viewBox="0 0 17 17"><rect x="1.5" y="1.5" width="14" height="11" fill="#d7dbe0" stroke="#222" stroke-width="1.6"/><rect x="3" y="3" width="11" height="8" fill="#f0f2f4"/><path d="M6 15h5M8.5 13v2" stroke="#222" stroke-width="1.8"/><path d="M4 15.5h9" stroke="#222" stroke-width="1.4"/></svg>
<svg style="left:1758px;top:281px" width="16" height="16" viewBox="0 0 16 16"><rect x=".5" y=".5" width="15" height="15" fill="#2a4fd0" stroke="#6f7fb8"/><rect x="1" y="1" width="14" height="3" fill="#c9d3f2"/><circle cx="8" cy="9.5" r="4.8" fill="#e8eefc" stroke="#9ab0ee"/><text x="8" y="13" font-size="9" font-weight="bold" text-anchor="middle" fill="#2a4fd0" font-family="Liberation Sans">?</text></svg>
<div class="b" style="left:1821px;top:284px;width:16px;height:9px;background:#111;"></div>
<div class="t" style="left:1821.5px;top:284.88px;font-size:8.60px;line-height:9.88px;letter-spacing:-1.219px;font-weight:bold;color:#fff;">RCP</div>
<svg style="left:1510.5px;top:304px" width="14" height="16" viewBox="0 0 14 16"><path d="M1.5 1.5H8.5L12.5 5.5V14.5H1.5Z" fill="#fff" stroke="#222" stroke-width="1.4"/><path d="M8.5 1.5V5.5H12.5" fill="#ddd" stroke="#222" stroke-width="1"/></svg>
<svg style="left:1537.5px;top:304px" width="15" height="16" viewBox="0 0 15 16"><path d="M1.5 1.5H6L8.5 4V9.5H1.5Z" fill="#fff" stroke="#222" stroke-width="1.3"/><path d="M6.5 6.5H10.5L13.5 9.5V15H6.5Z" fill="#fff" stroke="#222" stroke-width="1.3"/></svg>
<svg style="left:1565px;top:304px" width="16" height="16" viewBox="0 0 16 16"><path d="M2 2L14 14M14 2L2 14" stroke="#2a2a2a" stroke-width="2.6" stroke-linecap="round"/></svg>
<svg style="left:1593px;top:306.5px" width="16" height="10" viewBox="0 0 16 10"><path d="M8 1L15 9H1Z" fill="#8a8a8a" stroke="#222" stroke-width="1.2"/></svg>
<svg style="left:1621px;top:307.5px" width="16" height="10" viewBox="0 0 16 10"><path d="M8 9L15 1H1Z" fill="#bdbdbd" stroke="#b0b0b0" stroke-width="1"/></svg>
<svg style="left:1651px;top:304px" width="10" height="16" viewBox="0 0 10 16"><path d="M1 8L9 1V15Z" fill="#bdbdbd" stroke="#b0b0b0" stroke-width="1"/></svg>
<svg style="left:1676.5px;top:304px" width="16" height="16" viewBox="0 0 16 16"><path d="M1 1.5H15L9.5 8V15H6.5V8Z" fill="#8c8c8c" stroke="#222" stroke-width="1.3"/></svg>
<svg style="left:1706.5px;top:304.5px" width="12" height="15" viewBox="0 0 12 15"><path d="M1 1H8L11 4V14H1Z" fill="#e0e0e0" stroke="#b5b5b5" stroke-width="1.2"/><path d="M3 6H9V12H3ZM6 6V12M3 9H9" fill="none" stroke="#b5b5b5" stroke-width="1"/></svg>
<svg style="left:1732.5px;top:304px" width="16" height="16" viewBox="0 0 16 16"><path d="M3 14L9.5 6" stroke="#222" stroke-width="2.6" stroke-linecap="round"/><path d="M6 3.5C8 1.5 11 1.5 14.5 5.5L12.5 7.5C11.5 5.5 10 5 8.5 6Z" fill="#555" stroke="#222" stroke-width="1"/></svg>
<svg style="left:1760.7px;top:304px" width="16" height="16" viewBox="0 0 16 16"><circle cx="8" cy="8" r="7.2" fill="#4a4a4a" stroke="#2a2a2a"/><path d="M5.4 6.2C5.4 2.8 10.8 2.8 10.8 6C10.8 8 8.3 8 8.3 10" fill="none" stroke="#eee" stroke-width="2"/><circle cx="8.2" cy="12.3" r="1.1" fill="#eee"/></svg>
<div class="t" style="left:1509.8px;top:330.93px;font-size:13.00px;line-height:14.94px;letter-spacing:0.144px;color:#111;">Name</div>
<div class="t" style="left:1681.0px;top:330.93px;font-size:13.00px;line-height:14.94px;letter-spacing:-0.149px;color:#111;">Current</div>
<div class="t" style="left:1764.4px;top:330.93px;font-size:13.00px;line-height:14.94px;letter-spacing:-0.520px;color:#111;">On</div>
<div class="t" style="left:1842.3px;top:330.93px;font-size:13.00px;line-height:14.94px;letter-spacing:0.083px;color:#111;">Material</div>
<div class="t" style="left:1922.3px;top:330.93px;font-size:13.00px;line-height:14.94px;letter-spacing:0.069px;color:#111;">Linetype</div>
<div class="b" style="left:2019.5px;top:328px;width:26.5px;height:20px;overflow:hidden;"><div class="t" style="left:0.0px;top:3.13px;font-size:13.00px;line-height:14.94px;letter-spacing:0.254px;color:#111;">Print</div></div>
<div class="b" style="left:1660px;top:326px;width:1px;height:22px;background:linear-gradient(#f2f2f4,#d6d8de);"></div>
<div class="b" style="left:1743px;top:326px;width:1px;height:22px;background:linear-gradient(#f2f2f4,#d6d8de);"></div>
<div class="b" style="left:1801px;top:326px;width:1px;height:22px;background:linear-gradient(#f2f2f4,#d6d8de);"></div>
<div class="b" style="left:1818px;top:326px;width:1px;height:22px;background:linear-gradient(#f2f2f4,#d6d8de);"></div>
<div class="b" style="left:1835px;top:326px;width:1px;height:22px;background:linear-gradient(#f2f2f4,#d6d8de);"></div>
<div class="b" style="left:1915px;top:326px;width:1px;height:22px;background:linear-gradient(#f2f2f4,#d6d8de);"></div>
<div class="b" style="left:1995px;top:326px;width:1px;height:22px;background:linear-gradient(#f2f2f4,#d6d8de);"></div>
<div class="b" style="left:2012px;top:326px;width:1px;height:22px;background:linear-gradient(#f2f2f4,#d6d8de);"></div>
<div class="b" style="left:1503px;top:469px;width:543px;height:20px;background:#3399ff;"></div>
<div class="b" style="left:1503px;top:368px;width:543px;height:0;border-top:1px dotted #dcdce0;"></div>
<div class="b" style="left:1503px;top:388px;width:543px;height:0;border-top:1px dotted #dcdce0;"></div>
<div class="b" style="left:1503px;top:408px;width:543px;height:0;border-top:1px dotted #dcdce0;"></div>
<div class="b" style="left:1503px;top:428px;width:543px;height:0;border-top:1px dotted #dcdce0;"></div>
<div class="b" style="left:1503px;top:448px;width:543px;height:0;border-top:1px dotted #dcdce0;"></div>
<div class="b" style="left:1503px;top:468px;width:543px;height:0;border-top:1px dotted #dcdce0;"></div>
<div class="t" style="left:1525.7px;top:352.63px;font-size:13.00px;line-height:14.94px;letter-spacing:0.749px;font-weight:bold;">Default</div>
<div class="b" style="left:1821px;top:353.5px;width:11.5px;height:11.5px;background:#000;border:1px solid #222;box-sizing:border-box;"></div>
<svg style="left:1837.3px;top:350.5px" width="17" height="17" viewBox="0 0 17 17"><circle cx="8.5" cy="8.5" r="7.4" fill="#fff" stroke="#111" stroke-width="1.1"/></svg>
<svg style="left:1997.5px;top:352px" width="14" height="14" viewBox="0 0 14 14"><path d="M7 .5L13.5 7L7 13.5L.5 7Z" fill="#000" /></svg>
<div class="t" style="left:1860.7px;top:352.63px;font-size:13.00px;line-height:14.94px;letter-spacing:0.518px;font-weight:bold;">New ...</div>
<div class="t" style="left:1920.5px;top:352.63px;font-size:13.00px;line-height:14.94px;letter-spacing:0.276px;font-weight:bold;">Continuo...</div>
<div class="b" style="left:2017.5px;top:349px;width:28.5px;height:20px;overflow:hidden;"><div class="t" style="left:0.0px;top:3.63px;font-size:13.00px;line-height:14.94px;letter-spacing:0.563px;font-weight:bold;">Default</div></div>
<div class="t" style="left:1524.4px;top:372.63px;font-size:13.00px;line-height:14.94px;letter-spacing:0.199px;">Make2D</div>
<div class="b" style="left:1821px;top:373.5px;width:11.5px;height:11.5px;background:#000;border:1px solid #222;box-sizing:border-box;"></div>
<svg style="left:1767px;top:371.5px" width="10" height="15" viewBox="0 0 10 15"><path d="M5 1C2.5 1 1 3 1 5C1 7 2.5 8 3 10.2H7C7.5 8 9 7 9 5C9 3 7.5 1 5 1Z" fill="#f6f06a" stroke="#55500a" stroke-width=".9"/><path d="M3.2 11.2H6.8V13C6.8 14 3.2 14 3.2 13Z" fill="#ddd" stroke="#222" stroke-width=".9"/></svg>
<svg style="left:1805px;top:372px" width="12" height="13" viewBox="0 0 12 13"><rect x="1" y="6.5" width="7.5" height="5.5" fill="#fff" stroke="#111" stroke-width="1.3"/><path d="M6 6.5V3.5C6 .8 10.6 .8 10.6 3.5V4.6" fill="none" stroke="#111" stroke-width="1.3"/></svg>
<svg style="left:1837.3px;top:370.5px" width="17" height="17" viewBox="0 0 17 17"><circle cx="8.5" cy="8.5" r="7.4" fill="#fff" stroke="#ececec" stroke-width="1"/></svg>
<svg style="left:1997.5px;top:372px" width="14" height="14" viewBox="0 0 14 14"><path d="M7 .5L13.5 7L7 13.5L.5 7Z" fill="#000" /></svg>
<div class="t" style="left:1919.6px;top:372.63px;font-size:13.00px;line-height:14.94px;letter-spacing:-0.126px;">Continuous</div>
<div class="b" style="left:2016.6px;top:369px;width:29.4px;height:20px;overflow:hidden;"><div class="t" style="left:0.0px;top:3.63px;font-size:13.00px;line-height:14.94px;letter-spacing:0.116px;">Default</div></div>
<div class="t" style="left:1538.5px;top:392.63px;font-size:13.00px;line-height:14.94px;letter-spacing:0.268px;">visible</div>
<div class="b" style="left:1821px;top:393.5px;width:11.5px;height:11.5px;background:#000;border:1px solid #222;box-sizing:border-box;"></div>
<svg style="left:1767px;top:391.5px" width="10" height="15" viewBox="0 0 10 15"><path d="M5 1C2.5 1 1 3 1 5C1 7 2.5 8 3 10.2H7C7.5 8 9 7 9 5C9 3 7.5 1 5 1Z" fill="#f6f06a" stroke="#55500a" stroke-width=".9"/><path d="M3.2 11.2H6.8V13C6.8 14 3.2 14 3.2 13Z" fill="#ddd" stroke="#222" stroke-width=".9"/></svg>
<svg style="left:1805px;top:392px" width="12" height="13" viewBox="0 0 12 13"><rect x="1" y="6.5" width="7.5" height="5.5" fill="#fff" stroke="#111" stroke-width="1.3"/><path d="M6 6.5V3.5C6 .8 10.6 .8 10.6 3.5V4.6" fill="none" stroke="#111" stroke-width="1.3"/></svg>
<svg style="left:1837.3px;top:390.5px" width="17" height="17" viewBox="0 0 17 17"><circle cx="8.5" cy="8.5" r="7.4" fill="#fff" stroke="#ececec" stroke-width="1"/></svg>
<svg style="left:1997.5px;top:392px" width="14" height="14" viewBox="0 0 14 14"><path d="M7 .5L13.5 7L7 13.5L.5 7Z" fill="#000" /></svg>
<div class="t" style="left:1919.6px;top:392.63px;font-size:13.00px;line-height:14.94px;letter-spacing:-0.126px;">Continuous</div>
<div class="b" style="left:2016.6px;top:389px;width:29.4px;height:20px;overflow:hidden;"><div class="t" style="left:0.0px;top:3.63px;font-size:13.00px;line-height:14.94px;letter-spacing:0.116px;">Default</div></div>
<div class="t" style="left:1552.2px;top:412.63px;font-size:13.00px;line-height:14.94px;letter-spacing:0.123px;">lines</div>
<div class="b" style="left:1821px;top:413.5px;width:11.5px;height:11.5px;background:#000;border:1px solid #222;box-sizing:border-box;"></div>
<svg style="left:1767px;top:411.5px" width="10" height="15" viewBox="0 0 10 15"><path d="M5 1C2.5 1 1 3 1 5C1 7 2.5 8 3 10.2H7C7.5 8 9 7 9 5C9 3 7.5 1 5 1Z" fill="#f6f06a" stroke="#55500a" stroke-width=".9"/><path d="M3.2 11.2H6.8V13C6.8 14 3.2 14 3.2 13Z" fill="#ddd" stroke="#222" stroke-width=".9"/></svg>
<svg style="left:1805px;top:412px" width="12" height="13" viewBox="0 0 12 13"><rect x="1" y="6.5" width="7.5" height="5.5" fill="#fff" stroke="#111" stroke-width="1.3"/><path d="M6 6.5V3.5C6 .8 10.6 .8 10.6 3.5V4.6" fill="none" stroke="#111" stroke-width="1.3"/></svg>
<svg style="left:1837.3px;top:410.5px" width="17" height="17" viewBox="0 0 17 17"><circle cx="8.5" cy="8.5" r="7.4" fill="#fff" stroke="#ececec" stroke-width="1"/></svg>
<svg style="left:1997.5px;top:412px" width="14" height="14" viewBox="0 0 14 14"><path d="M7 .5L13.5 7L7 13.5L.5 7Z" fill="#000" /></svg>
<div class="t" style="left:1919.6px;top:412.63px;font-size:13.00px;line-height:14.94px;letter-spacing:-0.126px;">Continuous</div>
<div class="b" style="left:2016.6px;top:409px;width:29.4px;height:20px;overflow:hidden;"><div class="t" style="left:0.0px;top:3.63px;font-size:13.00px;line-height:14.94px;letter-spacing:0.116px;">Default</div></div>
<div class="t" style="left:1538.5px;top:432.63px;font-size:13.00px;line-height:14.94px;letter-spacing:-0.026px;">Annotation</div>
<div class="b" style="left:1821px;top:433.5px;width:11.5px;height:11.5px;background:#000;border:1px solid #222;box-sizing:border-box;"></div>
<svg style="left:1767px;top:431.5px" width="10" height="15" viewBox="0 0 10 15"><path d="M5 1C2.5 1 1 3 1 5C1 7 2.5 8 3 10.2H7C7.5 8 9 7 9 5C9 3 7.5 1 5 1Z" fill="#f6f06a" stroke="#55500a" stroke-width=".9"/><path d="M3.2 11.2H6.8V13C6.8 14 3.2 14 3.2 13Z" fill="#ddd" stroke="#222" stroke-width=".9"/></svg>
<svg style="left:1805px;top:432px" width="12" height="13" viewBox="0 0 12 13"><rect x="1" y="6.5" width="7.5" height="5.5" fill="#fff" stroke="#111" stroke-width="1.3"/><path d="M6 6.5V3.5C6 .8 10.6 .8 10.6 3.5V4.6" fill="none" stroke="#111" stroke-width="1.3"/></svg>
<svg style="left:1837.3px;top:430.5px" width="17" height="17" viewBox="0 0 17 17"><circle cx="8.5" cy="8.5" r="7.4" fill="#fff" stroke="#ececec" stroke-width="1"/></svg>
<svg style="left:1997.5px;top:432px" width="14" height="14" viewBox="0 0 14 14"><path d="M7 .5L13.5 7L7 13.5L.5 7Z" fill="#000" /></svg>
<div class="t" style="left:1919.6px;top:432.63px;font-size:13.00px;line-height:14.94px;letter-spacing:-0.126px;">Continuous</div>
<div class="b" style="left:2016.6px;top:429px;width:29.4px;height:20px;overflow:hidden;"><div class="t" style="left:0.0px;top:3.63px;font-size:13.00px;line-height:14.94px;letter-spacing:0.116px;">Default</div></div>
<div class="t" style="left:1523.8px;top:452.63px;font-size:13.00px;line-height:14.94px;letter-spacing:0.431px;">wood</div>
<div class="b" style="left:1821px;top:453.5px;width:11.5px;height:11.5px;background:#c0403c;border:1px solid #222;box-sizing:border-box;"></div>
<svg style="left:1767px;top:451.5px" width="10" height="15" viewBox="0 0 10 15"><path d="M5 1C2.5 1 1 3 1 5C1 7 2.5 8 3 10.2H7C7.5 8 9 7 9 5C9 3 7.5 1 5 1Z" fill="#f6f06a" stroke="#55500a" stroke-width=".9"/><path d="M3.2 11.2H6.8V13C6.8 14 3.2 14 3.2 13Z" fill="#ddd" stroke="#222" stroke-width=".9"/></svg>
<svg style="left:1805px;top:452px" width="12" height="13" viewBox="0 0 12 13"><rect x="1" y="6.5" width="7.5" height="5.5" fill="#fff" stroke="#111" stroke-width="1.3"/><path d="M6 6.5V3.5C6 .8 10.6 .8 10.6 3.5V4.6" fill="none" stroke="#111" stroke-width="1.3"/></svg>
<svg style="left:1837.3px;top:450.5px" width="17" height="17" viewBox="0 0 17 17"><circle cx="8.5" cy="8.5" r="7.4" fill="#fff" stroke="#111" stroke-width="1.1"/></svg>
<svg style="left:1997.5px;top:452px" width="14" height="14" viewBox="0 0 14 14"><path d="M7 .5L13.5 7L7 13.5L.5 7Z" fill="#c0403c" /></svg>
<div class="t" style="left:1919.6px;top:452.63px;font-size:13.00px;line-height:14.94px;letter-spacing:-0.126px;">Continuous</div>
<div class="b" style="left:2016.6px;top:449px;width:29.4px;height:20px;overflow:hidden;"><div class="t" style="left:0.0px;top:3.63px;font-size:13.00px;line-height:14.94px;letter-spacing:0.116px;">Default</div></div>
<div class="t" style="left:1859.3px;top:452.63px;font-size:13.00px;line-height:14.94px;letter-spacing:-0.273px;">New m...</div>
<div class="t" style="left:1523.8px;top:472.63px;font-size:13.00px;line-height:14.94px;letter-spacing:0.335px;color:#fff;">steel pipe</div>
<div class="b" style="left:1821px;top:473.5px;width:11.5px;height:11.5px;background:#00f0f8;border:1px solid #e0f8ff;box-sizing:border-box;"></div>
<svg style="left:1767px;top:471.5px" width="10" height="15" viewBox="0 0 10 15"><path d="M5 1C2.5 1 1 3 1 5C1 7 2.5 8 3 10.2H7C7.5 8 9 7 9 5C9 3 7.5 1 5 1Z" fill="#f6f06a" stroke="#55500a" stroke-width=".9"/><path d="M3.2 11.2H6.8V13C6.8 14 3.2 14 3.2 13Z" fill="#ddd" stroke="#222" stroke-width=".9"/></svg>
<svg style="left:1805px;top:472px" width="12" height="13" viewBox="0 0 12 13"><rect x="1" y="6.5" width="7.5" height="5.5" fill="#fff" stroke="#111" stroke-width="1.3"/><path d="M6 6.5V3.5C6 .8 10.6 .8 10.6 3.5V4.6" fill="none" stroke="#111" stroke-width="1.3"/></svg>
<svg style="left:1837.3px;top:470.5px" width="17" height="17" viewBox="0 0 17 17"><circle cx="8.5" cy="8.5" r="7.8" fill="#fff"/></svg>
<svg style="left:1997.5px;top:472px" width="14" height="14" viewBox="0 0 14 14"><path d="M7 .5L13.5 7L7 13.5L.5 7Z" fill="#00f0f8" stroke="#fff" stroke-width=".8"/></svg>
<div class="t" style="left:1919.6px;top:472.63px;font-size:13.00px;line-height:14.94px;letter-spacing:-0.126px;color:#fff;">Continuous</div>
<div class="b" style="left:2016.6px;top:469px;width:29.4px;height:20px;overflow:hidden;"><div class="t" style="left:0.0px;top:3.63px;font-size:13.00px;line-height:14.94px;letter-spacing:0.116px;color:#fff;">Default</div></div>
<div class="t" style="left:1859.3px;top:472.63px;font-size:13.00px;line-height:14.94px;letter-spacing:-0.273px;color:#fff;">New m...</div>
<svg style="left:1696px;top:355px" width="11" height="9" viewBox="0 0 11 9"><path d="M1 5L4 8L10 1" fill="none" stroke="#000" stroke-width="2"/></svg>
<svg style="left:1509px;top:374px" width="10" height="10"><rect x=".5" y=".5" width="8" height="8" fill="#fff" stroke="#8e95a3"/><path d="M2.5 4.5H6.5" stroke="#222"/></svg>
<svg style="left:1523px;top:394px" width="10" height="10"><rect x=".5" y=".5" width="8" height="8" fill="#fff" stroke="#8e95a3"/><path d="M2.5 4.5H6.5" stroke="#222"/></svg>
<div class="b" style="left:1503px;top:1002px;width:543px;height:19px;background:#f0f0f0;"></div>
<div class="b" style="left:1524px;top:1002px;width:463px;height:19px;background:#cdcdcd;"></div>
<svg style="left:1503px;top:1002px" width="543" height="19"><path d="M13 4.5L8 9.5L13 14.5" fill="none" stroke="#404040" stroke-width="1.8"/><path d="M530 4.5L535 9.5L530 14.5" fill="none" stroke="#404040" stroke-width="1.8"/></svg>
<svg style="left:30px;top:999.800px" width="290" height="27"><path d="M236.3 0.5 L245.3 17 Q249.3 24.5 253.3 24.5 L274.6 24.5 Q277.6 24.5 277.6 21.5 L277.6 0.5" fill="#e4e6ee" stroke="#a9aec0"/><path d="M177.2 0.5 L186.2 17 Q190.2 24.5 194.2 24.5 L235.3 24.5 Q238.3 24.5 238.3 21.5 L238.3 0.5" fill="#d3d8e8" stroke="#a9aec0"/><path d="M119.8 0.5 L128.8 17 Q132.8 24.5 136.8 24.5 L176.2 24.5 Q179.2 24.5 179.2 21.5 L179.2 0.5" fill="#d3d8e8" stroke="#a9aec0"/><path d="M72.6 0.5 L81.6 17 Q85.6 24.5 89.6 24.5 L118.8 24.5 Q121.8 24.5 121.8 21.5 L121.8 0.5" fill="#d3d8e8" stroke="#a9aec0"/><path d="M4.9 0 L4.9 15 L13.9 24.5 L71.6 24.5 Q74.6 24.5 74.6 21.5 L74.6 0Z" fill="#fff" stroke="none"/><path d="M4.9 0 L4.9 15 L13.9 24.5 L71.6 24.5 Q74.6 24.5 74.6 21.5 L74.6 0" fill="none" stroke="#b9bdcb"/><path d="M260.2 9.5v10M255.2 14.5h10" stroke="#6e7280" stroke-width="3.4"/><path d="M260.2 10.5v8M256.2 14.5h8" stroke="#e8eaf1" stroke-width="1.4"/></svg>
<div class="t" style="left:47.6px;top:1003.82px;font-size:15.50px;line-height:17.81px;letter-spacing:-0.486px;color:#1a1a1a;">Parallel</div>
<div class="t" style="left:117.3px;top:1003.82px;font-size:15.50px;line-height:17.81px;letter-spacing:-0.130px;color:#1a1a1a;">Top</div>
<div class="t" style="left:166.5px;top:1003.82px;font-size:15.50px;line-height:17.81px;letter-spacing:-0.415px;color:#1a1a1a;">Front</div>
<div class="t" style="left:223.5px;top:1003.82px;font-size:15.50px;line-height:17.81px;letter-spacing:-0.177px;color:#1a1a1a;">Right</div>
<div class="b" style="left:3px;top:1032px;width:1px;height:45px;background:#b8bcc8;"></div>
<div class="b" style="left:5px;top:1032px;width:1px;height:45px;background:#b8bcc8;"></div>
<div class="b" style="left:9.2px;top:1033px;width:20.5px;height:20.5px;background:#fff;border:1px solid #333;box-sizing:border-box;"></div>
<svg style="left:9.2px;top:1033px" width="21" height="21"><path d="M4.500 10.500L8 14L10.500 11.500L13 11L16.500 5.500" fill="none" stroke="#2e2e2e" stroke-width="2"/></svg>
<div class="t" style="left:33.4px;top:1033.98px;font-size:15.00px;line-height:17.23px;letter-spacing:-1.229px;color:#222;">End</div>
<div class="b" style="left:62.1px;top:1033px;width:20.5px;height:20.5px;background:#fff;border:1px solid #333;box-sizing:border-box;"></div>
<svg style="left:62.1px;top:1033px" width="21" height="21"><path d="M4.500 10.500L8 14L10.500 11.500L13 11L16.500 5.500" fill="none" stroke="#2e2e2e" stroke-width="2"/></svg>
<div class="t" style="left:86.5px;top:1033.98px;font-size:15.00px;line-height:17.23px;letter-spacing:-0.778px;color:#222;">Near</div>
<div class="b" style="left:121px;top:1033px;width:20.5px;height:20.5px;background:#fff;border:1px solid #333;box-sizing:border-box;"></div>
<svg style="left:121px;top:1033px" width="21" height="21"><path d="M4.500 10.500L8 14L10.500 11.500L13 11L16.500 5.500" fill="none" stroke="#2e2e2e" stroke-width="2"/></svg>
<div class="t" style="left:145.6px;top:1033.98px;font-size:15.00px;line-height:17.23px;letter-spacing:-0.878px;color:#222;">Point</div>
<div class="b" style="left:180px;top:1033px;width:20.5px;height:20.5px;background:#fff;border:1px solid #333;box-sizing:border-box;"></div>
<svg style="left:180px;top:1033px" width="21" height="21"><path d="M4.500 10.500L8 14L10.500 11.500L13 11L16.500 5.500" fill="none" stroke="#2e2e2e" stroke-width="2"/></svg>
<div class="t" style="left:204.7px;top:1033.98px;font-size:15.00px;line-height:17.23px;letter-spacing:-1.090px;color:#222;">Mid</div>
<div class="b" style="left:231.1px;top:1033px;width:20.5px;height:20.5px;background:#fff;border:1px solid #333;box-sizing:border-box;"></div>
<svg style="left:231.1px;top:1033px" width="21" height="21"><path d="M4.500 10.500L8 14L10.500 11.500L13 11L16.500 5.500" fill="none" stroke="#2e2e2e" stroke-width="2"/></svg>
<div class="t" style="left:255.3px;top:1033.98px;font-size:15.00px;line-height:17.23px;letter-spacing:-1.439px;color:#222;">Cen</div>
<div class="b" style="left:284px;top:1033px;width:20.5px;height:20.5px;background:#fff;border:1px solid #333;box-sizing:border-box;"></div>
<svg style="left:284px;top:1033px" width="21" height="21"><path d="M4.500 10.500L8 14L10.500 11.500L13 11L16.500 5.500" fill="none" stroke="#2e2e2e" stroke-width="2"/></svg>
<div class="t" style="left:308.2px;top:1033.98px;font-size:15.00px;line-height:17.23px;letter-spacing:-1.292px;color:#222;">Int</div>
<div class="b" style="left:326px;top:1033px;width:20.5px;height:20.5px;background:#fff;border:1px solid #333;box-sizing:border-box;"></div>
<svg style="left:326px;top:1033px" width="21" height="21"><path d="M4.500 10.500L8 14L10.500 11.500L13 11L16.500 5.500" fill="none" stroke="#2e2e2e" stroke-width="2"/></svg>
<div class="t" style="left:350.7px;top:1033.98px;font-size:15.00px;line-height:17.23px;letter-spacing:-0.996px;color:#222;">Perp</div>
<div class="b" style="left:384.1px;top:1033px;width:20.5px;height:20.5px;background:#fff;border:1px solid #333;box-sizing:border-box;"></div>
<svg style="left:384.1px;top:1033px" width="21" height="21"><path d="M4.500 10.500L8 14L10.500 11.500L13 11L16.500 5.500" fill="none" stroke="#2e2e2e" stroke-width="2"/></svg>
<div class="t" style="left:409.0px;top:1033.98px;font-size:15.00px;line-height:17.23px;letter-spacing:-0.561px;color:#222;">Tan</div>
<div class="b" style="left:437.5px;top:1033px;width:20.5px;height:20.5px;background:#fff;border:1px solid #333;box-sizing:border-box;"></div>
<svg style="left:437.5px;top:1033px" width="21" height="21"><path d="M4.500 10.500L8 14L10.500 11.500L13 11L16.500 5.500" fill="none" stroke="#2e2e2e" stroke-width="2"/></svg>
<div class="t" style="left:461.0px;top:1033.98px;font-size:15.00px;line-height:17.23px;letter-spacing:-1.048px;color:#222;">Quad</div>
<div class="b" style="left:500px;top:1033px;width:20.5px;height:20.5px;background:#fff;border:1px solid #333;box-sizing:border-box;"></div>
<svg style="left:500px;top:1033px" width="21" height="21"><path d="M4.500 10.500L8 14L10.500 11.500L13 11L16.500 5.500" fill="none" stroke="#2e2e2e" stroke-width="2"/></svg>
<div class="t" style="left:523.5px;top:1033.98px;font-size:15.00px;line-height:17.23px;letter-spacing:-1.339px;color:#222;">Knot</div>
<div class="b" style="left:555px;top:1033px;width:20.5px;height:20.5px;background:#fff;border:1px solid #333;box-sizing:border-box;"></div>
<div class="t" style="left:578.5px;top:1033.98px;font-size:15.00px;line-height:17.23px;letter-spacing:-0.837px;color:#222;">Vertex</div>
<div class="b" style="left:622.5px;top:1034px;width:19px;height:19px;background:#e6e6e9;border:1px solid #bfbfc6;box-sizing:border-box;"></div>
<div class="t" style="left:645.5px;top:1033.98px;font-size:15.00px;line-height:17.23px;letter-spacing:-0.669px;color:#222;">Project</div>
<div class="b" style="left:693.5px;top:1034px;width:19px;height:19px;background:#e6e6e9;border:1px solid #bfbfc6;box-sizing:border-box;"></div>
<div class="t" style="left:716.5px;top:1033.98px;font-size:15.00px;line-height:17.23px;letter-spacing:-0.646px;color:#222;">Disable</div>
<div class="b" style="left:0px;top:1080px;width:2048px;height:1px;background:#a9adb9;"></div>
<div class="b" style="left:0px;top:1081px;width:2048px;height:21px;background:#e4e6ed;"></div>
<div class="b" style="left:67px;top:1081px;width:1px;height:21px;background:#b4b8c6;"></div>
<div class="b" style="left:155px;top:1081px;width:1px;height:21px;background:#b4b8c6;"></div>
<div class="b" style="left:243px;top:1081px;width:1px;height:21px;background:#b4b8c6;"></div>
<div class="b" style="left:331px;top:1081px;width:1px;height:21px;background:#b4b8c6;"></div>
<div class="b" style="left:418px;top:1081px;width:1px;height:21px;background:#b4b8c6;"></div>
<div class="b" style="left:592px;top:1081px;width:1px;height:21px;background:#b4b8c6;"></div>
<div class="b" style="left:682px;top:1081px;width:1px;height:21px;background:#b4b8c6;"></div>
<div class="b" style="left:741px;top:1081px;width:1px;height:21px;background:#b4b8c6;"></div>
<div class="b" style="left:805px;top:1081px;width:1px;height:21px;background:#b4b8c6;"></div>
<div class="b" style="left:870px;top:1081px;width:1px;height:21px;background:#b4b8c6;"></div>
<div class="b" style="left:973px;top:1081px;width:1px;height:21px;background:#b4b8c6;"></div>
<div class="b" style="left:1051px;top:1081px;width:1px;height:21px;background:#b4b8c6;"></div>
<div class="b" style="left:1182px;top:1081px;width:1px;height:21px;background:#b4b8c6;"></div>
<div class="b" style="left:1235px;top:1081px;width:1px;height:21px;background:#b4b8c6;"></div>
<div class="b" style="left:2040px;top:1081px;width:1px;height:21px;background:#b4b8c6;"></div>
<div class="b" style="left:806px;top:1081px;width:64px;height:21px;background:#ebf1fb;"></div>
<div class="b" style="left:871px;top:1081px;width:102px;height:21px;background:#ebf1fb;"></div>
<div class="b" style="left:974px;top:1081px;width:77px;height:21px;background:#ebf1fb;"></div>
<div class="t" style="left:9.2px;top:1084.14px;font-size:14.40px;line-height:16.55px;letter-spacing:0.062px;color:#111;">CPlane</div>
<div class="t" style="left:74.2px;top:1084.14px;font-size:14.40px;line-height:16.55px;letter-spacing:-0.050px;color:#111;">x -1805.210</div>
<div class="t" style="left:162.0px;top:1084.14px;font-size:14.40px;line-height:16.55px;letter-spacing:-0.050px;color:#111;">y -2238.964</div>
<div class="t" style="left:264.6px;top:1084.14px;font-size:14.40px;line-height:16.55px;letter-spacing:-0.076px;color:#111;">z 0.000</div>
<div class="t" style="left:341.5px;top:1084.14px;font-size:14.40px;line-height:16.55px;letter-spacing:-0.063px;color:#111;">Millimeters</div>
<div class="t" style="left:441.5px;top:1084.14px;font-size:14.40px;line-height:16.55px;letter-spacing:-0.089px;color:#111;">Default</div>
<div class="t" style="left:606.5px;top:1084.14px;font-size:14.40px;line-height:16.55px;letter-spacing:-0.092px;color:#111;">Grid Snap</div>
<div class="t" style="left:694.5px;top:1084.14px;font-size:14.40px;line-height:16.55px;letter-spacing:-0.002px;color:#111;">Ortho</div>
<div class="t" style="left:753.5px;top:1084.14px;font-size:14.40px;line-height:16.55px;letter-spacing:-0.104px;color:#111;">Planar</div>
<div class="t" style="left:815.5px;top:1084.14px;font-size:14.40px;line-height:16.55px;letter-spacing:0.039px;font-weight:bold;color:#111;">Osnap</div>
<div class="t" style="left:883.5px;top:1084.14px;font-size:14.40px;line-height:16.55px;letter-spacing:-0.045px;font-weight:bold;color:#111;">SmartTrack</div>
<div class="t" style="left:984.5px;top:1084.14px;font-size:14.40px;line-height:16.55px;letter-spacing:-0.086px;font-weight:bold;color:#111;">Gumball</div>
<div class="t" style="left:1069.0px;top:1084.14px;font-size:14.40px;line-height:16.55px;letter-spacing:0.127px;color:#111;">Record History</div>
<div class="t" style="left:1193.0px;top:1084.14px;font-size:14.40px;line-height:16.55px;letter-spacing:0.000px;color:#111;">Filter</div>
<div class="t" style="left:1239.0px;top:1084.14px;font-size:14.40px;line-height:16.55px;letter-spacing:0.023px;color:#111;">Available physical memory: 11150 MB</div>
<div class="b" style="left:423.5px;top:1085px;width:15px;height:15px;background:#000;"></div>
<div class="b" style="left:0px;top:1102px;width:2048px;height:50px;background:linear-gradient(90deg,#050505 0,#050505 45%,#0a130c 55%,#07100c 70%,#050808 100%);"></div>
<div class="b" style="left:60px;top:1103px;width:430px;height:49px;background:#353535;"></div>
<svg style="left:20px;top:1118px" width="20" height="20" viewBox="0 0 20 20"><path d="M0 3L8.3 1.8V9.5H0ZM9.3 1.6L20 0V9.5H9.3ZM0 10.5H8.3V18.2L0 17ZM9.3 10.5H20V20L9.3 18.4Z" fill="#fff"/></svg>
<svg style="left:72px;top:1114px" width="26" height="26"><circle cx="13" cy="13" r="10.600" fill="none" stroke="#f2f2f2" stroke-width="3.200"/></svg>
<div class="t" style="left:110.0px;top:1118.64px;font-size:17.00px;line-height:19.53px;letter-spacing:0.489px;color:#a9a9a9;">Ask me anything</div>
<svg style="left:457px;top:1116px" width="14" height="22" viewBox="0 0 14 22"><rect x="4" y="1" width="6" height="12" rx="3" fill="none" stroke="#bdbdbd" stroke-width="1.3"/><path d="M1.5 10C1.5 17.500 12.500 17.500 12.500 10M7 16V20M3.500 20.500H10.500" fill="none" stroke="#bdbdbd" stroke-width="1.3"/></svg>
<svg style="left:507px;top:1116px" width="26" height="22"><rect x="4.5" y="1.500" width="17" height="19" fill="none" stroke="#fff" stroke-width="1.6"/><path d="M2 4.500H.8V17.500H2M24 4.500H25.200V17.500H24" fill="none" stroke="#fff" stroke-width="1.300"/></svg>
<svg style="left:570px;top:1113px" width="27" height="28" viewBox="0 0 27 28"><path d="M1 13C2 4 9 0.5 14.5 0.5C22 0.5 26 6 26 12.500V16H9.500C9.500 21 15 24.500 24 20.500V26C14 30 3 26 3 16.500C3 13 5 10 8 8.500C5 9.500 2.500 11 1 13ZM9.500 11H18.500C18.500 4.500 9.800 4.500 9.500 11Z" fill="#1e7fd8"/></svg>
<svg style="left:630px;top:1113px" width="30" height="28" viewBox="0 0 30 28"><path d="M1 3H11L13 5.500H29V25H1Z" fill="#f5c33b"/><rect x="1" y="9" width="28" height="16" fill="#fde28a"/><rect x="4" y="14" width="22" height="11" fill="#3c9fe8"/><rect x="10" y="18" width="10" height="7" fill="#fde28a"/><rect x="1" y="24" width="28" height="1.500" fill="#d9a521"/></svg>
<svg style="left:692px;top:1111px" width="28" height="30" viewBox="0 0 28 30"><path d="M9 7C9 0 19 0 19 7" fill="none" stroke="#fff" stroke-width="1.600"/><path d="M1 8L27 6V28L1 26Z" fill="#fff"/><path d="M8 12.500L13 12V16.500H8ZM14 11.900L20 11.300V16.500H14ZM8 17.500H13V22.200L8 21.800ZM14 17.500H20V22.800L14 22.300Z" fill="#0a0a0a"/></svg>
<svg style="left:754px;top:1113px" width="28" height="28" viewBox="0 0 28 28"><circle cx="14" cy="14" r="13.500" fill="#e33b2e"/><path d="M14 14L2.300 7.200A13.500 13.500 0 0 0 8.500 26.300Z" fill="#2ba24c"/><path d="M14 14L8.500 26.300A13.500 13.500 0 0 0 27.500 13.500L14 13.500Z" fill="#fbc116"/><path d="M14 14L27.400 12A13.500 13.500 0 0 0 2.300 7.200Z" fill="#e33b2e"/><circle cx="14" cy="14" r="6.200" fill="#fff"/><circle cx="14" cy="14" r="5" fill="#4a8af4"/></svg>
<svg style="left:816px;top:1112px" width="30" height="30" viewBox="0 0 30 30"><path d="M14 7C5 7 1 13 1 18C1 25 8 28 14 27C17 26.500 15 23 18 22C24 21 27 18 26 13C25 9 20 7 14 7Z" fill="#e9e4d6" stroke="#b7b09a" stroke-width=".8"/><circle cx="8" cy="14" r="2.300" fill="#d33"/><circle cx="14" cy="11.500" r="2.300" fill="#e8b81e"/><circle cx="20" cy="13" r="2.200" fill="#3a9a3a"/><circle cx="7" cy="20" r="2.300" fill="#36c"/><circle cx="12" cy="23" r="2" fill="#84b"/><path d="M27 1L29 3L17 19L14 20L15 17Z" fill="#c8892e" stroke="#7a5a1a" stroke-width=".6"/></svg>
<div class="b" style="left:863px;top:1103px;width:60px;height:49px;background:#3a3f42;"></div>
<svg style="left:877px;top:1110px" width="32" height="32" viewBox="0 0 32 32"><rect x="1" y="1" width="30" height="30" fill="#161616"/><path d="M2 3L12 2L14 8L20 5L26 2L29 8L25 13L30 22L27 29L21 26L17 19L11 20L7 14L3 11Z" fill="#d8d8d8"/><path d="M13 10L18 9L21 14L16 15Z" fill="#777"/><path d="M22 20L26 23L25 27Z" fill="#888"/></svg>
<div class="b" style="left:620.6px;top:1149px;width:50.4px;height:3px;background:#82b6e6;"></div>
<div class="b" style="left:745px;top:1149px;width:50px;height:3px;background:#82b6e6;"></div>
<div class="b" style="left:806px;top:1149px;width:50px;height:3px;background:#82b6e6;"></div>
<div class="b" style="left:863px;top:1149px;width:60px;height:3px;background:#82b6e6;"></div>
<svg style="left:1670px;top:1110px" width="300" height="36"><path d="M7 21L15 13L23 21" fill="none" stroke="#fff" stroke-width="1.400"/><rect x="45" y="8" width="17" height="16" rx="6" fill="#1a98ac" stroke="#d8f4f8" stroke-width="1.200"/><text x="53.500" y="20.500" font-size="13" font-weight="bold" fill="#fff" text-anchor="middle" font-family="Liberation Sans">e</text><circle cx="61" cy="24" r="4.200" fill="#f0b429"/><rect x="60.400" y="21.500" width="1.200" height="3.200" fill="#fff"/><rect x="87.500" y="12.500" width="16" height="9" fill="none" stroke="#fff" stroke-width="1.200"/><rect x="104" y="15" width="2" height="4" fill="#fff"/><path d="M84 9V13M87 9V13M83 13H88V15.500H83Z" stroke="#fff" fill="#fff" stroke-width="1"/><path d="M129 24A13 13 0 0 1 142 11M133 24A9 9 0 0 1 142 15M137 24A5 5 0 0 1 142 19" fill="none" stroke="#fff" stroke-width="1.300"/><rect x="140" y="22" width="3" height="3" fill="#fff"/><path d="M165 14.500H168.500L173 10.500V24.500L168.500 20.500H165Z" fill="none" stroke="#fff" stroke-width="1.200"/><path d="M177 14L184 21M184 14L177 21" stroke="#fff" stroke-width="1.200"/><path d="M205 7.500H224V23H218L214.500 27L214.500 23H205Z" fill="#fff"/><path d="M209 12H220M209 15.500H220M209 19H217" stroke="#111" stroke-width="1.200"/><rect x="246.500" y="9.500" width="28" height="16" rx="1.5" fill="none" stroke="#fff" stroke-width="1.100"/><path d="M250 13.500H271M250 17.500H271" stroke="#fff" stroke-width="1.300" stroke-dasharray="2 1.800"/><path d="M253 21.500H268" stroke="#fff" stroke-width="1.300"/></svg>
<div class="t" style="left:1971.0px;top:1106.32px;font-size:15.50px;line-height:17.81px;letter-spacing:-0.674px;color:#fff;">2:58 PM</div>
<div class="t" style="left:1960.0px;top:1127.72px;font-size:15.50px;line-height:17.81px;letter-spacing:-0.157px;color:#fff;">12/10/2015</div>
<div class="b" style="left:2042px;top:1103px;width:1px;height:49px;background:#555;"></div>
</body></html>
